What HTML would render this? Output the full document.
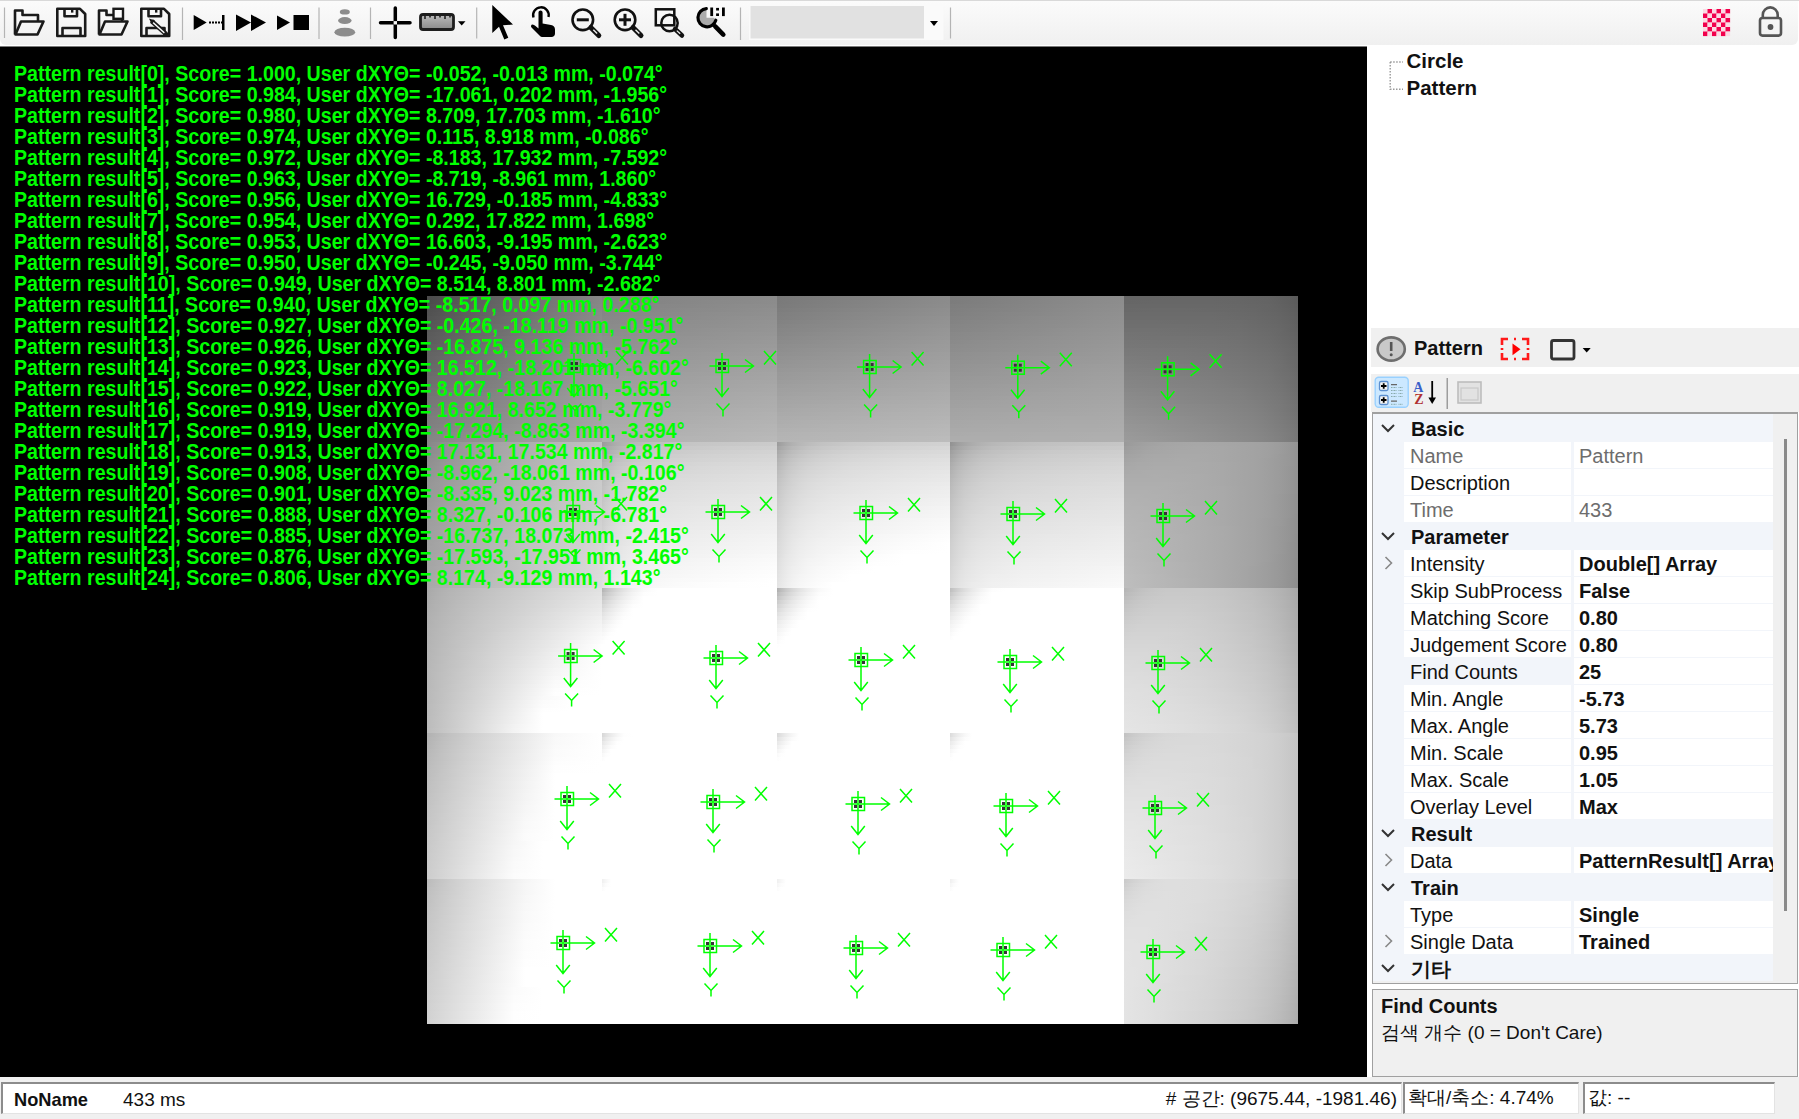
<!DOCTYPE html>
<html><head><meta charset="utf-8">
<style>
*{box-sizing:border-box}
html,body{margin:0;padding:0;width:1799px;height:1119px;overflow:hidden;background:#f0f0f0;font-family:"Liberation Sans",sans-serif}
.abs{position:absolute}
#tb{position:absolute;left:0;top:0;width:1799px;height:46px;background:#fff}
#tbi{position:absolute;left:0;top:1px;width:1798px;height:44px;background:linear-gradient(#fbfbfb,#f0f0f0);border-radius:0 0 6px 6px}
#tbline{position:absolute;left:0;top:0;width:1799px;height:1px;background:#d9d9d9}
#view{position:absolute;left:0;top:47px;width:1367px;height:1030px;background:#000;overflow:hidden}
#img{position:absolute;left:427px;top:296px;width:871px;height:728px;background:#888}
#img i{position:absolute;left:0;width:871px;display:block}
.ov{position:absolute;left:0;top:0}
.gl{position:absolute;left:14px;height:21px;line-height:21px;font-weight:bold;font-size:21.6px;color:#00ff00;white-space:pre;transform-origin:0 0;transform:scaleX(0.908)}
#rp{position:absolute;left:1367px;top:46px;width:432px;height:1031px;background:#fff}
.tree{position:absolute;font-size:20.5px;font-weight:bold;color:#111}
#ph{position:absolute;left:1371px;top:328px;width:428px;height:39px;background:#f0f0f0}
#ptb{position:absolute;left:1371px;top:374px;width:428px;height:38px;background:#f0f0f0}
#grid{position:absolute;left:1372px;top:412px;width:426px;height:572px;border:1px solid #a0a0a0;border-top-width:2px;background:#f0f0f0}
#gin{position:absolute;left:0;top:0;width:400px;height:567px;background:#f2f5fa}
.pr{position:absolute;left:0;width:400px;height:27px}
.cat .cn{position:absolute;left:38px;top:1px;line-height:28px;font-weight:bold;font-size:20px;color:#111}
.chev{position:absolute;left:8px;top:10px}
.chevr{position:absolute;left:11px;top:7px}
.pl{position:absolute;left:31px;top:1px;width:167px;height:26px;background:#fff;padding-left:6px;line-height:28px;font-size:20px;color:#111;white-space:nowrap;overflow:hidden}
.pv{position:absolute;left:201px;top:1px;width:199px;height:26px;background:#fff;padding-left:5px;line-height:28px;font-size:20px;font-weight:bold;color:#111;white-space:nowrap;overflow:hidden}
.pl.sel{background:#f2f5fa}
.ro{color:#6d6d6d !important;font-weight:normal !important}
#sb{position:absolute;left:1773px;top:413px;width:24px;height:570px;background:#f0f0f0}
#sbt{position:absolute;left:1784px;top:439px;width:3px;height:472px;background:#8a8a8a}
#desc{position:absolute;left:1372px;top:989px;width:426px;height:88px;border:1px solid #a0a0a0;background:#f0f0f0}
#status{position:absolute;left:0;top:1077px;width:1799px;height:42px;background:#f0f0f0}
.sp{position:absolute;top:5px;height:32px;background:#fff;border-top:2px solid #8c8c8c;border-left:2px solid #8c8c8c;border-bottom:1px solid #e3e3e3;border-right:1px solid #e3e3e3;font-size:19px;line-height:28px;color:#111;white-space:pre}
</style></head><body>
<div id="tb"><div id="tbline"></div><div id="tbi"></div>
<svg class="abs" style="left:0;top:0" width="1799" height="46" viewBox="0 0 1799 46"><line x1="4.5" y1="7.5" x2="4.5" y2="38.0" stroke="#b4b4b4" stroke-width="1.2"/><g transform="translate(0 0)" fill="none" stroke="#1a1a1a" stroke-width="2.6" stroke-linejoin="round"><path d="M15 34.5V10.5H22.5V15H38V21.5"/><path d="M15.5 34.5L21 21.5H43.5L37.5 34.5Z"/></g><g transform="translate(0 0)" fill="none" stroke="#1a1a1a" stroke-width="2.6" stroke-linejoin="round"><path d="M57.3 8.8H80L85.2 14V36H57.3Z"/><path d="M64.5 9V16.2H77V9"/><path d="M62.5 35.5V28H80.5V35.5"/><rect x="71" y="9" width="2.4" height="3.6" fill="#1a1a1a" stroke="none"/></g><g transform="translate(84 0)" fill="none" stroke="#1a1a1a" stroke-width="2.6" stroke-linejoin="round"><path d="M15 34.5V10.5H22.5V15H38V21.5"/><path d="M15.5 34.5L21 21.5H43.5L37.5 34.5Z"/></g><rect x="113.5" y="8.8" width="9.5" height="10" fill="#fff" stroke="#1a1a1a" stroke-width="2.4"/><g transform="translate(84 0)" fill="none" stroke="#1a1a1a" stroke-width="2.6" stroke-linejoin="round"><path d="M57.3 8.8H80L85.2 14V36H57.3Z"/><path d="M64.5 9V16.2H77V9"/><path d="M62.5 35.5V28H80.5V35.5"/><rect x="71" y="9" width="2.4" height="3.6" fill="#1a1a1a" stroke="none"/></g><path d="M151.5 21L166 34" stroke="#1a1a1a" stroke-width="4.5" stroke-linecap="butt"/><path d="M153 22.5L164.5 33" stroke="#fff" stroke-width="1.5"/><path d="M149 18.5L155 20.5L151.5 24Z" fill="#1a1a1a"/><rect x="164.5" y="32.5" width="4.5" height="4.5" fill="#1a1a1a"/><line x1="182.5" y1="7.5" x2="182.5" y2="40.0" stroke="#b4b4b4" stroke-width="1.2"/><path d="M193.7 15L206.7 22.6L193.7 30Z" fill="#000"/><path d="M209 22.6H222" stroke="#000" stroke-width="2" stroke-dasharray="2 1"/><rect x="222" y="15" width="2.5" height="15" fill="#000"/><path d="M236 14.5L251 22.6L236 31Z M251 14.5L266 22.6L251 31Z" fill="#000"/><path d="M277 15.5L290 22.6L277 30Z" fill="#000"/><rect x="293.5" y="15" width="15.5" height="15" fill="#000"/><line x1="319.0" y1="7.5" x2="319.0" y2="39.0" stroke="#b4b4b4" stroke-width="1.2"/><g fill="#8c8c8c"><ellipse cx="344.8" cy="11.9" rx="5" ry="2.6"/><ellipse cx="344.8" cy="20.6" rx="6.8" ry="3.5"/><ellipse cx="344.8" cy="32.2" rx="10.4" ry="4.4"/></g><line x1="370.5" y1="7.5" x2="370.5" y2="39.0" stroke="#b4b4b4" stroke-width="1.2"/><path d="M380.5 22.8H393.6M397 22.8H410M395.3 8V21.1M395.3 24.5V37.6" stroke="#000" stroke-width="3.5" stroke-linecap="round"/><rect x="393.6" y="21.1" width="3.4" height="3.4" fill="#f6f6f6"/><defs><linearGradient id="rg" x1="0" y1="0" x2="0" y2="1"><stop offset="0" stop-color="#bdbdbd"/><stop offset="1" stop-color="#8a8a8a"/></linearGradient></defs><rect x="420.5" y="14.5" width="33" height="15" rx="2.5" fill="url(#rg)" stroke="#1e1e1e" stroke-width="2.8"/><path d="M425 15V19M430 15V17.5M435 15V19M440 15V17.5M445 15V19M450 15V17.5" stroke="#1e1e1e" stroke-width="1.6"/><path d="M458 21.2H465.5L461.7 25.5Z" fill="#000"/><line x1="476.7" y1="7.5" x2="476.7" y2="38.5" stroke="#b4b4b4" stroke-width="1.2"/><path d="M492.3 5V33L499 26.8L504.3 39.5L508.3 37.8L503 25.3L513 24.5Z" fill="#000"/><path d="M533.5 17.5A7.8 7.8 0 1 1 548.5 17" fill="none" stroke="#000" stroke-width="2.4"/><path d="M538.5 12.5C538.5 9.8 542.6 9.8 542.6 12.5V23.5L551 25C553.5 25.4 555 27 555 29.5V33.5C555 35.5 553.5 37 551.5 37H543C541.5 37 540.5 36.5 539.5 35.5L531.5 27.5C530.5 26.5 531 24.5 532.5 24.5C533.5 24.5 534.5 25 535.5 26L538.5 28.5Z" fill="#000"/><circle cx="582.8" cy="19.8" r="10.3" fill="none" stroke="#111" stroke-width="2.6"/><path d="M576.8 19.8H588.8" stroke="#111" stroke-width="3"/><path d="M590.8 27.5L598.8 35.5" stroke="#111" stroke-width="5" stroke-linecap="round"/><path d="M593.3 29.8L597.1 33.6" stroke="#eee" stroke-width="1.4"/><circle cx="625.0" cy="19.8" r="10.3" fill="none" stroke="#111" stroke-width="2.6"/><path d="M619.0 19.8H631.0" stroke="#111" stroke-width="3"/><path d="M625.0 13.8V25.8" stroke="#111" stroke-width="3"/><path d="M633.0 27.5L641.0 35.5" stroke="#111" stroke-width="5" stroke-linecap="round"/><path d="M635.5 29.8L639.3 33.6" stroke="#eee" stroke-width="1.4"/><rect x="655.8" y="9.3" width="18.5" height="16" fill="none" stroke="#111" stroke-width="2.5"/><circle cx="669.5" cy="23" r="8.2" fill="none" stroke="#111" stroke-width="2.5"/><path d="M675 29L682 35.5" stroke="#111" stroke-width="4.5" stroke-linecap="round"/><path d="M676.8 30.6L680.2 33.8" stroke="#eee" stroke-width="1.3"/><path d="M706.5 17.7V9.7A8 8 0 1 0 714.5 17.7Z" fill="#ababab"/><path d="M706.3 8.6A9.1 9.1 0 1 0 715.8 20.2" fill="none" stroke="#000" stroke-width="3.2" stroke-linecap="round"/><rect x="710.3" y="7.5" width="2.8" height="8.6" fill="#000"/><rect x="716.1" y="7.9" width="2.9" height="2.6" fill="#000"/><rect x="716.1" y="13.4" width="2.9" height="2.6" fill="#000"/><rect x="722" y="7.5" width="2.8" height="8.6" fill="#000"/><path d="M715.2 26.4L723.3 34.6" stroke="#000" stroke-width="4.6" stroke-linecap="round"/><line x1="740.5" y1="7.5" x2="740.5" y2="40.0" stroke="#b4b4b4" stroke-width="1.2"/><rect x="749" y="4.5" width="194.5" height="35.5" fill="#fafafa"/><rect x="750.5" y="6" width="173.5" height="32.5" fill="#e1e1e1"/><path d="M930 21H938L934 26Z" fill="#000"/><line x1="950.5" y1="7.5" x2="950.5" y2="38.5" stroke="#b4b4b4" stroke-width="1.2"/><rect x="1703.0" y="9.0" width="4.6" height="4.6" fill="#fcd9e3"/><rect x="1707.5" y="9.0" width="4.6" height="4.6" fill="#f2004c"/><rect x="1712.0" y="9.0" width="4.6" height="4.6" fill="#fcd9e3"/><rect x="1716.5" y="9.0" width="4.6" height="4.6" fill="#f2004c"/><rect x="1721.0" y="9.0" width="4.6" height="4.6" fill="#fcd9e3"/><rect x="1725.5" y="9.0" width="4.6" height="4.6" fill="#f2004c"/><rect x="1703.0" y="13.5" width="4.6" height="4.6" fill="#f2004c"/><rect x="1707.5" y="13.5" width="4.6" height="4.6" fill="#fcd9e3"/><rect x="1712.0" y="13.5" width="4.6" height="4.6" fill="#f2004c"/><rect x="1716.5" y="13.5" width="4.6" height="4.6" fill="#fcd9e3"/><rect x="1721.0" y="13.5" width="4.6" height="4.6" fill="#f2004c"/><rect x="1725.5" y="13.5" width="4.6" height="4.6" fill="#fcd9e3"/><rect x="1703.0" y="18.0" width="4.6" height="4.6" fill="#fcd9e3"/><rect x="1707.5" y="18.0" width="4.6" height="4.6" fill="#f2004c"/><rect x="1712.0" y="18.0" width="4.6" height="4.6" fill="#fcd9e3"/><rect x="1716.5" y="18.0" width="4.6" height="4.6" fill="#f2004c"/><rect x="1721.0" y="18.0" width="4.6" height="4.6" fill="#fcd9e3"/><rect x="1725.5" y="18.0" width="4.6" height="4.6" fill="#f2004c"/><rect x="1703.0" y="22.5" width="4.6" height="4.6" fill="#f2004c"/><rect x="1707.5" y="22.5" width="4.6" height="4.6" fill="#fcd9e3"/><rect x="1712.0" y="22.5" width="4.6" height="4.6" fill="#f2004c"/><rect x="1716.5" y="22.5" width="4.6" height="4.6" fill="#fcd9e3"/><rect x="1721.0" y="22.5" width="4.6" height="4.6" fill="#f2004c"/><rect x="1725.5" y="22.5" width="4.6" height="4.6" fill="#fcd9e3"/><rect x="1703.0" y="27.0" width="4.6" height="4.6" fill="#fcd9e3"/><rect x="1707.5" y="27.0" width="4.6" height="4.6" fill="#f2004c"/><rect x="1712.0" y="27.0" width="4.6" height="4.6" fill="#fcd9e3"/><rect x="1716.5" y="27.0" width="4.6" height="4.6" fill="#f2004c"/><rect x="1721.0" y="27.0" width="4.6" height="4.6" fill="#fcd9e3"/><rect x="1725.5" y="27.0" width="4.6" height="4.6" fill="#f2004c"/><rect x="1703.0" y="31.5" width="4.6" height="4.6" fill="#f2004c"/><rect x="1707.5" y="31.5" width="4.6" height="4.6" fill="#fcd9e3"/><rect x="1712.0" y="31.5" width="4.6" height="4.6" fill="#f2004c"/><rect x="1716.5" y="31.5" width="4.6" height="4.6" fill="#fcd9e3"/><rect x="1721.0" y="31.5" width="4.6" height="4.6" fill="#f2004c"/><rect x="1725.5" y="31.5" width="4.6" height="4.6" fill="#fcd9e3"/><path d="M1762.8 18.5V14.8A7.45 7.45 0 0 1 1777.7 14.8V18.5" fill="none" stroke="#555" stroke-width="2.6"/><rect x="1760" y="18" width="21" height="17.6" rx="2.5" fill="none" stroke="#555" stroke-width="2.6"/><circle cx="1770.5" cy="27" r="2.9" fill="#555"/></svg>
</div>
<div class="abs" style="left:0;top:46px;width:1367px;height:1px;background:#7a7a7a"></div><div id="view">
<div id="img" style="left:427px;top:249px"><i style="top:0px;height:4px;background:linear-gradient(90deg,#4b4b4b 0px,#555555 29px,#5f5f5f 58px,#686868 87px,#727272 116px,#7c7c7c 145px,#868686 175px,#818181 175px,#828282 204px,#848484 233px,#868686 262px,#878787 291px,#898989 320px,#8b8b8b 350px,#787878 350px,#7b7b7b 379px,#7e7e7e 408px,#818181 437px,#848484 466px,#888888 495px,#8b8b8b 523px,#7b7b7b 523px,#7e7e7e 552px,#818181 581px,#848484 610px,#878787 639px,#8a8a8a 668px,#8c8c8c 697px,#656565 697px,#656565 726px,#666666 755px,#666666 784px,#656565 813px,#646464 826px,#636363 841px,#606060 853px,#5e5e5e 863px,#5a5a5a 871px)"></i><i style="top:4px;height:4px;background:linear-gradient(90deg,#4c4c4c 0px,#565656 29px,#606060 58px,#6a6a6a 87px,#747474 116px,#7d7d7d 145px,#878787 175px,#828282 175px,#848484 204px,#858585 233px,#878787 262px,#898989 291px,#8a8a8a 320px,#8c8c8c 350px,#7a7a7a 350px,#7d7d7d 379px,#808080 408px,#838383 437px,#868686 466px,#898989 495px,#8c8c8c 523px,#7c7c7c 523px,#7f7f7f 552px,#828282 581px,#858585 610px,#888888 639px,#8b8b8b 668px,#8d8d8d 697px,#666666 697px,#676767 726px,#676767 755px,#676767 784px,#666666 813px,#656565 826px,#646464 841px,#616161 853px,#5e5e5e 863px,#5b5b5b 871px)"></i><i style="top:8px;height:4px;background:linear-gradient(90deg,#4e4e4e 0px,#585858 29px,#616161 58px,#6b6b6b 87px,#757575 116px,#7e7e7e 145px,#888888 175px,#838383 175px,#858585 204px,#878787 233px,#888888 262px,#8a8a8a 291px,#8c8c8c 320px,#8d8d8d 350px,#7b7b7b 350px,#7e7e7e 379px,#818181 408px,#848484 437px,#878787 466px,#8a8a8a 495px,#8d8d8d 523px,#7e7e7e 523px,#808080 552px,#838383 581px,#868686 610px,#898989 639px,#8c8c8c 668px,#8e8e8e 697px,#686868 697px,#686868 726px,#686868 755px,#686868 784px,#676767 813px,#666666 826px,#656565 841px,#626262 853px,#5f5f5f 863px,#5c5c5c 871px)"></i><i style="top:12px;height:4px;background:linear-gradient(90deg,#505050 0px,#595959 29px,#636363 58px,#6c6c6c 87px,#767676 116px,#808080 145px,#898989 175px,#858585 175px,#868686 204px,#888888 233px,#8a8a8a 262px,#8b8b8b 291px,#8d8d8d 320px,#8f8f8f 350px,#7d7d7d 350px,#808080 379px,#838383 408px,#868686 437px,#898989 466px,#8c8c8c 495px,#8f8f8f 523px,#7f7f7f 523px,#828282 552px,#848484 581px,#878787 610px,#8a8a8a 639px,#8d8d8d 668px,#8f8f8f 697px,#696969 697px,#6a6a6a 726px,#6a6a6a 755px,#696969 784px,#686868 813px,#676767 826px,#656565 841px,#636363 853px,#606060 863px,#5d5d5d 871px)"></i><i style="top:16px;height:4px;background:linear-gradient(90deg,#515151 0px,#5b5b5b 29px,#646464 58px,#6e6e6e 87px,#777777 116px,#818181 145px,#8a8a8a 175px,#868686 175px,#888888 204px,#898989 233px,#8b8b8b 262px,#8d8d8d 291px,#8e8e8e 320px,#909090 350px,#7f7f7f 350px,#828282 379px,#858585 408px,#888888 437px,#8a8a8a 466px,#8d8d8d 495px,#909090 523px,#808080 523px,#838383 552px,#868686 581px,#888888 610px,#8b8b8b 639px,#8e8e8e 668px,#909090 697px,#6b6b6b 697px,#6b6b6b 726px,#6b6b6b 755px,#6b6b6b 784px,#696969 813px,#686868 826px,#666666 841px,#646464 853px,#616161 863px,#5e5e5e 871px)"></i><i style="top:20px;height:4px;background:linear-gradient(90deg,#535353 0px,#5c5c5c 29px,#666666 58px,#6f6f6f 87px,#787878 116px,#828282 145px,#8b8b8b 175px,#878787 175px,#898989 204px,#8b8b8b 233px,#8c8c8c 262px,#8e8e8e 291px,#909090 320px,#919191 350px,#808080 350px,#838383 379px,#868686 408px,#898989 437px,#8c8c8c 466px,#8f8f8f 495px,#929292 523px,#828282 523px,#848484 552px,#878787 581px,#8a8a8a 610px,#8c8c8c 639px,#8f8f8f 668px,#919191 697px,#6c6c6c 697px,#6c6c6c 726px,#6c6c6c 755px,#6c6c6c 784px,#6a6a6a 813px,#696969 826px,#676767 841px,#656565 853px,#626262 863px,#5f5f5f 871px)"></i><i style="top:24px;height:4px;background:linear-gradient(90deg,#555555 0px,#5e5e5e 29px,#676767 58px,#707070 87px,#7a7a7a 116px,#838383 145px,#8c8c8c 175px,#898989 175px,#8a8a8a 204px,#8c8c8c 233px,#8e8e8e 262px,#8f8f8f 291px,#919191 320px,#939393 350px,#828282 350px,#858585 379px,#888888 408px,#8b8b8b 437px,#8d8d8d 466px,#909090 495px,#939393 523px,#838383 523px,#868686 552px,#888888 581px,#8b8b8b 610px,#8d8d8d 639px,#909090 668px,#929292 697px,#6e6e6e 697px,#6e6e6e 726px,#6d6d6d 755px,#6d6d6d 784px,#6c6c6c 813px,#6a6a6a 826px,#686868 841px,#666666 853px,#636363 863px,#5f5f5f 871px)"></i><i style="top:28px;height:4px;background:linear-gradient(90deg,#565656 0px,#5f5f5f 29px,#696969 58px,#727272 87px,#7b7b7b 116px,#848484 145px,#8d8d8d 175px,#8a8a8a 175px,#8c8c8c 204px,#8d8d8d 233px,#8f8f8f 262px,#909090 291px,#929292 320px,#949494 350px,#848484 350px,#878787 379px,#898989 408px,#8c8c8c 437px,#8f8f8f 466px,#929292 495px,#949494 523px,#858585 523px,#878787 552px,#8a8a8a 581px,#8c8c8c 610px,#8e8e8e 639px,#919191 668px,#939393 697px,#6f6f6f 697px,#6f6f6f 726px,#6f6f6f 755px,#6e6e6e 784px,#6d6d6d 813px,#6b6b6b 826px,#696969 841px,#676767 853px,#646464 863px,#606060 871px)"></i><i style="top:32px;height:4px;background:linear-gradient(90deg,#585858 0px,#616161 29px,#6a6a6a 58px,#737373 87px,#7c7c7c 116px,#858585 145px,#8e8e8e 175px,#8b8b8b 175px,#8d8d8d 204px,#8e8e8e 233px,#909090 262px,#929292 291px,#939393 320px,#959595 350px,#868686 350px,#888888 379px,#8b8b8b 408px,#8e8e8e 437px,#909090 466px,#939393 495px,#969696 523px,#868686 523px,#888888 552px,#8b8b8b 581px,#8d8d8d 610px,#909090 639px,#929292 668px,#949494 697px,#717171 697px,#717171 726px,#707070 755px,#6f6f6f 784px,#6e6e6e 813px,#6c6c6c 826px,#6a6a6a 841px,#686868 853px,#646464 863px,#616161 871px)"></i><i style="top:36px;height:4px;background:linear-gradient(90deg,#5a5a5a 0px,#636363 29px,#6b6b6b 58px,#747474 87px,#7d7d7d 116px,#868686 145px,#8f8f8f 175px,#8c8c8c 175px,#8e8e8e 204px,#909090 233px,#919191 262px,#939393 291px,#959595 320px,#969696 350px,#878787 350px,#8a8a8a 379px,#8d8d8d 408px,#8f8f8f 437px,#929292 466px,#949494 495px,#979797 523px,#888888 523px,#8a8a8a 552px,#8c8c8c 581px,#8e8e8e 610px,#919191 639px,#939393 668px,#959595 697px,#737373 697px,#727272 726px,#717171 755px,#707070 784px,#6f6f6f 813px,#6d6d6d 826px,#6b6b6b 841px,#686868 853px,#656565 863px,#626262 871px)"></i><i style="top:40px;height:4px;background:linear-gradient(90deg,#5b5b5b 0px,#646464 29px,#6d6d6d 58px,#767676 87px,#7e7e7e 116px,#878787 145px,#909090 175px,#8e8e8e 175px,#8f8f8f 204px,#919191 233px,#939393 262px,#949494 291px,#969696 320px,#989898 350px,#898989 350px,#8c8c8c 379px,#8e8e8e 408px,#919191 437px,#939393 466px,#969696 495px,#989898 523px,#898989 523px,#8b8b8b 552px,#8d8d8d 581px,#909090 610px,#929292 639px,#949494 668px,#969696 697px,#747474 697px,#737373 726px,#737373 755px,#727272 784px,#707070 813px,#6e6e6e 826px,#6c6c6c 841px,#696969 853px,#666666 863px,#636363 871px)"></i><i style="top:44px;height:4px;background:linear-gradient(90deg,#5d5d5d 0px,#666666 29px,#6e6e6e 58px,#777777 87px,#808080 116px,#888888 145px,#919191 175px,#8f8f8f 175px,#919191 204px,#929292 233px,#949494 262px,#969696 291px,#979797 320px,#999999 350px,#8b8b8b 350px,#8d8d8d 379px,#909090 408px,#929292 437px,#959595 466px,#979797 495px,#9a9a9a 523px,#8a8a8a 523px,#8d8d8d 552px,#8f8f8f 581px,#919191 610px,#939393 639px,#959595 668px,#979797 697px,#767676 697px,#757575 726px,#747474 755px,#737373 784px,#717171 813px,#6f6f6f 826px,#6d6d6d 841px,#6a6a6a 853px,#676767 863px,#636363 871px)"></i><i style="top:48px;height:4px;background:linear-gradient(90deg,#5f5f5f 0px,#676767 29px,#707070 58px,#787878 87px,#818181 116px,#898989 145px,#929292 175px,#909090 175px,#929292 204px,#949494 233px,#959595 262px,#979797 291px,#999999 320px,#9a9a9a 350px,#8d8d8d 350px,#8f8f8f 379px,#919191 408px,#949494 437px,#969696 466px,#999999 495px,#9b9b9b 523px,#8c8c8c 523px,#8e8e8e 552px,#909090 581px,#929292 610px,#949494 639px,#969696 668px,#989898 697px,#777777 697px,#767676 726px,#757575 755px,#747474 784px,#727272 813px,#707070 826px,#6e6e6e 841px,#6b6b6b 853px,#686868 863px,#646464 871px)"></i><i style="top:52px;height:4px;background:linear-gradient(90deg,#606060 0px,#696969 29px,#717171 58px,#7a7a7a 87px,#828282 116px,#8b8b8b 145px,#939393 175px,#929292 175px,#939393 204px,#959595 233px,#979797 262px,#989898 291px,#9a9a9a 320px,#9c9c9c 350px,#8e8e8e 350px,#919191 379px,#939393 408px,#959595 437px,#989898 466px,#9a9a9a 495px,#9c9c9c 523px,#8d8d8d 523px,#8f8f8f 552px,#919191 581px,#939393 610px,#959595 639px,#979797 668px,#999999 697px,#797979 697px,#787878 726px,#777777 755px,#757575 784px,#737373 813px,#717171 826px,#6f6f6f 841px,#6c6c6c 853px,#696969 863px,#656565 871px)"></i><i style="top:56px;height:4px;background:linear-gradient(90deg,#626262 0px,#6a6a6a 29px,#737373 58px,#7b7b7b 87px,#838383 116px,#8c8c8c 145px,#949494 175px,#939393 175px,#959595 204px,#969696 233px,#989898 262px,#9a9a9a 291px,#9b9b9b 320px,#9d9d9d 350px,#909090 350px,#929292 379px,#959595 408px,#979797 437px,#999999 466px,#9c9c9c 495px,#9e9e9e 523px,#8f8f8f 523px,#919191 552px,#939393 581px,#949494 610px,#969696 639px,#989898 668px,#9a9a9a 697px,#7a7a7a 697px,#797979 726px,#787878 755px,#767676 784px,#747474 813px,#727272 826px,#707070 841px,#6d6d6d 853px,#696969 863px,#666666 871px)"></i><i style="top:60px;height:4px;background:linear-gradient(90deg,#636363 0px,#6c6c6c 29px,#747474 58px,#7c7c7c 87px,#848484 116px,#8d8d8d 145px,#959595 175px,#949494 175px,#969696 204px,#989898 233px,#999999 262px,#9b9b9b 291px,#9d9d9d 320px,#9e9e9e 350px,#929292 350px,#949494 379px,#969696 408px,#999999 437px,#9b9b9b 466px,#9d9d9d 495px,#9f9f9f 523px,#909090 523px,#929292 552px,#949494 581px,#969696 610px,#989898 639px,#999999 668px,#9b9b9b 697px,#7c7c7c 697px,#7a7a7a 726px,#797979 755px,#777777 784px,#757575 813px,#737373 826px,#717171 841px,#6e6e6e 853px,#6a6a6a 863px,#676767 871px)"></i><i style="top:64px;height:4px;background:linear-gradient(90deg,#656565 0px,#6d6d6d 29px,#757575 58px,#7e7e7e 87px,#868686 116px,#8e8e8e 145px,#969696 175px,#969696 175px,#979797 204px,#999999 233px,#9b9b9b 262px,#9c9c9c 291px,#9e9e9e 320px,#a0a0a0 350px,#939393 350px,#969696 379px,#989898 408px,#9a9a9a 437px,#9c9c9c 466px,#9e9e9e 495px,#a1a1a1 523px,#929292 523px,#939393 552px,#959595 581px,#979797 610px,#999999 639px,#9a9a9a 668px,#9c9c9c 697px,#7d7d7d 697px,#7c7c7c 726px,#7a7a7a 755px,#797979 784px,#767676 813px,#747474 826px,#727272 841px,#6f6f6f 853px,#6b6b6b 863px,#686868 871px)"></i><i style="top:68px;height:4px;background:linear-gradient(90deg,#676767 0px,#6f6f6f 29px,#777777 58px,#7f7f7f 87px,#878787 116px,#8f8f8f 145px,#979797 175px,#979797 175px,#999999 204px,#9a9a9a 233px,#9c9c9c 262px,#9e9e9e 291px,#9f9f9f 320px,#a1a1a1 350px,#959595 350px,#979797 379px,#999999 408px,#9c9c9c 437px,#9e9e9e 466px,#a0a0a0 495px,#a2a2a2 523px,#939393 523px,#959595 552px,#969696 581px,#989898 610px,#9a9a9a 639px,#9c9c9c 668px,#9d9d9d 697px,#7f7f7f 697px,#7d7d7d 726px,#7c7c7c 755px,#7a7a7a 784px,#777777 813px,#757575 826px,#737373 841px,#707070 853px,#6c6c6c 863px,#686868 871px)"></i><i style="top:72px;height:4px;background:linear-gradient(90deg,#686868 0px,#707070 29px,#787878 58px,#808080 87px,#888888 116px,#909090 145px,#989898 175px,#989898 175px,#9a9a9a 204px,#9c9c9c 233px,#9d9d9d 262px,#9f9f9f 291px,#a1a1a1 320px,#a2a2a2 350px,#979797 350px,#999999 379px,#9b9b9b 408px,#9d9d9d 437px,#9f9f9f 466px,#a1a1a1 495px,#a3a3a3 523px,#949494 523px,#969696 552px,#989898 581px,#999999 610px,#9b9b9b 639px,#9d9d9d 668px,#9e9e9e 697px,#808080 697px,#7f7f7f 726px,#7d7d7d 755px,#7b7b7b 784px,#787878 813px,#767676 826px,#747474 841px,#707070 853px,#6d6d6d 863px,#696969 871px)"></i><i style="top:76px;height:4px;background:linear-gradient(90deg,#6a6a6a 0px,#727272 29px,#7a7a7a 58px,#828282 87px,#898989 116px,#919191 145px,#999999 175px,#9a9a9a 175px,#9b9b9b 204px,#9d9d9d 233px,#9f9f9f 262px,#a0a0a0 291px,#a2a2a2 320px,#a4a4a4 350px,#999999 350px,#9b9b9b 379px,#9d9d9d 408px,#9f9f9f 437px,#a1a1a1 466px,#a3a3a3 495px,#a5a5a5 523px,#969696 523px,#979797 552px,#999999 581px,#9b9b9b 610px,#9c9c9c 639px,#9e9e9e 668px,#9f9f9f 697px,#828282 697px,#808080 726px,#7e7e7e 755px,#7c7c7c 784px,#797979 813px,#777777 826px,#757575 841px,#717171 853px,#6e6e6e 863px,#6a6a6a 871px)"></i><i style="top:80px;height:4px;background:linear-gradient(90deg,#6c6c6c 0px,#737373 29px,#7b7b7b 58px,#838383 87px,#8b8b8b 116px,#929292 145px,#9a9a9a 175px,#9b9b9b 175px,#9d9d9d 204px,#9e9e9e 233px,#a0a0a0 262px,#a2a2a2 291px,#a3a3a3 320px,#a5a5a5 350px,#9a9a9a 350px,#9c9c9c 379px,#9e9e9e 408px,#a0a0a0 437px,#a2a2a2 466px,#a4a4a4 495px,#a6a6a6 523px,#979797 523px,#999999 552px,#9a9a9a 581px,#9c9c9c 610px,#9d9d9d 639px,#9f9f9f 668px,#a0a0a0 697px,#838383 697px,#828282 726px,#808080 755px,#7d7d7d 784px,#7a7a7a 813px,#787878 826px,#767676 841px,#727272 853px,#6f6f6f 863px,#6b6b6b 871px)"></i><i style="top:84px;height:4px;background:linear-gradient(90deg,#6d6d6d 0px,#757575 29px,#7d7d7d 58px,#848484 87px,#8c8c8c 116px,#939393 145px,#9b9b9b 175px,#9c9c9c 175px,#9e9e9e 204px,#a0a0a0 233px,#a1a1a1 262px,#a3a3a3 291px,#a5a5a5 320px,#a6a6a6 350px,#9c9c9c 350px,#9e9e9e 379px,#a0a0a0 408px,#a2a2a2 437px,#a4a4a4 466px,#a6a6a6 495px,#a7a7a7 523px,#999999 523px,#9a9a9a 552px,#9b9b9b 581px,#9d9d9d 610px,#9e9e9e 639px,#a0a0a0 668px,#a1a1a1 697px,#858585 697px,#838383 726px,#818181 755px,#7f7f7f 784px,#7b7b7b 813px,#797979 826px,#767676 841px,#737373 853px,#6f6f6f 863px,#6c6c6c 871px)"></i><i style="top:88px;height:4px;background:linear-gradient(90deg,#6f6f6f 0px,#767676 29px,#7e7e7e 58px,#858585 87px,#8d8d8d 116px,#949494 145px,#9c9c9c 175px,#9e9e9e 175px,#9f9f9f 204px,#a1a1a1 233px,#a3a3a3 262px,#a4a4a4 291px,#a6a6a6 320px,#a8a8a8 350px,#9e9e9e 350px,#a0a0a0 379px,#a2a2a2 408px,#a3a3a3 437px,#a5a5a5 466px,#a7a7a7 495px,#a9a9a9 523px,#9a9a9a 523px,#9b9b9b 552px,#9d9d9d 581px,#9e9e9e 610px,#9f9f9f 639px,#a1a1a1 668px,#a2a2a2 697px,#868686 697px,#848484 726px,#828282 755px,#808080 784px,#7c7c7c 813px,#7a7a7a 826px,#777777 841px,#747474 853px,#707070 863px,#6c6c6c 871px)"></i><i style="top:92px;height:4px;background:linear-gradient(90deg,#717171 0px,#787878 29px,#7f7f7f 58px,#878787 87px,#8e8e8e 116px,#969696 145px,#9d9d9d 175px,#9f9f9f 175px,#a1a1a1 204px,#a2a2a2 233px,#a4a4a4 262px,#a6a6a6 291px,#a7a7a7 320px,#a9a9a9 350px,#a0a0a0 350px,#a1a1a1 379px,#a3a3a3 408px,#a5a5a5 437px,#a7a7a7 466px,#a8a8a8 495px,#aaaaaa 523px,#9b9b9b 523px,#9d9d9d 552px,#9e9e9e 581px,#9f9f9f 610px,#a1a1a1 639px,#a2a2a2 668px,#a3a3a3 697px,#888888 697px,#868686 726px,#848484 755px,#818181 784px,#7e7e7e 813px,#7b7b7b 826px,#787878 841px,#757575 853px,#717171 863px,#6d6d6d 871px)"></i><i style="top:96px;height:4px;background:linear-gradient(90deg,#727272 0px,#7a7a7a 29px,#818181 58px,#888888 87px,#8f8f8f 116px,#979797 145px,#9e9e9e 175px,#a0a0a0 175px,#a2a2a2 204px,#a4a4a4 233px,#a5a5a5 262px,#a7a7a7 291px,#a9a9a9 320px,#aaaaaa 350px,#a1a1a1 350px,#a3a3a3 379px,#a5a5a5 408px,#a6a6a6 437px,#a8a8a8 466px,#aaaaaa 495px,#acacac 523px,#9d9d9d 523px,#9e9e9e 552px,#9f9f9f 581px,#a1a1a1 610px,#a2a2a2 639px,#a3a3a3 668px,#a4a4a4 697px,#8a8a8a 697px,#878787 726px,#858585 755px,#828282 784px,#7f7f7f 813px,#7c7c7c 826px,#797979 841px,#767676 853px,#727272 863px,#6e6e6e 871px)"></i><i style="top:100px;height:4px;background:linear-gradient(90deg,#747474 0px,#7b7b7b 29px,#828282 58px,#898989 87px,#919191 116px,#989898 145px,#9f9f9f 175px,#a2a2a2 175px,#a3a3a3 204px,#a5a5a5 233px,#a7a7a7 262px,#a8a8a8 291px,#aaaaaa 320px,#acacac 350px,#a3a3a3 350px,#a5a5a5 379px,#a6a6a6 408px,#a8a8a8 437px,#aaaaaa 466px,#ababab 495px,#adadad 523px,#9e9e9e 523px,#9f9f9f 552px,#a1a1a1 581px,#a2a2a2 610px,#a3a3a3 639px,#a4a4a4 668px,#a5a5a5 697px,#8b8b8b 697px,#898989 726px,#868686 755px,#838383 784px,#808080 813px,#7d7d7d 826px,#7a7a7a 841px,#777777 853px,#737373 863px,#6f6f6f 871px)"></i><i style="top:104px;height:4px;background:linear-gradient(90deg,#767676 0px,#7d7d7d 29px,#848484 58px,#8b8b8b 87px,#929292 116px,#999999 145px,#a0a0a0 175px,#a3a3a3 175px,#a5a5a5 204px,#a6a6a6 233px,#a8a8a8 262px,#a9a9a9 291px,#ababab 320px,#adadad 350px,#a5a5a5 350px,#a6a6a6 379px,#a8a8a8 408px,#aaaaaa 437px,#ababab 466px,#adadad 495px,#aeaeae 523px,#a0a0a0 523px,#a1a1a1 552px,#a2a2a2 581px,#a3a3a3 610px,#a4a4a4 639px,#a5a5a5 668px,#a6a6a6 697px,#8d8d8d 697px,#8a8a8a 726px,#878787 755px,#848484 784px,#818181 813px,#7f7f7f 826px,#7b7b7b 841px,#787878 853px,#747474 863px,#707070 871px)"></i><i style="top:108px;height:4px;background:linear-gradient(90deg,#777777 0px,#7e7e7e 29px,#858585 58px,#8c8c8c 87px,#939393 116px,#9a9a9a 145px,#a1a1a1 175px,#a4a4a4 175px,#a6a6a6 204px,#a7a7a7 233px,#a9a9a9 262px,#ababab 291px,#acacac 320px,#aeaeae 350px,#a6a6a6 350px,#a8a8a8 379px,#aaaaaa 408px,#ababab 437px,#adadad 466px,#aeaeae 495px,#b0b0b0 523px,#a1a1a1 523px,#a2a2a2 552px,#a3a3a3 581px,#a4a4a4 610px,#a5a5a5 639px,#a6a6a6 668px,#a7a7a7 697px,#8e8e8e 697px,#8b8b8b 726px,#898989 755px,#868686 784px,#828282 813px,#808080 826px,#7c7c7c 841px,#797979 853px,#757575 863px,#717171 871px)"></i><i style="top:112px;height:4px;background:linear-gradient(90deg,#797979 0px,#808080 29px,#878787 58px,#8d8d8d 87px,#949494 116px,#9b9b9b 145px,#a2a2a2 175px,#a5a5a5 175px,#a7a7a7 204px,#a9a9a9 233px,#aaaaaa 262px,#acacac 291px,#aeaeae 320px,#afafaf 350px,#a8a8a8 350px,#aaaaaa 379px,#ababab 408px,#adadad 437px,#aeaeae 466px,#b0b0b0 495px,#b1b1b1 523px,#a3a3a3 523px,#a4a4a4 552px,#a4a4a4 581px,#a5a5a5 610px,#a6a6a6 639px,#a7a7a7 668px,#a8a8a8 697px,#909090 697px,#8d8d8d 726px,#8a8a8a 755px,#878787 784px,#838383 813px,#818181 826px,#7d7d7d 841px,#797979 853px,#757575 863px,#717171 871px)"></i><i style="top:116px;height:4px;background:linear-gradient(90deg,#7a7a7a 0px,#818181 29px,#888888 58px,#8f8f8f 87px,#959595 116px,#9c9c9c 145px,#a3a3a3 175px,#a7a7a7 175px,#a8a8a8 204px,#aaaaaa 233px,#acacac 262px,#adadad 291px,#afafaf 320px,#b1b1b1 350px,#aaaaaa 350px,#ababab 379px,#adadad 408px,#aeaeae 437px,#b0b0b0 466px,#b1b1b1 495px,#b2b2b2 523px,#a4a4a4 523px,#a5a5a5 552px,#a6a6a6 581px,#a7a7a7 610px,#a7a7a7 639px,#a8a8a8 668px,#a9a9a9 697px,#919191 697px,#8e8e8e 726px,#8b8b8b 755px,#888888 784px,#848484 813px,#828282 826px,#7e7e7e 841px,#7a7a7a 853px,#767676 863px,#727272 871px)"></i><i style="top:120px;height:4px;background:linear-gradient(90deg,#7c7c7c 0px,#838383 29px,#898989 58px,#909090 87px,#979797 116px,#9d9d9d 145px,#a4a4a4 175px,#a8a8a8 175px,#aaaaaa 204px,#ababab 233px,#adadad 262px,#afafaf 291px,#b0b0b0 320px,#b2b2b2 350px,#acacac 350px,#adadad 379px,#aeaeae 408px,#b0b0b0 437px,#b1b1b1 466px,#b2b2b2 495px,#b4b4b4 523px,#a5a5a5 523px,#a6a6a6 552px,#a7a7a7 581px,#a8a8a8 610px,#a9a9a9 639px,#a9a9a9 668px,#aaaaaa 697px,#939393 697px,#909090 726px,#8d8d8d 755px,#898989 784px,#858585 813px,#838383 826px,#7f7f7f 841px,#7b7b7b 853px,#777777 863px,#737373 871px)"></i><i style="top:124px;height:4px;background:linear-gradient(90deg,#7e7e7e 0px,#848484 29px,#8b8b8b 58px,#919191 87px,#989898 116px,#9e9e9e 145px,#a5a5a5 175px,#a9a9a9 175px,#ababab 204px,#adadad 233px,#aeaeae 262px,#b0b0b0 291px,#b2b2b2 320px,#b3b3b3 350px,#adadad 350px,#afafaf 379px,#b0b0b0 408px,#b1b1b1 437px,#b3b3b3 466px,#b4b4b4 495px,#b5b5b5 523px,#a7a7a7 523px,#a8a8a8 552px,#a8a8a8 581px,#a9a9a9 610px,#aaaaaa 639px,#aaaaaa 668px,#ababab 697px,#949494 697px,#919191 726px,#8e8e8e 755px,#8a8a8a 784px,#868686 813px,#848484 826px,#808080 841px,#7c7c7c 853px,#787878 863px,#747474 871px)"></i><i style="top:128px;height:4px;background:linear-gradient(90deg,#7f7f7f 0px,#868686 29px,#8c8c8c 58px,#939393 87px,#999999 116px,#9f9f9f 145px,#a6a6a6 175px,#ababab 175px,#acacac 204px,#aeaeae 233px,#b0b0b0 262px,#b1b1b1 291px,#b3b3b3 320px,#b5b5b5 350px,#afafaf 350px,#b0b0b0 379px,#b2b2b2 408px,#b3b3b3 437px,#b4b4b4 466px,#b5b5b5 495px,#b7b7b7 523px,#a8a8a8 523px,#a9a9a9 552px,#aaaaaa 581px,#aaaaaa 610px,#ababab 639px,#ababab 668px,#acacac 697px,#969696 697px,#939393 726px,#8f8f8f 755px,#8c8c8c 784px,#878787 813px,#858585 826px,#818181 841px,#7d7d7d 853px,#797979 863px,#757575 871px)"></i><i style="top:132px;height:4px;background:linear-gradient(90deg,#818181 0px,#878787 29px,#8e8e8e 58px,#949494 87px,#9a9a9a 116px,#a1a1a1 145px,#a7a7a7 175px,#acacac 175px,#aeaeae 204px,#afafaf 233px,#b1b1b1 262px,#b3b3b3 291px,#b4b4b4 320px,#b6b6b6 350px,#b1b1b1 350px,#b2b2b2 379px,#b3b3b3 408px,#b4b4b4 437px,#b6b6b6 466px,#b7b7b7 495px,#b8b8b8 523px,#aaaaaa 523px,#aaaaaa 552px,#ababab 581px,#ababab 610px,#acacac 639px,#acacac 668px,#adadad 697px,#979797 697px,#949494 726px,#909090 755px,#8d8d8d 784px,#888888 813px,#868686 826px,#828282 841px,#7e7e7e 853px,#7a7a7a 863px,#767676 871px)"></i><i style="top:136px;height:4px;background:linear-gradient(90deg,#838383 0px,#898989 29px,#8f8f8f 58px,#959595 87px,#9b9b9b 116px,#a2a2a2 145px,#a8a8a8 175px,#adadad 175px,#afafaf 204px,#b1b1b1 233px,#b2b2b2 262px,#b4b4b4 291px,#b6b6b6 320px,#b7b7b7 350px,#b3b3b3 350px,#b4b4b4 379px,#b5b5b5 408px,#b6b6b6 437px,#b7b7b7 466px,#b8b8b8 495px,#b9b9b9 523px,#ababab 523px,#acacac 552px,#acacac 581px,#adadad 610px,#adadad 639px,#aeaeae 668px,#aeaeae 697px,#999999 697px,#959595 726px,#929292 755px,#8e8e8e 784px,#898989 813px,#878787 826px,#838383 841px,#7f7f7f 853px,#7b7b7b 863px,#767676 871px)"></i><i style="top:140px;height:4px;background:linear-gradient(90deg,#848484 0px,#8a8a8a 29px,#919191 58px,#979797 87px,#9d9d9d 116px,#a3a3a3 145px,#a9a9a9 175px,#afafaf 175px,#b0b0b0 204px,#b2b2b2 233px,#b4b4b4 262px,#b5b5b5 291px,#b7b7b7 320px,#b9b9b9 350px,#b4b4b4 350px,#b5b5b5 379px,#b6b6b6 408px,#b7b7b7 437px,#b9b9b9 466px,#bababa 495px,#bbbbbb 523px,#adadad 523px,#adadad 552px,#adadad 581px,#aeaeae 610px,#aeaeae 639px,#afafaf 668px,#afafaf 697px,#9a9a9a 697px,#979797 726px,#939393 755px,#8f8f8f 784px,#8a8a8a 813px,#888888 826px,#848484 841px,#808080 853px,#7b7b7b 863px,#777777 871px)"></i><i style="top:144px;height:2px;background:linear-gradient(90deg,#868686 0px,#8c8c8c 29px,#929292 58px,#989898 87px,#9e9e9e 116px,#a4a4a4 145px,#aaaaaa 175px,#b0b0b0 175px,#b1b1b1 204px,#b3b3b3 233px,#b5b5b5 262px,#b6b6b6 291px,#b8b8b8 320px,#bababa 350px,#b6b6b6 350px,#b7b7b7 379px,#b8b8b8 408px,#b9b9b9 437px,#bababa 466px,#bbbbbb 495px,#bcbcbc 523px,#aeaeae 523px,#aeaeae 552px,#aeaeae 581px,#afafaf 610px,#afafaf 639px,#afafaf 668px,#b0b0b0 697px,#9c9c9c 697px,#989898 726px,#949494 755px,#909090 784px,#8b8b8b 813px,#888888 826px,#848484 841px,#808080 853px,#7c7c7c 863px,#787878 871px)"></i><i style="top:146px;height:4px;background:linear-gradient(90deg,#878787 0px,#898989 4px,#8c8c8c 9px,#8f8f8f 15px,#929292 22px,#969696 31px,#9a9a9a 42px,#9f9f9f 56px,#a5a5a5 74px,#adadad 98px,#b6b6b6 128px,#c3c3c3 175px,#9a9a9a 175px,#a1a1a1 179px,#a7a7a7 184px,#aeaeae 190px,#b3b3b3 197px,#b8b8b8 206px,#bcbcbc 217px,#c0c0c0 231px,#c3c3c3 249px,#c6c6c6 273px,#c8c8c8 303px,#cbcbcb 350px,#9b9b9b 350px,#a2a2a2 354px,#aaaaaa 359px,#b1b1b1 365px,#b7b7b7 372px,#bcbcbc 381px,#c1c1c1 392px,#c5c5c5 406px,#c9c9c9 424px,#cccccc 448px,#cfcfcf 478px,#d2d2d2 523px,#919191 523px,#989898 527px,#a0a0a0 532px,#a6a6a6 538px,#acacac 545px,#b2b2b2 554px,#b7b7b7 565px,#bbbbbb 579px,#bebebe 597px,#c1c1c1 621px,#c3c3c3 651px,#c6c6c6 697px,#999999 697px,#9b9b9b 701px,#9d9d9d 706px,#9f9f9f 712px,#a1a1a1 719px,#a3a3a3 728px,#a5a5a5 739px,#a6a6a6 753px,#a7a7a7 771px,#a6a6a6 795px,#a3a3a3 825px,#a3a3a3 826px,#a0a0a0 841px,#9c9c9c 853px,#979797 863px,#939393 871px)"></i><i style="top:150px;height:4px;background:linear-gradient(90deg,#898989 0px,#8b8b8b 4px,#8e8e8e 9px,#909090 15px,#939393 22px,#979797 31px,#9b9b9b 42px,#a0a0a0 56px,#a6a6a6 74px,#aeaeae 98px,#b6b6b6 128px,#c4c4c4 175px,#a0a0a0 175px,#a7a7a7 179px,#adadad 184px,#b3b3b3 190px,#b9b9b9 197px,#bdbdbd 206px,#c1c1c1 217px,#c5c5c5 231px,#c8c8c8 249px,#cacaca 273px,#cdcdcd 303px,#cfcfcf 350px,#a2a2a2 350px,#a9a9a9 354px,#b0b0b0 359px,#b7b7b7 365px,#bcbcbc 372px,#c2c2c2 381px,#c6c6c6 392px,#cacaca 406px,#cdcdcd 424px,#d1d1d1 448px,#d3d3d3 478px,#d7d7d7 523px,#989898 523px,#9f9f9f 527px,#a6a6a6 532px,#acacac 538px,#b2b2b2 545px,#b7b7b7 554px,#bcbcbc 565px,#bfbfbf 579px,#c2c2c2 597px,#c5c5c5 621px,#c8c8c8 651px,#cacaca 697px,#9c9c9c 697px,#9e9e9e 701px,#a0a0a0 706px,#a1a1a1 712px,#a3a3a3 719px,#a5a5a5 728px,#a6a6a6 739px,#a7a7a7 753px,#a8a8a8 771px,#a7a7a7 795px,#a3a3a3 825px,#a3a3a3 826px,#a0a0a0 841px,#9c9c9c 853px,#979797 863px,#929292 871px)"></i><i style="top:154px;height:4px;background:linear-gradient(90deg,#8b8b8b 0px,#8d8d8d 4px,#8f8f8f 9px,#929292 15px,#959595 22px,#989898 31px,#9c9c9c 42px,#a1a1a1 56px,#a7a7a7 74px,#aeaeae 98px,#b7b7b7 128px,#c5c5c5 175px,#a6a6a6 175px,#acacac 179px,#b2b2b2 184px,#b8b8b8 190px,#bdbdbd 197px,#c2c2c2 206px,#c5c5c5 217px,#c9c9c9 231px,#cbcbcb 249px,#cecece 273px,#d0d0d0 303px,#d3d3d3 350px,#a8a8a8 350px,#afafaf 354px,#b5b5b5 359px,#bcbcbc 365px,#c1c1c1 372px,#c6c6c6 381px,#cacaca 392px,#cecece 406px,#d1d1d1 424px,#d4d4d4 448px,#d7d7d7 478px,#dadada 523px,#9e9e9e 523px,#a5a5a5 527px,#ababab 532px,#b2b2b2 538px,#b7b7b7 545px,#bcbcbc 554px,#c0c0c0 565px,#c3c3c3 579px,#c6c6c6 597px,#c9c9c9 621px,#cbcbcb 651px,#cecece 697px,#9f9f9f 697px,#a0a0a0 701px,#a2a2a2 706px,#a3a3a3 712px,#a5a5a5 719px,#a6a6a6 728px,#a7a7a7 739px,#a8a8a8 753px,#a8a8a8 771px,#a7a7a7 795px,#a3a3a3 825px,#a3a3a3 826px,#a0a0a0 841px,#9c9c9c 853px,#979797 863px,#929292 871px)"></i><i style="top:158px;height:4px;background:linear-gradient(90deg,#8d8d8d 0px,#8e8e8e 4px,#919191 9px,#939393 15px,#969696 22px,#999999 31px,#9d9d9d 42px,#a2a2a2 56px,#a8a8a8 74px,#afafaf 98px,#b8b8b8 128px,#c5c5c5 175px,#aaaaaa 175px,#b0b0b0 179px,#b7b7b7 184px,#bcbcbc 190px,#c1c1c1 197px,#c5c5c5 206px,#c9c9c9 217px,#cccccc 231px,#cecece 249px,#d1d1d1 273px,#d3d3d3 303px,#d6d6d6 350px,#adadad 350px,#b3b3b3 354px,#bababa 359px,#c0c0c0 365px,#c5c5c5 372px,#cacaca 381px,#cecece 392px,#d2d2d2 406px,#d5d5d5 424px,#d7d7d7 448px,#dadada 478px,#dddddd 523px,#a3a3a3 523px,#a9a9a9 527px,#b0b0b0 532px,#b6b6b6 538px,#bbbbbb 545px,#c0c0c0 554px,#c3c3c3 565px,#c7c7c7 579px,#c9c9c9 597px,#cccccc 621px,#cecece 651px,#d0d0d0 697px,#a2a2a2 697px,#a3a3a3 701px,#a4a4a4 706px,#a5a5a5 712px,#a7a7a7 719px,#a8a8a8 728px,#a8a8a8 739px,#a9a9a9 753px,#a9a9a9 771px,#a7a7a7 795px,#a3a3a3 825px,#a3a3a3 826px,#a0a0a0 841px,#9b9b9b 853px,#979797 863px,#929292 871px)"></i><i style="top:162px;height:4px;background:linear-gradient(90deg,#8e8e8e 0px,#909090 4px,#929292 9px,#949494 15px,#979797 22px,#9a9a9a 31px,#9e9e9e 42px,#a3a3a3 56px,#a9a9a9 74px,#b0b0b0 98px,#b9b9b9 128px,#c6c6c6 175px,#aeaeae 175px,#b4b4b4 179px,#bababa 184px,#c0c0c0 190px,#c4c4c4 197px,#c8c8c8 206px,#cccccc 217px,#cfcfcf 231px,#d1d1d1 249px,#d3d3d3 273px,#d5d5d5 303px,#d8d8d8 350px,#b1b1b1 350px,#b8b8b8 354px,#bebebe 359px,#c4c4c4 365px,#c9c9c9 372px,#cdcdcd 381px,#d1d1d1 392px,#d4d4d4 406px,#d7d7d7 424px,#dadada 448px,#dddddd 478px,#e0e0e0 523px,#a7a7a7 523px,#adadad 527px,#b4b4b4 532px,#b9b9b9 538px,#bebebe 545px,#c3c3c3 554px,#c6c6c6 565px,#c9c9c9 579px,#cccccc 597px,#cecece 621px,#d0d0d0 651px,#d3d3d3 697px,#a4a4a4 697px,#a5a5a5 701px,#a6a6a6 706px,#a7a7a7 712px,#a8a8a8 719px,#a9a9a9 728px,#a9a9a9 739px,#aaaaaa 753px,#a9a9a9 771px,#a7a7a7 795px,#a3a3a3 825px,#a3a3a3 826px,#9f9f9f 841px,#9b9b9b 853px,#979797 863px,#929292 871px)"></i><i style="top:166px;height:4px;background:linear-gradient(90deg,#909090 0px,#919191 4px,#939393 9px,#969696 15px,#989898 22px,#9b9b9b 31px,#9f9f9f 42px,#a4a4a4 56px,#a9a9a9 74px,#b1b1b1 98px,#b9b9b9 128px,#c7c7c7 175px,#b2b2b2 175px,#b8b8b8 179px,#bdbdbd 184px,#c3c3c3 190px,#c7c7c7 197px,#cbcbcb 206px,#cecece 217px,#d1d1d1 231px,#d3d3d3 249px,#d6d6d6 273px,#d8d8d8 303px,#dadada 350px,#b5b5b5 350px,#bbbbbb 354px,#c1c1c1 359px,#c7c7c7 365px,#cccccc 372px,#d0d0d0 381px,#d4d4d4 392px,#d7d7d7 406px,#dadada 424px,#dcdcdc 448px,#dfdfdf 478px,#e2e2e2 523px,#ababab 523px,#b1b1b1 527px,#b7b7b7 532px,#bdbdbd 538px,#c1c1c1 545px,#c6c6c6 554px,#c9c9c9 565px,#cccccc 579px,#cecece 597px,#d0d0d0 621px,#d2d2d2 651px,#d5d5d5 697px,#a6a6a6 697px,#a7a7a7 701px,#a8a8a8 706px,#a9a9a9 712px,#a9a9a9 719px,#aaaaaa 728px,#aaaaaa 739px,#aaaaaa 753px,#aaaaaa 771px,#a8a8a8 795px,#a3a3a3 825px,#a3a3a3 826px,#9f9f9f 841px,#9b9b9b 853px,#979797 863px,#929292 871px)"></i><i style="top:170px;height:4px;background:linear-gradient(90deg,#919191 0px,#929292 4px,#949494 9px,#979797 15px,#999999 22px,#9c9c9c 31px,#a0a0a0 42px,#a5a5a5 56px,#aaaaaa 74px,#b1b1b1 98px,#bababa 128px,#c8c8c8 175px,#b5b5b5 175px,#bababa 179px,#c0c0c0 184px,#c5c5c5 190px,#cacaca 197px,#cecece 206px,#d1d1d1 217px,#d3d3d3 231px,#d5d5d5 249px,#d8d8d8 273px,#dadada 303px,#dcdcdc 350px,#b8b8b8 350px,#bebebe 354px,#c4c4c4 359px,#cacaca 365px,#cecece 372px,#d3d3d3 381px,#d6d6d6 392px,#d9d9d9 406px,#dcdcdc 424px,#dedede 448px,#e1e1e1 478px,#e4e4e4 523px,#aeaeae 523px,#b4b4b4 527px,#bababa 532px,#bfbfbf 538px,#c4c4c4 545px,#c8c8c8 554px,#cbcbcb 565px,#cecece 579px,#d0d0d0 597px,#d2d2d2 621px,#d4d4d4 651px,#d7d7d7 697px,#a8a8a8 697px,#a9a9a9 701px,#a9a9a9 706px,#aaaaaa 712px,#aaaaaa 719px,#ababab 728px,#ababab 739px,#ababab 753px,#aaaaaa 771px,#a8a8a8 795px,#a3a3a3 825px,#a3a3a3 826px,#9f9f9f 841px,#9b9b9b 853px,#969696 863px,#929292 871px)"></i><i style="top:174px;height:4px;background:linear-gradient(90deg,#929292 0px,#949494 4px,#969696 9px,#989898 15px,#9a9a9a 22px,#9d9d9d 31px,#a1a1a1 42px,#a5a5a5 56px,#ababab 74px,#b2b2b2 98px,#bbbbbb 128px,#c8c8c8 175px,#b7b7b7 175px,#bdbdbd 179px,#c3c3c3 184px,#c8c8c8 190px,#cccccc 197px,#d0d0d0 206px,#d3d3d3 217px,#d5d5d5 231px,#d7d7d7 249px,#d9d9d9 273px,#dbdbdb 303px,#dedede 350px,#bbbbbb 350px,#c1c1c1 354px,#c7c7c7 359px,#cccccc 365px,#d1d1d1 372px,#d5d5d5 381px,#d8d8d8 392px,#dbdbdb 406px,#dedede 424px,#e0e0e0 448px,#e3e3e3 478px,#e6e6e6 523px,#b1b1b1 523px,#b7b7b7 527px,#bdbdbd 532px,#c2c2c2 538px,#c6c6c6 545px,#cacaca 554px,#cdcdcd 565px,#d0d0d0 579px,#d2d2d2 597px,#d4d4d4 621px,#d6d6d6 651px,#d8d8d8 697px,#aaaaaa 697px,#aaaaaa 701px,#ababab 706px,#ababab 712px,#acacac 719px,#acacac 728px,#acacac 739px,#ababab 753px,#aaaaaa 771px,#a8a8a8 795px,#a3a3a3 825px,#a3a3a3 826px,#9f9f9f 841px,#9b9b9b 853px,#969696 863px,#919191 871px)"></i><i style="top:178px;height:4px;background:linear-gradient(90deg,#939393 0px,#959595 4px,#979797 9px,#999999 15px,#9b9b9b 22px,#9e9e9e 31px,#a2a2a2 42px,#a6a6a6 56px,#acacac 74px,#b3b3b3 98px,#bcbcbc 128px,#c9c9c9 175px,#bababa 175px,#bfbfbf 179px,#c5c5c5 184px,#cacaca 190px,#cecece 197px,#d2d2d2 206px,#d5d5d5 217px,#d7d7d7 231px,#d9d9d9 249px,#dbdbdb 273px,#dddddd 303px,#e0e0e0 350px,#bebebe 350px,#c3c3c3 354px,#c9c9c9 359px,#cfcfcf 365px,#d3d3d3 372px,#d7d7d7 381px,#dadada 392px,#dddddd 406px,#dfdfdf 424px,#e2e2e2 448px,#e4e4e4 478px,#e8e8e8 523px,#b4b4b4 523px,#b9b9b9 527px,#bfbfbf 532px,#c4c4c4 538px,#c8c8c8 545px,#cccccc 554px,#cfcfcf 565px,#d2d2d2 579px,#d4d4d4 597px,#d6d6d6 621px,#d8d8d8 651px,#dadada 697px,#ababab 697px,#acacac 701px,#acacac 706px,#acacac 712px,#acacac 719px,#adadad 728px,#acacac 739px,#acacac 753px,#ababab 771px,#a8a8a8 795px,#a3a3a3 825px,#a3a3a3 826px,#9f9f9f 841px,#9b9b9b 853px,#969696 863px,#919191 871px)"></i><i style="top:182px;height:4px;background:linear-gradient(90deg,#949494 0px,#969696 4px,#989898 9px,#9a9a9a 15px,#9c9c9c 22px,#9f9f9f 31px,#a3a3a3 42px,#a7a7a7 56px,#acacac 74px,#b4b4b4 98px,#bcbcbc 128px,#cacaca 175px,#bcbcbc 175px,#c1c1c1 179px,#c7c7c7 184px,#cccccc 190px,#d0d0d0 197px,#d3d3d3 206px,#d6d6d6 217px,#d9d9d9 231px,#dbdbdb 249px,#dcdcdc 273px,#dedede 303px,#e1e1e1 350px,#c0c0c0 350px,#c6c6c6 354px,#cbcbcb 359px,#d1d1d1 365px,#d5d5d5 372px,#d9d9d9 381px,#dcdcdc 392px,#dfdfdf 406px,#e1e1e1 424px,#e3e3e3 448px,#e6e6e6 478px,#e9e9e9 523px,#b6b6b6 523px,#bcbcbc 527px,#c1c1c1 532px,#c6c6c6 538px,#cacaca 545px,#cecece 554px,#d1d1d1 565px,#d3d3d3 579px,#d5d5d5 597px,#d7d7d7 621px,#d9d9d9 651px,#dbdbdb 697px,#adadad 697px,#adadad 701px,#adadad 706px,#adadad 712px,#adadad 719px,#adadad 728px,#adadad 739px,#acacac 753px,#ababab 771px,#a8a8a8 795px,#a3a3a3 825px,#a3a3a3 826px,#9f9f9f 841px,#9b9b9b 853px,#969696 863px,#919191 871px)"></i><i style="top:186px;height:4px;background:linear-gradient(90deg,#959595 0px,#979797 4px,#999999 9px,#9b9b9b 15px,#9d9d9d 22px,#a0a0a0 31px,#a3a3a3 42px,#a8a8a8 56px,#adadad 74px,#b4b4b4 98px,#bdbdbd 128px,#cbcbcb 175px,#bebebe 175px,#c3c3c3 179px,#c9c9c9 184px,#cecece 190px,#d2d2d2 197px,#d5d5d5 206px,#d8d8d8 217px,#dadada 231px,#dcdcdc 249px,#dedede 273px,#e0e0e0 303px,#e3e3e3 350px,#c2c2c2 350px,#c8c8c8 354px,#cdcdcd 359px,#d2d2d2 365px,#d7d7d7 372px,#dbdbdb 381px,#dedede 392px,#e0e0e0 406px,#e3e3e3 424px,#e5e5e5 448px,#e8e8e8 478px,#ebebeb 523px,#b8b8b8 523px,#bebebe 527px,#c3c3c3 532px,#c8c8c8 538px,#cccccc 545px,#d0d0d0 554px,#d3d3d3 565px,#d5d5d5 579px,#d7d7d7 597px,#d8d8d8 621px,#dadada 651px,#dddddd 697px,#aeaeae 697px,#aeaeae 701px,#aeaeae 706px,#aeaeae 712px,#aeaeae 719px,#aeaeae 728px,#aeaeae 739px,#adadad 753px,#ababab 771px,#a8a8a8 795px,#a3a3a3 825px,#a3a3a3 826px,#9f9f9f 841px,#9b9b9b 853px,#969696 863px,#919191 871px)"></i><i style="top:190px;height:4px;background:linear-gradient(90deg,#969696 0px,#989898 4px,#999999 9px,#9b9b9b 15px,#9e9e9e 22px,#a1a1a1 31px,#a4a4a4 42px,#a8a8a8 56px,#aeaeae 74px,#b5b5b5 98px,#bebebe 128px,#cbcbcb 175px,#c0c0c0 175px,#c5c5c5 179px,#cbcbcb 184px,#cfcfcf 190px,#d3d3d3 197px,#d7d7d7 206px,#d9d9d9 217px,#dcdcdc 231px,#dddddd 249px,#dfdfdf 273px,#e1e1e1 303px,#e4e4e4 350px,#c4c4c4 350px,#cacaca 354px,#cfcfcf 359px,#d4d4d4 365px,#d8d8d8 372px,#dcdcdc 381px,#dfdfdf 392px,#e2e2e2 406px,#e4e4e4 424px,#e6e6e6 448px,#e9e9e9 478px,#ededed 523px,#bababa 523px,#c0c0c0 527px,#c5c5c5 532px,#cacaca 538px,#cecece 545px,#d1d1d1 554px,#d4d4d4 565px,#d6d6d6 579px,#d8d8d8 597px,#dadada 621px,#dcdcdc 651px,#dedede 697px,#afafaf 697px,#afafaf 701px,#afafaf 706px,#afafaf 712px,#afafaf 719px,#afafaf 728px,#aeaeae 739px,#adadad 753px,#ababab 771px,#a9a9a9 795px,#a3a3a3 825px,#a3a3a3 826px,#9f9f9f 841px,#9b9b9b 853px,#969696 863px,#919191 871px)"></i><i style="top:194px;height:4px;background:linear-gradient(90deg,#979797 0px,#999999 4px,#9a9a9a 9px,#9c9c9c 15px,#9f9f9f 22px,#a1a1a1 31px,#a5a5a5 42px,#a9a9a9 56px,#afafaf 74px,#b6b6b6 98px,#bfbfbf 128px,#cccccc 175px,#c2c2c2 175px,#c7c7c7 179px,#cccccc 184px,#d1d1d1 190px,#d5d5d5 197px,#d8d8d8 206px,#dbdbdb 217px,#dddddd 231px,#dfdfdf 249px,#e1e1e1 273px,#e2e2e2 303px,#e5e5e5 350px,#c6c6c6 350px,#cccccc 354px,#d1d1d1 359px,#d6d6d6 365px,#dadada 372px,#dedede 381px,#e1e1e1 392px,#e3e3e3 406px,#e5e5e5 424px,#e8e8e8 448px,#eaeaea 478px,#eeeeee 523px,#bcbcbc 523px,#c1c1c1 527px,#c7c7c7 532px,#cccccc 538px,#cfcfcf 545px,#d3d3d3 554px,#d5d5d5 565px,#d8d8d8 579px,#d9d9d9 597px,#dbdbdb 621px,#dddddd 651px,#dfdfdf 697px,#b0b0b0 697px,#b0b0b0 701px,#b0b0b0 706px,#b0b0b0 712px,#b0b0b0 719px,#afafaf 728px,#afafaf 739px,#adadad 753px,#acacac 771px,#a9a9a9 795px,#a3a3a3 825px,#a3a3a3 826px,#9f9f9f 841px,#9b9b9b 853px,#969696 863px,#919191 871px)"></i><i style="top:198px;height:4px;background:linear-gradient(90deg,#989898 0px,#9a9a9a 4px,#9b9b9b 9px,#9d9d9d 15px,#9f9f9f 22px,#a2a2a2 31px,#a6a6a6 42px,#aaaaaa 56px,#afafaf 74px,#b6b6b6 98px,#bfbfbf 128px,#cdcdcd 175px,#c3c3c3 175px,#c9c9c9 179px,#cecece 184px,#d2d2d2 190px,#d6d6d6 197px,#dadada 206px,#dcdcdc 217px,#dedede 231px,#e0e0e0 249px,#e2e2e2 273px,#e4e4e4 303px,#e7e7e7 350px,#c8c8c8 350px,#cdcdcd 354px,#d3d3d3 359px,#d7d7d7 365px,#dcdcdc 372px,#dfdfdf 381px,#e2e2e2 392px,#e5e5e5 406px,#e7e7e7 424px,#e9e9e9 448px,#ececec 478px,#efefef 523px,#bebebe 523px,#c3c3c3 527px,#c8c8c8 532px,#cdcdcd 538px,#d1d1d1 545px,#d4d4d4 554px,#d7d7d7 565px,#d9d9d9 579px,#dbdbdb 597px,#dcdcdc 621px,#dedede 651px,#e0e0e0 697px,#b1b1b1 697px,#b1b1b1 701px,#b1b1b1 706px,#b1b1b1 712px,#b0b0b0 719px,#b0b0b0 728px,#afafaf 739px,#aeaeae 753px,#acacac 771px,#a9a9a9 795px,#a3a3a3 825px,#a3a3a3 826px,#9f9f9f 841px,#9a9a9a 853px,#959595 863px,#909090 871px)"></i><i style="top:202px;height:4px;background:linear-gradient(90deg,#999999 0px,#9a9a9a 4px,#9c9c9c 9px,#9e9e9e 15px,#a0a0a0 22px,#a3a3a3 31px,#a6a6a6 42px,#ababab 56px,#b0b0b0 74px,#b7b7b7 98px,#c0c0c0 128px,#cecece 175px,#c5c5c5 175px,#cacaca 179px,#cfcfcf 184px,#d4d4d4 190px,#d8d8d8 197px,#dbdbdb 206px,#dedede 217px,#e0e0e0 231px,#e1e1e1 249px,#e3e3e3 273px,#e5e5e5 303px,#e8e8e8 350px,#c9c9c9 350px,#cfcfcf 354px,#d4d4d4 359px,#d9d9d9 365px,#dddddd 372px,#e1e1e1 381px,#e3e3e3 392px,#e6e6e6 406px,#e8e8e8 424px,#eaeaea 448px,#ededed 478px,#f1f1f1 523px,#bfbfbf 523px,#c5c5c5 527px,#cacaca 532px,#cfcfcf 538px,#d2d2d2 545px,#d6d6d6 554px,#d8d8d8 565px,#dadada 579px,#dcdcdc 597px,#dddddd 621px,#dfdfdf 651px,#e2e2e2 697px,#b2b2b2 697px,#b2b2b2 701px,#b2b2b2 706px,#b1b1b1 712px,#b1b1b1 719px,#b0b0b0 728px,#afafaf 739px,#aeaeae 753px,#acacac 771px,#a9a9a9 795px,#a3a3a3 825px,#a3a3a3 826px,#9f9f9f 841px,#9a9a9a 853px,#959595 863px,#909090 871px)"></i><i style="top:206px;height:4px;background:linear-gradient(90deg,#9a9a9a 0px,#9b9b9b 4px,#9d9d9d 9px,#9f9f9f 15px,#a1a1a1 22px,#a4a4a4 31px,#a7a7a7 42px,#ababab 56px,#b1b1b1 74px,#b8b8b8 98px,#c1c1c1 128px,#cecece 175px,#c6c6c6 175px,#cccccc 179px,#d1d1d1 184px,#d5d5d5 190px,#d9d9d9 197px,#dcdcdc 206px,#dfdfdf 217px,#e1e1e1 231px,#e3e3e3 249px,#e4e4e4 273px,#e6e6e6 303px,#e9e9e9 350px,#cbcbcb 350px,#d0d0d0 354px,#d6d6d6 359px,#dadada 365px,#dedede 372px,#e2e2e2 381px,#e5e5e5 392px,#e7e7e7 406px,#e9e9e9 424px,#ececec 448px,#eeeeee 478px,#f2f2f2 523px,#c1c1c1 523px,#c6c6c6 527px,#cbcbcb 532px,#d0d0d0 538px,#d4d4d4 545px,#d7d7d7 554px,#d9d9d9 565px,#dbdbdb 579px,#dddddd 597px,#dfdfdf 621px,#e0e0e0 651px,#e3e3e3 697px,#b3b3b3 697px,#b3b3b3 701px,#b2b2b2 706px,#b2b2b2 712px,#b1b1b1 719px,#b1b1b1 728px,#b0b0b0 739px,#aeaeae 753px,#acacac 771px,#a9a9a9 795px,#a3a3a3 825px,#a3a3a3 826px,#9f9f9f 841px,#9a9a9a 853px,#959595 863px,#909090 871px)"></i><i style="top:210px;height:4px;background:linear-gradient(90deg,#9b9b9b 0px,#9c9c9c 4px,#9e9e9e 9px,#9f9f9f 15px,#a2a2a2 22px,#a4a4a4 31px,#a8a8a8 42px,#acacac 56px,#b1b1b1 74px,#b9b9b9 98px,#c1c1c1 128px,#cfcfcf 175px,#c8c8c8 175px,#cdcdcd 179px,#d2d2d2 184px,#d7d7d7 190px,#dadada 197px,#dedede 206px,#e0e0e0 217px,#e2e2e2 231px,#e4e4e4 249px,#e6e6e6 273px,#e7e7e7 303px,#eaeaea 350px,#cccccc 350px,#d2d2d2 354px,#d7d7d7 359px,#dcdcdc 365px,#e0e0e0 372px,#e3e3e3 381px,#e6e6e6 392px,#e8e8e8 406px,#ebebeb 424px,#ededed 448px,#f0f0f0 478px,#f4f4f4 523px,#c2c2c2 523px,#c8c8c8 527px,#cdcdcd 532px,#d1d1d1 538px,#d5d5d5 545px,#d8d8d8 554px,#dbdbdb 565px,#dddddd 579px,#dedede 597px,#e0e0e0 621px,#e1e1e1 651px,#e4e4e4 697px,#b4b4b4 697px,#b3b3b3 701px,#b3b3b3 706px,#b3b3b3 712px,#b2b2b2 719px,#b1b1b1 728px,#b0b0b0 739px,#afafaf 753px,#adadad 771px,#a9a9a9 795px,#a3a3a3 825px,#a3a3a3 826px,#9f9f9f 841px,#9a9a9a 853px,#959595 863px,#909090 871px)"></i><i style="top:214px;height:4px;background:linear-gradient(90deg,#9b9b9b 0px,#9d9d9d 4px,#9e9e9e 9px,#a0a0a0 15px,#a2a2a2 22px,#a5a5a5 31px,#a8a8a8 42px,#adadad 56px,#b2b2b2 74px,#b9b9b9 98px,#c2c2c2 128px,#d0d0d0 175px,#c9c9c9 175px,#cecece 179px,#d4d4d4 184px,#d8d8d8 190px,#dcdcdc 197px,#dfdfdf 206px,#e1e1e1 217px,#e3e3e3 231px,#e5e5e5 249px,#e7e7e7 273px,#e9e9e9 303px,#ebebeb 350px,#cecece 350px,#d3d3d3 354px,#d8d8d8 359px,#dddddd 365px,#e1e1e1 372px,#e4e4e4 381px,#e7e7e7 392px,#eaeaea 406px,#ececec 424px,#eeeeee 448px,#f1f1f1 478px,#f5f5f5 523px,#c4c4c4 523px,#c9c9c9 527px,#cecece 532px,#d3d3d3 538px,#d6d6d6 545px,#d9d9d9 554px,#dcdcdc 565px,#dedede 579px,#dfdfdf 597px,#e1e1e1 621px,#e3e3e3 651px,#e5e5e5 697px,#b4b4b4 697px,#b4b4b4 701px,#b4b4b4 706px,#b3b3b3 712px,#b3b3b3 719px,#b2b2b2 728px,#b1b1b1 739px,#afafaf 753px,#adadad 771px,#a9a9a9 795px,#a3a3a3 825px,#a3a3a3 826px,#9f9f9f 841px,#9a9a9a 853px,#959595 863px,#909090 871px)"></i><i style="top:218px;height:4px;background:linear-gradient(90deg,#9c9c9c 0px,#9d9d9d 4px,#9f9f9f 9px,#a1a1a1 15px,#a3a3a3 22px,#a6a6a6 31px,#a9a9a9 42px,#adadad 56px,#b3b3b3 74px,#bababa 98px,#c3c3c3 128px,#d1d1d1 175px,#cbcbcb 175px,#d0d0d0 179px,#d5d5d5 184px,#d9d9d9 190px,#dddddd 197px,#e0e0e0 206px,#e3e3e3 217px,#e4e4e4 231px,#e6e6e6 249px,#e8e8e8 273px,#eaeaea 303px,#ededed 350px,#cfcfcf 350px,#d4d4d4 354px,#dadada 359px,#dedede 365px,#e2e2e2 372px,#e6e6e6 381px,#e9e9e9 392px,#ebebeb 406px,#ededed 424px,#efefef 448px,#f2f2f2 478px,#f6f6f6 523px,#c5c5c5 523px,#cacaca 527px,#cfcfcf 532px,#d4d4d4 538px,#d8d8d8 545px,#dbdbdb 554px,#dddddd 565px,#dfdfdf 579px,#e0e0e0 597px,#e2e2e2 621px,#e4e4e4 651px,#e6e6e6 697px,#b5b5b5 697px,#b5b5b5 701px,#b4b4b4 706px,#b4b4b4 712px,#b3b3b3 719px,#b2b2b2 728px,#b1b1b1 739px,#afafaf 753px,#adadad 771px,#a9a9a9 795px,#a3a3a3 825px,#a3a3a3 826px,#9f9f9f 841px,#9a9a9a 853px,#959595 863px,#8f8f8f 871px)"></i><i style="top:222px;height:4px;background:linear-gradient(90deg,#9d9d9d 0px,#9e9e9e 4px,#a0a0a0 9px,#a2a2a2 15px,#a4a4a4 22px,#a6a6a6 31px,#aaaaaa 42px,#aeaeae 56px,#b3b3b3 74px,#bbbbbb 98px,#c4c4c4 128px,#d1d1d1 175px,#cccccc 175px,#d1d1d1 179px,#d6d6d6 184px,#dbdbdb 190px,#dedede 197px,#e1e1e1 206px,#e4e4e4 217px,#e6e6e6 231px,#e7e7e7 249px,#e9e9e9 273px,#ebebeb 303px,#eeeeee 350px,#d0d0d0 350px,#d6d6d6 354px,#dbdbdb 359px,#e0e0e0 365px,#e4e4e4 372px,#e7e7e7 381px,#eaeaea 392px,#ececec 406px,#eeeeee 424px,#f1f1f1 448px,#f4f4f4 478px,#f8f8f8 523px,#c6c6c6 523px,#cccccc 527px,#d1d1d1 532px,#d5d5d5 538px,#d9d9d9 545px,#dcdcdc 554px,#dedede 565px,#e0e0e0 579px,#e2e2e2 597px,#e3e3e3 621px,#e5e5e5 651px,#e7e7e7 697px,#b6b6b6 697px,#b5b5b5 701px,#b5b5b5 706px,#b4b4b4 712px,#b3b3b3 719px,#b3b3b3 728px,#b1b1b1 739px,#b0b0b0 753px,#adadad 771px,#a9a9a9 795px,#a3a3a3 825px,#a3a3a3 826px,#9e9e9e 841px,#9a9a9a 853px,#949494 863px,#8f8f8f 871px)"></i><i style="top:226px;height:4px;background:linear-gradient(90deg,#9e9e9e 0px,#9f9f9f 4px,#a0a0a0 9px,#a2a2a2 15px,#a4a4a4 22px,#a7a7a7 31px,#ababab 42px,#afafaf 56px,#b4b4b4 74px,#bbbbbb 98px,#c4c4c4 128px,#d2d2d2 175px,#cdcdcd 175px,#d2d2d2 179px,#d7d7d7 184px,#dcdcdc 190px,#dfdfdf 197px,#e3e3e3 206px,#e5e5e5 217px,#e7e7e7 231px,#e9e9e9 249px,#eaeaea 273px,#ececec 303px,#efefef 350px,#d2d2d2 350px,#d7d7d7 354px,#dcdcdc 359px,#e1e1e1 365px,#e5e5e5 372px,#e8e8e8 381px,#ebebeb 392px,#ededed 406px,#f0f0f0 424px,#f2f2f2 448px,#f5f5f5 478px,#f9f9f9 523px,#c8c8c8 523px,#cdcdcd 527px,#d2d2d2 532px,#d6d6d6 538px,#dadada 545px,#dddddd 554px,#dfdfdf 565px,#e1e1e1 579px,#e3e3e3 597px,#e4e4e4 621px,#e6e6e6 651px,#e8e8e8 697px,#b6b6b6 697px,#b6b6b6 701px,#b5b5b5 706px,#b5b5b5 712px,#b4b4b4 719px,#b3b3b3 728px,#b2b2b2 739px,#b0b0b0 753px,#adadad 771px,#a9a9a9 795px,#a3a3a3 825px,#a3a3a3 826px,#9e9e9e 841px,#9a9a9a 853px,#949494 863px,#8f8f8f 871px)"></i><i style="top:230px;height:4px;background:linear-gradient(90deg,#9e9e9e 0px,#a0a0a0 4px,#a1a1a1 9px,#a3a3a3 15px,#a5a5a5 22px,#a8a8a8 31px,#ababab 42px,#afafaf 56px,#b5b5b5 74px,#bcbcbc 98px,#c5c5c5 128px,#d3d3d3 175px,#cecece 175px,#d4d4d4 179px,#d9d9d9 184px,#dddddd 190px,#e1e1e1 197px,#e4e4e4 206px,#e6e6e6 217px,#e8e8e8 231px,#eaeaea 249px,#ebebeb 273px,#ededed 303px,#f0f0f0 350px,#d3d3d3 350px,#d8d8d8 354px,#dedede 359px,#e2e2e2 365px,#e6e6e6 372px,#e9e9e9 381px,#ececec 392px,#eeeeee 406px,#f1f1f1 424px,#f3f3f3 448px,#f6f6f6 478px,#fafafa 523px,#c9c9c9 523px,#cecece 527px,#d3d3d3 532px,#d8d8d8 538px,#dbdbdb 545px,#dedede 554px,#e0e0e0 565px,#e2e2e2 579px,#e4e4e4 597px,#e5e5e5 621px,#e7e7e7 651px,#eaeaea 697px,#b7b7b7 697px,#b6b6b6 701px,#b6b6b6 706px,#b5b5b5 712px,#b4b4b4 719px,#b3b3b3 728px,#b2b2b2 739px,#b0b0b0 753px,#adadad 771px,#aaaaaa 795px,#a3a3a3 825px,#a3a3a3 826px,#9e9e9e 841px,#999999 853px,#949494 863px,#8f8f8f 871px)"></i><i style="top:234px;height:4px;background:linear-gradient(90deg,#9f9f9f 0px,#a0a0a0 4px,#a2a2a2 9px,#a4a4a4 15px,#a6a6a6 22px,#a9a9a9 31px,#acacac 42px,#b0b0b0 56px,#b5b5b5 74px,#bdbdbd 98px,#c6c6c6 128px,#d4d4d4 175px,#d0d0d0 175px,#d5d5d5 179px,#dadada 184px,#dedede 190px,#e2e2e2 197px,#e5e5e5 206px,#e7e7e7 217px,#e9e9e9 231px,#ebebeb 249px,#ededed 273px,#efefef 303px,#f1f1f1 350px,#d4d4d4 350px,#dadada 354px,#dfdfdf 359px,#e3e3e3 365px,#e7e7e7 372px,#ebebeb 381px,#ededed 392px,#f0f0f0 406px,#f2f2f2 424px,#f4f4f4 448px,#f7f7f7 478px,#fcfcfc 523px,#cacaca 523px,#cfcfcf 527px,#d4d4d4 532px,#d9d9d9 538px,#dcdcdc 545px,#dfdfdf 554px,#e2e2e2 565px,#e3e3e3 579px,#e5e5e5 597px,#e6e6e6 621px,#e8e8e8 651px,#ebebeb 697px,#b7b7b7 697px,#b7b7b7 701px,#b6b6b6 706px,#b6b6b6 712px,#b5b5b5 719px,#b4b4b4 728px,#b2b2b2 739px,#b0b0b0 753px,#aeaeae 771px,#aaaaaa 795px,#a3a3a3 825px,#a3a3a3 826px,#9e9e9e 841px,#999999 853px,#949494 863px,#8f8f8f 871px)"></i><i style="top:238px;height:4px;background:linear-gradient(90deg,#a0a0a0 0px,#a1a1a1 4px,#a2a2a2 9px,#a4a4a4 15px,#a6a6a6 22px,#a9a9a9 31px,#adadad 42px,#b1b1b1 56px,#b6b6b6 74px,#bdbdbd 98px,#c6c6c6 128px,#d4d4d4 175px,#d1d1d1 175px,#d6d6d6 179px,#dbdbdb 184px,#dfdfdf 190px,#e3e3e3 197px,#e6e6e6 206px,#e8e8e8 217px,#eaeaea 231px,#ececec 249px,#eeeeee 273px,#f0f0f0 303px,#f3f3f3 350px,#d5d5d5 350px,#dbdbdb 354px,#e0e0e0 359px,#e5e5e5 365px,#e8e8e8 372px,#ececec 381px,#eeeeee 392px,#f1f1f1 406px,#f3f3f3 424px,#f6f6f6 448px,#f9f9f9 478px,#fdfdfd 523px,#cbcbcb 523px,#d1d1d1 527px,#d6d6d6 532px,#dadada 538px,#dddddd 545px,#e0e0e0 554px,#e3e3e3 565px,#e5e5e5 579px,#e6e6e6 597px,#e8e8e8 621px,#e9e9e9 651px,#ececec 697px,#b8b8b8 697px,#b7b7b7 701px,#b7b7b7 706px,#b6b6b6 712px,#b5b5b5 719px,#b4b4b4 728px,#b2b2b2 739px,#b1b1b1 753px,#aeaeae 771px,#aaaaaa 795px,#a3a3a3 825px,#a3a3a3 826px,#9e9e9e 841px,#999999 853px,#949494 863px,#8e8e8e 871px)"></i><i style="top:242px;height:4px;background:linear-gradient(90deg,#a0a0a0 0px,#a2a2a2 4px,#a3a3a3 9px,#a5a5a5 15px,#a7a7a7 22px,#aaaaaa 31px,#adadad 42px,#b1b1b1 56px,#b7b7b7 74px,#bebebe 98px,#c7c7c7 128px,#d5d5d5 175px,#d2d2d2 175px,#d7d7d7 179px,#dcdcdc 184px,#e1e1e1 190px,#e4e4e4 197px,#e7e7e7 206px,#eaeaea 217px,#ececec 231px,#ededed 249px,#efefef 273px,#f1f1f1 303px,#f4f4f4 350px,#d7d7d7 350px,#dcdcdc 354px,#e1e1e1 359px,#e6e6e6 365px,#eaeaea 372px,#ededed 381px,#f0f0f0 392px,#f2f2f2 406px,#f4f4f4 424px,#f7f7f7 448px,#fafafa 478px,#fefefe 523px,#cdcdcd 523px,#d2d2d2 527px,#d7d7d7 532px,#dbdbdb 538px,#dfdfdf 545px,#e2e2e2 554px,#e4e4e4 565px,#e6e6e6 579px,#e7e7e7 597px,#e9e9e9 621px,#eaeaea 651px,#ededed 697px,#b8b8b8 697px,#b8b8b8 701px,#b7b7b7 706px,#b6b6b6 712px,#b6b6b6 719px,#b4b4b4 728px,#b3b3b3 739px,#b1b1b1 753px,#aeaeae 771px,#aaaaaa 795px,#a3a3a3 825px,#a3a3a3 826px,#9e9e9e 841px,#999999 853px,#949494 863px,#8e8e8e 871px)"></i><i style="top:246px;height:4px;background:linear-gradient(90deg,#a1a1a1 0px,#a2a2a2 4px,#a4a4a4 9px,#a6a6a6 15px,#a8a8a8 22px,#aaaaaa 31px,#aeaeae 42px,#b2b2b2 56px,#b8b8b8 74px,#bfbfbf 98px,#c8c8c8 128px,#d6d6d6 175px,#d3d3d3 175px,#d8d8d8 179px,#dddddd 184px,#e2e2e2 190px,#e5e5e5 197px,#e8e8e8 206px,#ebebeb 217px,#ededed 231px,#eeeeee 249px,#f0f0f0 273px,#f2f2f2 303px,#f5f5f5 350px,#d8d8d8 350px,#dddddd 354px,#e2e2e2 359px,#e7e7e7 365px,#ebebeb 372px,#eeeeee 381px,#f1f1f1 392px,#f3f3f3 406px,#f5f5f5 424px,#f8f8f8 448px,#fbfbfb 478px,#ffffff 523px,#cecece 523px,#d3d3d3 527px,#d8d8d8 532px,#dcdcdc 538px,#e0e0e0 545px,#e3e3e3 554px,#e5e5e5 565px,#e7e7e7 579px,#e8e8e8 597px,#eaeaea 621px,#ebebeb 651px,#eeeeee 697px,#b9b9b9 697px,#b8b8b8 701px,#b8b8b8 706px,#b7b7b7 712px,#b6b6b6 719px,#b5b5b5 728px,#b3b3b3 739px,#b1b1b1 753px,#aeaeae 771px,#aaaaaa 795px,#a3a3a3 825px,#a3a3a3 826px,#9e9e9e 841px,#999999 853px,#939393 863px,#8e8e8e 871px)"></i><i style="top:250px;height:4px;background:linear-gradient(90deg,#a2a2a2 0px,#a3a3a3 4px,#a4a4a4 9px,#a6a6a6 15px,#a8a8a8 22px,#ababab 31px,#aeaeae 42px,#b3b3b3 56px,#b8b8b8 74px,#bfbfbf 98px,#c8c8c8 128px,#d7d7d7 175px,#d4d4d4 175px,#dadada 179px,#dfdfdf 184px,#e3e3e3 190px,#e7e7e7 197px,#eaeaea 206px,#ececec 217px,#eeeeee 231px,#efefef 249px,#f1f1f1 273px,#f3f3f3 303px,#f6f6f6 350px,#d9d9d9 350px,#dedede 354px,#e3e3e3 359px,#e8e8e8 365px,#ececec 372px,#efefef 381px,#f2f2f2 392px,#f4f4f4 406px,#f7f7f7 424px,#f9f9f9 448px,#fcfcfc 478px,#ffffff 523px,#cfcfcf 523px,#d4d4d4 527px,#d9d9d9 532px,#dddddd 538px,#e1e1e1 545px,#e4e4e4 554px,#e6e6e6 565px,#e8e8e8 579px,#e9e9e9 597px,#ebebeb 621px,#ececec 651px,#efefef 697px,#b9b9b9 697px,#b9b9b9 701px,#b8b8b8 706px,#b7b7b7 712px,#b6b6b6 719px,#b5b5b5 728px,#b3b3b3 739px,#b1b1b1 753px,#aeaeae 771px,#aaaaaa 795px,#a3a3a3 825px,#a3a3a3 826px,#9e9e9e 841px,#999999 853px,#939393 863px,#8e8e8e 871px)"></i><i style="top:254px;height:4px;background:linear-gradient(90deg,#a2a2a2 0px,#ababab 29px,#b4b4b4 58px,#bdbdbd 87px,#c6c6c6 116px,#cecece 145px,#d7d7d7 175px,#d6d6d6 175px,#dbdbdb 179px,#e0e0e0 184px,#e4e4e4 190px,#e8e8e8 197px,#ebebeb 206px,#ededed 217px,#efefef 231px,#f1f1f1 249px,#f2f2f2 273px,#f4f4f4 303px,#f7f7f7 350px,#dadada 350px,#dfdfdf 354px,#e4e4e4 359px,#e9e9e9 365px,#ededed 372px,#f0f0f0 381px,#f3f3f3 392px,#f5f5f5 406px,#f8f8f8 424px,#fafafa 448px,#fefefe 478px,#ffffff 523px,#d0d0d0 523px,#d5d5d5 527px,#dadada 532px,#dedede 538px,#e2e2e2 545px,#e5e5e5 554px,#e7e7e7 565px,#e9e9e9 579px,#eaeaea 597px,#ececec 621px,#eeeeee 651px,#f0f0f0 697px,#bababa 697px,#b6b6b6 726px,#b1b1b1 755px,#acacac 784px,#a6a6a6 813px,#a3a3a3 826px,#9e9e9e 841px,#999999 853px,#939393 863px,#8e8e8e 871px)"></i><i style="top:258px;height:4px;background:linear-gradient(90deg,#a3a3a3 0px,#acacac 29px,#b5b5b5 58px,#bdbdbd 87px,#c6c6c6 116px,#cfcfcf 145px,#d8d8d8 175px,#d7d7d7 175px,#dcdcdc 179px,#e1e1e1 184px,#e5e5e5 190px,#e9e9e9 197px,#ececec 206px,#eeeeee 217px,#f0f0f0 231px,#f2f2f2 249px,#f3f3f3 273px,#f5f5f5 303px,#f9f9f9 350px,#dbdbdb 350px,#e0e0e0 354px,#e6e6e6 359px,#eaeaea 365px,#eeeeee 372px,#f1f1f1 381px,#f4f4f4 392px,#f7f7f7 406px,#f9f9f9 424px,#fcfcfc 448px,#ffffff 478px,#ffffff 523px,#d1d1d1 523px,#d6d6d6 527px,#dbdbdb 532px,#dfdfdf 538px,#e3e3e3 545px,#e6e6e6 554px,#e8e8e8 565px,#eaeaea 579px,#ebebeb 597px,#ededed 621px,#efefef 651px,#f1f1f1 697px,#bababa 697px,#b6b6b6 726px,#b1b1b1 755px,#acacac 784px,#a6a6a6 813px,#a3a3a3 826px,#9e9e9e 841px,#989898 853px,#939393 863px,#8e8e8e 871px)"></i><i style="top:262px;height:4px;background:linear-gradient(90deg,#a4a4a4 0px,#acacac 29px,#b5b5b5 58px,#bebebe 87px,#c7c7c7 116px,#d0d0d0 145px,#d9d9d9 175px,#d8d8d8 175px,#dddddd 179px,#e2e2e2 184px,#e6e6e6 190px,#eaeaea 197px,#ededed 206px,#efefef 217px,#f1f1f1 231px,#f3f3f3 249px,#f5f5f5 273px,#f7f7f7 303px,#fafafa 350px,#dcdcdc 350px,#e2e2e2 354px,#e7e7e7 359px,#ebebeb 365px,#efefef 372px,#f3f3f3 381px,#f5f5f5 392px,#f8f8f8 406px,#fafafa 424px,#fdfdfd 448px,#ffffff 478px,#ffffff 523px,#d2d2d2 523px,#d7d7d7 527px,#dcdcdc 532px,#e1e1e1 538px,#e4e4e4 545px,#e7e7e7 554px,#e9e9e9 565px,#ebebeb 579px,#ededed 597px,#eeeeee 621px,#f0f0f0 651px,#f2f2f2 697px,#bbbbbb 697px,#b6b6b6 726px,#b1b1b1 755px,#acacac 784px,#a6a6a6 813px,#a3a3a3 826px,#9e9e9e 841px,#989898 853px,#939393 863px,#8d8d8d 871px)"></i><i style="top:266px;height:4px;background:linear-gradient(90deg,#a4a4a4 0px,#adadad 29px,#b6b6b6 58px,#bfbfbf 87px,#c8c8c8 116px,#d0d0d0 145px,#dadada 175px,#d9d9d9 175px,#dedede 179px,#e3e3e3 184px,#e8e8e8 190px,#ebebeb 197px,#eeeeee 206px,#f0f0f0 217px,#f2f2f2 231px,#f4f4f4 249px,#f6f6f6 273px,#f8f8f8 303px,#fbfbfb 350px,#dddddd 350px,#e3e3e3 354px,#e8e8e8 359px,#ececec 365px,#f0f0f0 372px,#f4f4f4 381px,#f6f6f6 392px,#f9f9f9 406px,#fbfbfb 424px,#fefefe 448px,#ffffff 478px,#ffffff 523px,#d3d3d3 523px,#d8d8d8 527px,#dddddd 532px,#e2e2e2 538px,#e5e5e5 545px,#e8e8e8 554px,#eaeaea 565px,#ececec 579px,#eeeeee 597px,#efefef 621px,#f1f1f1 651px,#f3f3f3 697px,#bbbbbb 697px,#b7b7b7 726px,#b2b2b2 755px,#acacac 784px,#a6a6a6 813px,#a3a3a3 826px,#9d9d9d 841px,#989898 853px,#939393 863px,#8d8d8d 871px)"></i><i style="top:270px;height:4px;background:linear-gradient(90deg,#a5a5a5 0px,#aeaeae 29px,#b7b7b7 58px,#bfbfbf 87px,#c8c8c8 116px,#d1d1d1 145px,#dadada 175px,#dadada 175px,#dfdfdf 179px,#e4e4e4 184px,#e9e9e9 190px,#ececec 197px,#efefef 206px,#f2f2f2 217px,#f3f3f3 231px,#f5f5f5 249px,#f7f7f7 273px,#f9f9f9 303px,#fcfcfc 350px,#dedede 350px,#e4e4e4 354px,#e9e9e9 359px,#eeeeee 365px,#f1f1f1 372px,#f5f5f5 381px,#f8f8f8 392px,#fafafa 406px,#fcfcfc 424px,#ffffff 448px,#ffffff 478px,#ffffff 523px,#d4d4d4 523px,#dadada 527px,#dedede 532px,#e3e3e3 538px,#e6e6e6 545px,#e9e9e9 554px,#ebebeb 565px,#ededed 579px,#efefef 597px,#f0f0f0 621px,#f2f2f2 651px,#f5f5f5 697px,#bcbcbc 697px,#b7b7b7 726px,#b2b2b2 755px,#acacac 784px,#a6a6a6 813px,#a2a2a2 826px,#9d9d9d 841px,#989898 853px,#939393 863px,#8d8d8d 871px)"></i><i style="top:274px;height:4px;background:linear-gradient(90deg,#a5a5a5 0px,#aeaeae 29px,#b7b7b7 58px,#c0c0c0 87px,#c9c9c9 116px,#d2d2d2 145px,#dbdbdb 175px,#dbdbdb 175px,#e1e1e1 179px,#e5e5e5 184px,#eaeaea 190px,#ededed 197px,#f0f0f0 206px,#f3f3f3 217px,#f5f5f5 231px,#f6f6f6 249px,#f8f8f8 273px,#fafafa 303px,#fdfdfd 350px,#e0e0e0 350px,#e5e5e5 354px,#eaeaea 359px,#efefef 365px,#f2f2f2 372px,#f6f6f6 381px,#f9f9f9 392px,#fbfbfb 406px,#fefefe 424px,#ffffff 448px,#ffffff 478px,#ffffff 523px,#d6d6d6 523px,#dbdbdb 527px,#e0e0e0 532px,#e4e4e4 538px,#e7e7e7 545px,#eaeaea 554px,#ececec 565px,#eeeeee 579px,#f0f0f0 597px,#f1f1f1 621px,#f3f3f3 651px,#f6f6f6 697px,#bcbcbc 697px,#b7b7b7 726px,#b2b2b2 755px,#adadad 784px,#a6a6a6 813px,#a2a2a2 826px,#9d9d9d 841px,#989898 853px,#929292 863px,#8d8d8d 871px)"></i><i style="top:278px;height:4px;background:linear-gradient(90deg,#a6a6a6 0px,#afafaf 29px,#b8b8b8 58px,#c1c1c1 87px,#cacaca 116px,#d3d3d3 145px,#dcdcdc 175px,#dcdcdc 175px,#e2e2e2 179px,#e7e7e7 184px,#ebebeb 190px,#eeeeee 197px,#f2f2f2 206px,#f4f4f4 217px,#f6f6f6 231px,#f7f7f7 249px,#f9f9f9 273px,#fbfbfb 303px,#fefefe 350px,#e1e1e1 350px,#e6e6e6 354px,#ebebeb 359px,#f0f0f0 365px,#f4f4f4 372px,#f7f7f7 381px,#fafafa 392px,#fcfcfc 406px,#ffffff 424px,#ffffff 448px,#ffffff 478px,#ffffff 523px,#d7d7d7 523px,#dcdcdc 527px,#e1e1e1 532px,#e5e5e5 538px,#e8e8e8 545px,#ebebeb 554px,#eeeeee 565px,#efefef 579px,#f1f1f1 597px,#f2f2f2 621px,#f4f4f4 651px,#f7f7f7 697px,#bdbdbd 697px,#b8b8b8 726px,#b2b2b2 755px,#adadad 784px,#a6a6a6 813px,#a2a2a2 826px,#9d9d9d 841px,#989898 853px,#929292 863px,#8d8d8d 871px)"></i><i style="top:282px;height:4px;background:linear-gradient(90deg,#a7a7a7 0px,#b0b0b0 29px,#b9b9b9 58px,#c1c1c1 87px,#cacaca 116px,#d3d3d3 145px,#dddddd 175px,#dedede 175px,#e3e3e3 179px,#e8e8e8 184px,#ececec 190px,#f0f0f0 197px,#f3f3f3 206px,#f5f5f5 217px,#f7f7f7 231px,#f9f9f9 249px,#fafafa 273px,#fcfcfc 303px,#ffffff 350px,#e2e2e2 350px,#e7e7e7 354px,#ececec 359px,#f1f1f1 365px,#f5f5f5 372px,#f8f8f8 381px,#fbfbfb 392px,#fdfdfd 406px,#ffffff 424px,#ffffff 448px,#ffffff 478px,#ffffff 523px,#d8d8d8 523px,#dddddd 527px,#e2e2e2 532px,#e6e6e6 538px,#e9e9e9 545px,#ececec 554px,#efefef 565px,#f0f0f0 579px,#f2f2f2 597px,#f3f3f3 621px,#f5f5f5 651px,#f8f8f8 697px,#bdbdbd 697px,#b8b8b8 726px,#b3b3b3 755px,#adadad 784px,#a6a6a6 813px,#a2a2a2 826px,#9d9d9d 841px,#989898 853px,#929292 863px,#8c8c8c 871px)"></i><i style="top:286px;height:4px;background:linear-gradient(90deg,#a7a7a7 0px,#b0b0b0 29px,#b9b9b9 58px,#c2c2c2 87px,#cbcbcb 116px,#d4d4d4 145px,#dddddd 175px,#dfdfdf 175px,#e4e4e4 179px,#e9e9e9 184px,#ededed 190px,#f1f1f1 197px,#f4f4f4 206px,#f6f6f6 217px,#f8f8f8 231px,#fafafa 249px,#fcfcfc 273px,#fefefe 303px,#ffffff 350px,#e3e3e3 350px,#e8e8e8 354px,#ededed 359px,#f2f2f2 365px,#f6f6f6 372px,#f9f9f9 381px,#fcfcfc 392px,#ffffff 406px,#ffffff 424px,#ffffff 448px,#ffffff 478px,#ffffff 523px,#d9d9d9 523px,#dedede 527px,#e3e3e3 532px,#e7e7e7 538px,#ebebeb 545px,#ededed 554px,#f0f0f0 565px,#f1f1f1 579px,#f3f3f3 597px,#f4f4f4 621px,#f6f6f6 651px,#f9f9f9 697px,#bdbdbd 697px,#b8b8b8 726px,#b3b3b3 755px,#adadad 784px,#a6a6a6 813px,#a2a2a2 826px,#9d9d9d 841px,#989898 853px,#929292 863px,#8c8c8c 871px)"></i><i style="top:290px;height:2px;background:linear-gradient(90deg,#a8a8a8 0px,#b1b1b1 29px,#bababa 58px,#c3c3c3 87px,#cccccc 116px,#d5d5d5 145px,#dedede 175px,#e0e0e0 175px,#e5e5e5 179px,#eaeaea 184px,#eeeeee 190px,#f2f2f2 197px,#f5f5f5 206px,#f7f7f7 217px,#f9f9f9 231px,#fbfbfb 249px,#fcfcfc 273px,#fefefe 303px,#ffffff 350px,#e4e4e4 350px,#e9e9e9 354px,#eeeeee 359px,#f3f3f3 365px,#f7f7f7 372px,#fafafa 381px,#fdfdfd 392px,#ffffff 406px,#ffffff 424px,#ffffff 448px,#ffffff 478px,#ffffff 523px,#dadada 523px,#dfdfdf 527px,#e4e4e4 532px,#e8e8e8 538px,#ebebeb 545px,#eeeeee 554px,#f0f0f0 565px,#f2f2f2 579px,#f4f4f4 597px,#f5f5f5 621px,#f7f7f7 651px,#fafafa 697px,#bebebe 697px,#b8b8b8 726px,#b3b3b3 755px,#adadad 784px,#a6a6a6 813px,#a2a2a2 826px,#9d9d9d 841px,#979797 853px,#929292 863px,#8c8c8c 871px)"></i><i style="top:292px;height:4px;background:linear-gradient(90deg,#a9a9a9 0px,#ababab 4px,#aeaeae 9px,#b1b1b1 15px,#b4b4b4 22px,#b7b7b7 31px,#bbbbbb 42px,#c0c0c0 56px,#c6c6c6 74px,#cdcdcd 98px,#d5d5d5 128px,#e2e2e2 175px,#b4b4b4 175px,#c0c0c0 179px,#cccccc 184px,#d8d8d8 190px,#e4e4e4 197px,#f0f0f0 206px,#fafafa 217px,#ffffff 231px,#ffffff 249px,#ffffff 273px,#ffffff 303px,#ffffff 350px,#b0b0b0 350px,#bcbcbc 354px,#c9c9c9 359px,#d6d6d6 365px,#e2e2e2 372px,#eeeeee 381px,#f9f9f9 392px,#ffffff 406px,#ffffff 424px,#ffffff 448px,#ffffff 478px,#ffffff 523px,#bebebe 523px,#c8c8c8 527px,#d3d3d3 532px,#dedede 538px,#e9e9e9 545px,#f3f3f3 554px,#fdfdfd 565px,#ffffff 579px,#ffffff 597px,#ffffff 621px,#ffffff 651px,#ffffff 697px,#b5b5b5 697px,#b9b9b9 701px,#bcbcbc 706px,#c0c0c0 712px,#c3c3c3 719px,#c6c6c6 728px,#c8c8c8 739px,#c8c8c8 753px,#c8c8c8 771px,#c5c5c5 795px,#bebebe 825px,#bebebe 826px,#b8b8b8 841px,#b3b3b3 853px,#adadad 863px,#a6a6a6 871px)"></i><i style="top:296px;height:4px;background:linear-gradient(90deg,#aaaaaa 0px,#acacac 4px,#afafaf 9px,#b2b2b2 15px,#b5b5b5 22px,#b8b8b8 31px,#bcbcbc 42px,#c1c1c1 56px,#c7c7c7 74px,#cecece 98px,#d7d7d7 128px,#e4e4e4 175px,#bebebe 175px,#c8c8c8 179px,#d3d3d3 184px,#dedede 190px,#e9e9e9 197px,#f4f4f4 206px,#fdfdfd 217px,#ffffff 231px,#ffffff 249px,#ffffff 273px,#ffffff 303px,#ffffff 350px,#bababa 350px,#c5c5c5 354px,#d0d0d0 359px,#dcdcdc 365px,#e7e7e7 372px,#f2f2f2 381px,#fcfcfc 392px,#ffffff 406px,#ffffff 424px,#ffffff 448px,#ffffff 478px,#ffffff 523px,#c6c6c6 523px,#d0d0d0 527px,#dadada 532px,#e4e4e4 538px,#ededed 545px,#f7f7f7 554px,#ffffff 565px,#ffffff 579px,#ffffff 597px,#ffffff 621px,#ffffff 651px,#ffffff 697px,#b9b9b9 697px,#bcbcbc 701px,#bfbfbf 706px,#c2c2c2 712px,#c5c5c5 719px,#c7c7c7 728px,#c9c9c9 739px,#c9c9c9 753px,#c8c8c8 771px,#c5c5c5 795px,#bfbfbf 825px,#bebebe 826px,#b9b9b9 841px,#b3b3b3 853px,#adadad 863px,#a7a7a7 871px)"></i><i style="top:300px;height:4px;background:linear-gradient(90deg,#ababab 0px,#adadad 4px,#b0b0b0 9px,#b3b3b3 15px,#b6b6b6 22px,#b9b9b9 31px,#bdbdbd 42px,#c2c2c2 56px,#c8c8c8 74px,#cfcfcf 98px,#d8d8d8 128px,#e6e6e6 175px,#c7c7c7 175px,#d0d0d0 179px,#dadada 184px,#e4e4e4 190px,#ededed 197px,#f7f7f7 206px,#ffffff 217px,#ffffff 231px,#ffffff 249px,#ffffff 273px,#ffffff 303px,#ffffff 350px,#c3c3c3 350px,#cdcdcd 354px,#d7d7d7 359px,#e2e2e2 365px,#ececec 372px,#f6f6f6 381px,#fefefe 392px,#ffffff 406px,#ffffff 424px,#ffffff 448px,#ffffff 478px,#ffffff 523px,#cecece 523px,#d7d7d7 527px,#e0e0e0 532px,#e9e9e9 538px,#f1f1f1 545px,#fafafa 554px,#ffffff 565px,#ffffff 579px,#ffffff 597px,#ffffff 621px,#ffffff 651px,#ffffff 697px,#bdbdbd 697px,#bfbfbf 701px,#c2c2c2 706px,#c5c5c5 712px,#c7c7c7 719px,#c9c9c9 728px,#cacaca 739px,#cacaca 753px,#c9c9c9 771px,#c6c6c6 795px,#bfbfbf 825px,#bfbfbf 826px,#bababa 841px,#b4b4b4 853px,#aeaeae 863px,#a8a8a8 871px)"></i><i style="top:304px;height:4px;background:linear-gradient(90deg,#acacac 0px,#aeaeae 4px,#b1b1b1 9px,#b3b3b3 15px,#b6b6b6 22px,#bababa 31px,#bebebe 42px,#c3c3c3 56px,#c9c9c9 74px,#d1d1d1 98px,#dadada 128px,#e8e8e8 175px,#cfcfcf 175px,#d7d7d7 179px,#e0e0e0 184px,#e9e9e9 190px,#f1f1f1 197px,#fafafa 206px,#ffffff 217px,#ffffff 231px,#ffffff 249px,#ffffff 273px,#ffffff 303px,#ffffff 350px,#cbcbcb 350px,#d4d4d4 354px,#dddddd 359px,#e7e7e7 365px,#f0f0f0 372px,#f9f9f9 381px,#ffffff 392px,#ffffff 406px,#ffffff 424px,#ffffff 448px,#ffffff 478px,#ffffff 523px,#d5d5d5 523px,#dddddd 527px,#e5e5e5 532px,#ededed 538px,#f5f5f5 545px,#fcfcfc 554px,#ffffff 565px,#ffffff 579px,#ffffff 597px,#ffffff 621px,#ffffff 651px,#ffffff 697px,#c0c0c0 697px,#c2c2c2 701px,#c5c5c5 706px,#c7c7c7 712px,#c9c9c9 719px,#cacaca 728px,#cbcbcb 739px,#cbcbcb 753px,#cacaca 771px,#c7c7c7 795px,#c0c0c0 825px,#c0c0c0 826px,#bababa 841px,#b5b5b5 853px,#afafaf 863px,#a8a8a8 871px)"></i><i style="top:308px;height:4px;background:linear-gradient(90deg,#adadad 0px,#afafaf 4px,#b2b2b2 9px,#b4b4b4 15px,#b7b7b7 22px,#bbbbbb 31px,#bfbfbf 42px,#c4c4c4 56px,#cacaca 74px,#d2d2d2 98px,#dbdbdb 128px,#eaeaea 175px,#d6d6d6 175px,#dddddd 179px,#e5e5e5 184px,#ededed 190px,#f5f5f5 197px,#fdfdfd 206px,#ffffff 217px,#ffffff 231px,#ffffff 249px,#ffffff 273px,#ffffff 303px,#ffffff 350px,#d3d3d3 350px,#dadada 354px,#e3e3e3 359px,#ebebeb 365px,#f3f3f3 372px,#fbfbfb 381px,#ffffff 392px,#ffffff 406px,#ffffff 424px,#ffffff 448px,#ffffff 478px,#ffffff 523px,#dcdcdc 523px,#e2e2e2 527px,#eaeaea 532px,#f1f1f1 538px,#f8f8f8 545px,#ffffff 554px,#ffffff 565px,#ffffff 579px,#ffffff 597px,#ffffff 621px,#ffffff 651px,#ffffff 697px,#c3c3c3 697px,#c5c5c5 701px,#c7c7c7 706px,#c9c9c9 712px,#cacaca 719px,#cccccc 728px,#cccccc 739px,#cccccc 753px,#cbcbcb 771px,#c7c7c7 795px,#c1c1c1 825px,#c0c0c0 826px,#bbbbbb 841px,#b5b5b5 853px,#afafaf 863px,#a9a9a9 871px)"></i><i style="top:312px;height:4px;background:linear-gradient(90deg,#aeaeae 0px,#b0b0b0 4px,#b2b2b2 9px,#b5b5b5 15px,#b8b8b8 22px,#bcbcbc 31px,#c0c0c0 42px,#c5c5c5 56px,#cbcbcb 74px,#d3d3d3 98px,#dddddd 128px,#ececec 175px,#dcdcdc 175px,#e3e3e3 179px,#eaeaea 184px,#f1f1f1 190px,#f8f8f8 197px,#ffffff 206px,#ffffff 217px,#ffffff 231px,#ffffff 249px,#ffffff 273px,#ffffff 303px,#ffffff 350px,#d9d9d9 350px,#e0e0e0 354px,#e8e8e8 359px,#efefef 365px,#f7f7f7 372px,#fefefe 381px,#ffffff 392px,#ffffff 406px,#ffffff 424px,#ffffff 448px,#ffffff 478px,#ffffff 523px,#e1e1e1 523px,#e7e7e7 527px,#eeeeee 532px,#f4f4f4 538px,#fbfbfb 545px,#ffffff 554px,#ffffff 565px,#ffffff 579px,#ffffff 597px,#ffffff 621px,#ffffff 651px,#ffffff 697px,#c5c5c5 697px,#c7c7c7 701px,#c9c9c9 706px,#cbcbcb 712px,#cccccc 719px,#cdcdcd 728px,#cdcdcd 739px,#cdcdcd 753px,#cbcbcb 771px,#c8c8c8 795px,#c1c1c1 825px,#c1c1c1 826px,#bcbcbc 841px,#b6b6b6 853px,#b0b0b0 863px,#aaaaaa 871px)"></i><i style="top:316px;height:4px;background:linear-gradient(90deg,#afafaf 0px,#b1b1b1 4px,#b3b3b3 9px,#b6b6b6 15px,#b9b9b9 22px,#bcbcbc 31px,#c1c1c1 42px,#c6c6c6 56px,#cccccc 74px,#d4d4d4 98px,#dfdfdf 128px,#eeeeee 175px,#e2e2e2 175px,#e8e8e8 179px,#eeeeee 184px,#f5f5f5 190px,#fbfbfb 197px,#ffffff 206px,#ffffff 217px,#ffffff 231px,#ffffff 249px,#ffffff 273px,#ffffff 303px,#ffffff 350px,#dfdfdf 350px,#e6e6e6 354px,#ececec 359px,#f3f3f3 365px,#fafafa 372px,#ffffff 381px,#ffffff 392px,#ffffff 406px,#ffffff 424px,#ffffff 448px,#ffffff 478px,#ffffff 523px,#e7e7e7 523px,#ececec 527px,#f2f2f2 532px,#f8f8f8 538px,#fdfdfd 545px,#ffffff 554px,#ffffff 565px,#ffffff 579px,#ffffff 597px,#ffffff 621px,#ffffff 651px,#ffffff 697px,#c8c8c8 697px,#c9c9c9 701px,#cbcbcb 706px,#cccccc 712px,#cdcdcd 719px,#cecece 728px,#cecece 739px,#cecece 753px,#cccccc 771px,#c9c9c9 795px,#c2c2c2 825px,#c2c2c2 826px,#bcbcbc 841px,#b7b7b7 853px,#b1b1b1 863px,#aaaaaa 871px)"></i><i style="top:320px;height:4px;background:linear-gradient(90deg,#b0b0b0 0px,#b2b2b2 4px,#b4b4b4 9px,#b7b7b7 15px,#bababa 22px,#bdbdbd 31px,#c2c2c2 42px,#c7c7c7 56px,#cdcdcd 74px,#d6d6d6 98px,#e0e0e0 128px,#f1f1f1 175px,#e7e7e7 175px,#ececec 179px,#f2f2f2 184px,#f8f8f8 190px,#fdfdfd 197px,#ffffff 206px,#ffffff 217px,#ffffff 231px,#ffffff 249px,#ffffff 273px,#ffffff 303px,#ffffff 350px,#e5e5e5 350px,#eaeaea 354px,#f0f0f0 359px,#f7f7f7 365px,#fcfcfc 372px,#ffffff 381px,#ffffff 392px,#ffffff 406px,#ffffff 424px,#ffffff 448px,#ffffff 478px,#ffffff 523px,#ebebeb 523px,#f0f0f0 527px,#f5f5f5 532px,#fbfbfb 538px,#ffffff 545px,#ffffff 554px,#ffffff 565px,#ffffff 579px,#ffffff 597px,#ffffff 621px,#ffffff 651px,#ffffff 697px,#cacaca 697px,#cbcbcb 701px,#cdcdcd 706px,#cecece 712px,#cfcfcf 719px,#cfcfcf 728px,#cfcfcf 739px,#cfcfcf 753px,#cdcdcd 771px,#c9c9c9 795px,#c2c2c2 825px,#c2c2c2 826px,#bdbdbd 841px,#b7b7b7 853px,#b1b1b1 863px,#ababab 871px)"></i><i style="top:324px;height:4px;background:linear-gradient(90deg,#b0b0b0 0px,#b2b2b2 4px,#b5b5b5 9px,#b7b7b7 15px,#bababa 22px,#bebebe 31px,#c2c2c2 42px,#c8c8c8 56px,#cecece 74px,#d7d7d7 98px,#e2e2e2 128px,#f3f3f3 175px,#ebebeb 175px,#f0f0f0 179px,#f5f5f5 184px,#fbfbfb 190px,#ffffff 197px,#ffffff 206px,#ffffff 217px,#ffffff 231px,#ffffff 249px,#ffffff 273px,#ffffff 303px,#ffffff 350px,#e9e9e9 350px,#efefef 354px,#f4f4f4 359px,#fafafa 365px,#ffffff 372px,#ffffff 381px,#ffffff 392px,#ffffff 406px,#ffffff 424px,#ffffff 448px,#ffffff 478px,#ffffff 523px,#efefef 523px,#f4f4f4 527px,#f8f8f8 532px,#fdfdfd 538px,#ffffff 545px,#ffffff 554px,#ffffff 565px,#ffffff 579px,#ffffff 597px,#ffffff 621px,#ffffff 651px,#ffffff 697px,#cccccc 697px,#cdcdcd 701px,#cecece 706px,#cfcfcf 712px,#d0d0d0 719px,#d0d0d0 728px,#d0d0d0 739px,#cfcfcf 753px,#cecece 771px,#cacaca 795px,#c3c3c3 825px,#c3c3c3 826px,#bebebe 841px,#b8b8b8 853px,#b2b2b2 863px,#acacac 871px)"></i><i style="top:328px;height:4px;background:linear-gradient(90deg,#b1b1b1 0px,#b3b3b3 4px,#b5b5b5 9px,#b8b8b8 15px,#bbbbbb 22px,#bfbfbf 31px,#c3c3c3 42px,#c9c9c9 56px,#cfcfcf 74px,#d8d8d8 98px,#e3e3e3 128px,#f5f5f5 175px,#f0f0f0 175px,#f4f4f4 179px,#f9f9f9 184px,#fdfdfd 190px,#ffffff 197px,#ffffff 206px,#ffffff 217px,#ffffff 231px,#ffffff 249px,#ffffff 273px,#ffffff 303px,#ffffff 350px,#eeeeee 350px,#f2f2f2 354px,#f7f7f7 359px,#fcfcfc 365px,#ffffff 372px,#ffffff 381px,#ffffff 392px,#ffffff 406px,#ffffff 424px,#ffffff 448px,#ffffff 478px,#ffffff 523px,#f3f3f3 523px,#f7f7f7 527px,#fbfbfb 532px,#ffffff 538px,#ffffff 545px,#ffffff 554px,#ffffff 565px,#ffffff 579px,#ffffff 597px,#ffffff 621px,#ffffff 651px,#ffffff 697px,#cecece 697px,#cfcfcf 701px,#d0d0d0 706px,#d1d1d1 712px,#d1d1d1 719px,#d1d1d1 728px,#d1d1d1 739px,#d0d0d0 753px,#cecece 771px,#cbcbcb 795px,#c4c4c4 825px,#c3c3c3 826px,#bebebe 841px,#b9b9b9 853px,#b2b2b2 863px,#acacac 871px)"></i><i style="top:332px;height:4px;background:linear-gradient(90deg,#b2b2b2 0px,#b4b4b4 4px,#b6b6b6 9px,#b9b9b9 15px,#bcbcbc 22px,#bfbfbf 31px,#c4c4c4 42px,#c9c9c9 56px,#d0d0d0 74px,#dadada 98px,#e5e5e5 128px,#f7f7f7 175px,#f3f3f3 175px,#f7f7f7 179px,#fbfbfb 184px,#ffffff 190px,#ffffff 197px,#ffffff 206px,#ffffff 217px,#ffffff 231px,#ffffff 249px,#ffffff 273px,#ffffff 303px,#ffffff 350px,#f2f2f2 350px,#f6f6f6 354px,#fafafa 359px,#ffffff 365px,#ffffff 372px,#ffffff 381px,#ffffff 392px,#ffffff 406px,#ffffff 424px,#ffffff 448px,#ffffff 478px,#ffffff 523px,#f6f6f6 523px,#fafafa 527px,#fefefe 532px,#ffffff 538px,#ffffff 545px,#ffffff 554px,#ffffff 565px,#ffffff 579px,#ffffff 597px,#ffffff 621px,#ffffff 651px,#ffffff 697px,#d0d0d0 697px,#d0d0d0 701px,#d1d1d1 706px,#d2d2d2 712px,#d2d2d2 719px,#d2d2d2 728px,#d2d2d2 739px,#d1d1d1 753px,#cfcfcf 771px,#cbcbcb 795px,#c4c4c4 825px,#c4c4c4 826px,#bfbfbf 841px,#b9b9b9 853px,#b3b3b3 863px,#adadad 871px)"></i><i style="top:336px;height:4px;background:linear-gradient(90deg,#b2b2b2 0px,#b4b4b4 4px,#b7b7b7 9px,#b9b9b9 15px,#bcbcbc 22px,#c0c0c0 31px,#c5c5c5 42px,#cacaca 56px,#d2d2d2 74px,#dbdbdb 98px,#e7e7e7 128px,#f9f9f9 175px,#f7f7f7 175px,#fafafa 179px,#fefefe 184px,#ffffff 190px,#ffffff 197px,#ffffff 206px,#ffffff 217px,#ffffff 231px,#ffffff 249px,#ffffff 273px,#ffffff 303px,#ffffff 350px,#f5f5f5 350px,#f9f9f9 354px,#fdfdfd 359px,#ffffff 365px,#ffffff 372px,#ffffff 381px,#ffffff 392px,#ffffff 406px,#ffffff 424px,#ffffff 448px,#ffffff 478px,#ffffff 523px,#f9f9f9 523px,#fdfdfd 527px,#ffffff 532px,#ffffff 538px,#ffffff 545px,#ffffff 554px,#ffffff 565px,#ffffff 579px,#ffffff 597px,#ffffff 621px,#ffffff 651px,#ffffff 697px,#d1d1d1 697px,#d2d2d2 701px,#d3d3d3 706px,#d3d3d3 712px,#d3d3d3 719px,#d3d3d3 728px,#d3d3d3 739px,#d2d2d2 753px,#cfcfcf 771px,#cccccc 795px,#c5c5c5 825px,#c5c5c5 826px,#bfbfbf 841px,#bababa 853px,#b4b4b4 863px,#aeaeae 871px)"></i><i style="top:340px;height:4px;background:linear-gradient(90deg,#b3b3b3 0px,#b5b5b5 4px,#b7b7b7 9px,#bababa 15px,#bdbdbd 22px,#c1c1c1 31px,#c5c5c5 42px,#cbcbcb 56px,#d3d3d3 74px,#dcdcdc 98px,#e8e8e8 128px,#fbfbfb 175px,#fafafa 175px,#fdfdfd 179px,#ffffff 184px,#ffffff 190px,#ffffff 197px,#ffffff 206px,#ffffff 217px,#ffffff 231px,#ffffff 249px,#ffffff 273px,#ffffff 303px,#ffffff 350px,#f9f9f9 350px,#fcfcfc 354px,#ffffff 359px,#ffffff 365px,#ffffff 372px,#ffffff 381px,#ffffff 392px,#ffffff 406px,#ffffff 424px,#ffffff 448px,#ffffff 478px,#ffffff 523px,#fcfcfc 523px,#ffffff 527px,#ffffff 532px,#ffffff 538px,#ffffff 545px,#ffffff 554px,#ffffff 565px,#ffffff 579px,#ffffff 597px,#ffffff 621px,#ffffff 651px,#ffffff 697px,#d3d3d3 697px,#d3d3d3 701px,#d4d4d4 706px,#d4d4d4 712px,#d4d4d4 719px,#d4d4d4 728px,#d3d3d3 739px,#d2d2d2 753px,#d0d0d0 771px,#cccccc 795px,#c6c6c6 825px,#c5c5c5 826px,#c0c0c0 841px,#bbbbbb 853px,#b4b4b4 863px,#aeaeae 871px)"></i><i style="top:344px;height:4px;background:linear-gradient(90deg,#b3b3b3 0px,#b5b5b5 4px,#b8b8b8 9px,#bababa 15px,#bebebe 22px,#c2c2c2 31px,#c6c6c6 42px,#cccccc 56px,#d4d4d4 74px,#dedede 98px,#eaeaea 128px,#fdfdfd 175px,#fdfdfd 175px,#ffffff 179px,#ffffff 184px,#ffffff 190px,#ffffff 197px,#ffffff 206px,#ffffff 217px,#ffffff 231px,#ffffff 249px,#ffffff 273px,#ffffff 303px,#ffffff 350px,#fbfbfb 350px,#fefefe 354px,#ffffff 359px,#ffffff 365px,#ffffff 372px,#ffffff 381px,#ffffff 392px,#ffffff 406px,#ffffff 424px,#ffffff 448px,#ffffff 478px,#ffffff 523px,#ffffff 523px,#ffffff 527px,#ffffff 532px,#ffffff 538px,#ffffff 545px,#ffffff 554px,#ffffff 565px,#ffffff 579px,#ffffff 597px,#ffffff 621px,#ffffff 651px,#ffffff 697px,#d4d4d4 697px,#d5d5d5 701px,#d5d5d5 706px,#d5d5d5 712px,#d5d5d5 719px,#d5d5d5 728px,#d4d4d4 739px,#d3d3d3 753px,#d1d1d1 771px,#cdcdcd 795px,#c6c6c6 825px,#c6c6c6 826px,#c1c1c1 841px,#bbbbbb 853px,#b5b5b5 863px,#afafaf 871px)"></i><i style="top:348px;height:4px;background:linear-gradient(90deg,#b4b4b4 0px,#b6b6b6 4px,#b8b8b8 9px,#bbbbbb 15px,#bebebe 22px,#c2c2c2 31px,#c7c7c7 42px,#cdcdcd 56px,#d5d5d5 74px,#dfdfdf 98px,#ebebeb 128px,#ffffff 175px,#ffffff 175px,#ffffff 179px,#ffffff 184px,#ffffff 190px,#ffffff 197px,#ffffff 206px,#ffffff 217px,#ffffff 231px,#ffffff 249px,#ffffff 273px,#ffffff 303px,#ffffff 350px,#fefefe 350px,#ffffff 354px,#ffffff 359px,#ffffff 365px,#ffffff 372px,#ffffff 381px,#ffffff 392px,#ffffff 406px,#ffffff 424px,#ffffff 448px,#ffffff 478px,#ffffff 523px,#ffffff 523px,#ffffff 527px,#ffffff 532px,#ffffff 538px,#ffffff 545px,#ffffff 554px,#ffffff 565px,#ffffff 579px,#ffffff 597px,#ffffff 621px,#ffffff 651px,#ffffff 697px,#d5d5d5 697px,#d6d6d6 701px,#d6d6d6 706px,#d6d6d6 712px,#d6d6d6 719px,#d6d6d6 728px,#d5d5d5 739px,#d4d4d4 753px,#d1d1d1 771px,#cecece 795px,#c7c7c7 825px,#c6c6c6 826px,#c1c1c1 841px,#bcbcbc 853px,#b6b6b6 863px,#b0b0b0 871px)"></i><i style="top:352px;height:4px;background:linear-gradient(90deg,#b4b4b4 0px,#b6b6b6 4px,#b9b9b9 9px,#bcbcbc 15px,#bfbfbf 22px,#c3c3c3 31px,#c8c8c8 42px,#cecece 56px,#d6d6d6 74px,#e0e0e0 98px,#ededed 128px,#ffffff 175px,#ffffff 175px,#ffffff 179px,#ffffff 184px,#ffffff 190px,#ffffff 197px,#ffffff 206px,#ffffff 217px,#ffffff 231px,#ffffff 249px,#ffffff 273px,#ffffff 303px,#ffffff 350px,#ffffff 350px,#ffffff 354px,#ffffff 359px,#ffffff 365px,#ffffff 372px,#ffffff 381px,#ffffff 392px,#ffffff 406px,#ffffff 424px,#ffffff 448px,#ffffff 478px,#ffffff 523px,#ffffff 523px,#ffffff 527px,#ffffff 532px,#ffffff 538px,#ffffff 545px,#ffffff 554px,#ffffff 565px,#ffffff 579px,#ffffff 597px,#ffffff 621px,#ffffff 651px,#ffffff 697px,#d7d7d7 697px,#d7d7d7 701px,#d7d7d7 706px,#d7d7d7 712px,#d7d7d7 719px,#d6d6d6 728px,#d6d6d6 739px,#d4d4d4 753px,#d2d2d2 771px,#cecece 795px,#c7c7c7 825px,#c7c7c7 826px,#c2c2c2 841px,#bcbcbc 853px,#b6b6b6 863px,#b0b0b0 871px)"></i><i style="top:356px;height:4px;background:linear-gradient(90deg,#b5b5b5 0px,#b7b7b7 4px,#b9b9b9 9px,#bcbcbc 15px,#bfbfbf 22px,#c4c4c4 31px,#c9c9c9 42px,#cfcfcf 56px,#d7d7d7 74px,#e1e1e1 98px,#efefef 128px,#ffffff 175px,#ffffff 175px,#ffffff 179px,#ffffff 184px,#ffffff 190px,#ffffff 197px,#ffffff 206px,#ffffff 217px,#ffffff 231px,#ffffff 249px,#ffffff 273px,#ffffff 303px,#ffffff 350px,#ffffff 350px,#ffffff 354px,#ffffff 359px,#ffffff 365px,#ffffff 372px,#ffffff 381px,#ffffff 392px,#ffffff 406px,#ffffff 424px,#ffffff 448px,#ffffff 478px,#ffffff 523px,#ffffff 523px,#ffffff 527px,#ffffff 532px,#ffffff 538px,#ffffff 545px,#ffffff 554px,#ffffff 565px,#ffffff 579px,#ffffff 597px,#ffffff 621px,#ffffff 651px,#ffffff 697px,#d8d8d8 697px,#d8d8d8 701px,#d8d8d8 706px,#d8d8d8 712px,#d8d8d8 719px,#d7d7d7 728px,#d6d6d6 739px,#d5d5d5 753px,#d3d3d3 771px,#cfcfcf 795px,#c8c8c8 825px,#c8c8c8 826px,#c3c3c3 841px,#bdbdbd 853px,#b7b7b7 863px,#b1b1b1 871px)"></i><i style="top:360px;height:4px;background:linear-gradient(90deg,#b5b5b5 0px,#b7b7b7 4px,#bababa 9px,#bdbdbd 15px,#c0c0c0 22px,#c4c4c4 31px,#c9c9c9 42px,#d0d0d0 56px,#d8d8d8 74px,#e3e3e3 98px,#f0f0f0 128px,#ffffff 175px,#ffffff 175px,#ffffff 179px,#ffffff 184px,#ffffff 190px,#ffffff 197px,#ffffff 206px,#ffffff 217px,#ffffff 231px,#ffffff 249px,#ffffff 273px,#ffffff 303px,#ffffff 350px,#ffffff 350px,#ffffff 354px,#ffffff 359px,#ffffff 365px,#ffffff 372px,#ffffff 381px,#ffffff 392px,#ffffff 406px,#ffffff 424px,#ffffff 448px,#ffffff 478px,#ffffff 523px,#ffffff 523px,#ffffff 527px,#ffffff 532px,#ffffff 538px,#ffffff 545px,#ffffff 554px,#ffffff 565px,#ffffff 579px,#ffffff 597px,#ffffff 621px,#ffffff 651px,#ffffff 697px,#d9d9d9 697px,#d9d9d9 701px,#d9d9d9 706px,#d9d9d9 712px,#d8d8d8 719px,#d8d8d8 728px,#d7d7d7 739px,#d5d5d5 753px,#d3d3d3 771px,#cfcfcf 795px,#c9c9c9 825px,#c8c8c8 826px,#c3c3c3 841px,#bebebe 853px,#b8b8b8 863px,#b2b2b2 871px)"></i><i style="top:364px;height:4px;background:linear-gradient(90deg,#b6b6b6 0px,#b8b8b8 4px,#bababa 9px,#bdbdbd 15px,#c1c1c1 22px,#c5c5c5 31px,#cacaca 42px,#d1d1d1 56px,#d9d9d9 74px,#e4e4e4 98px,#f2f2f2 128px,#ffffff 175px,#ffffff 175px,#ffffff 179px,#ffffff 184px,#ffffff 190px,#ffffff 197px,#ffffff 206px,#ffffff 217px,#ffffff 231px,#ffffff 249px,#ffffff 273px,#ffffff 303px,#ffffff 350px,#ffffff 350px,#ffffff 354px,#ffffff 359px,#ffffff 365px,#ffffff 372px,#ffffff 381px,#ffffff 392px,#ffffff 406px,#ffffff 424px,#ffffff 448px,#ffffff 478px,#ffffff 523px,#ffffff 523px,#ffffff 527px,#ffffff 532px,#ffffff 538px,#ffffff 545px,#ffffff 554px,#ffffff 565px,#ffffff 579px,#ffffff 597px,#ffffff 621px,#ffffff 651px,#ffffff 697px,#dadada 697px,#dadada 701px,#dadada 706px,#d9d9d9 712px,#d9d9d9 719px,#d8d8d8 728px,#d8d8d8 739px,#d6d6d6 753px,#d4d4d4 771px,#d0d0d0 795px,#c9c9c9 825px,#c9c9c9 826px,#c4c4c4 841px,#bebebe 853px,#b8b8b8 863px,#b2b2b2 871px)"></i><i style="top:368px;height:4px;background:linear-gradient(90deg,#b6b6b6 0px,#b8b8b8 4px,#bbbbbb 9px,#bebebe 15px,#c1c1c1 22px,#c5c5c5 31px,#cbcbcb 42px,#d1d1d1 56px,#dadada 74px,#e5e5e5 98px,#f3f3f3 128px,#ffffff 175px,#ffffff 175px,#ffffff 179px,#ffffff 184px,#ffffff 190px,#ffffff 197px,#ffffff 206px,#ffffff 217px,#ffffff 231px,#ffffff 249px,#ffffff 273px,#ffffff 303px,#ffffff 350px,#ffffff 350px,#ffffff 354px,#ffffff 359px,#ffffff 365px,#ffffff 372px,#ffffff 381px,#ffffff 392px,#ffffff 406px,#ffffff 424px,#ffffff 448px,#ffffff 478px,#ffffff 523px,#ffffff 523px,#ffffff 527px,#ffffff 532px,#ffffff 538px,#ffffff 545px,#ffffff 554px,#ffffff 565px,#ffffff 579px,#ffffff 597px,#ffffff 621px,#ffffff 651px,#ffffff 697px,#dbdbdb 697px,#dbdbdb 701px,#dadada 706px,#dadada 712px,#dadada 719px,#d9d9d9 728px,#d8d8d8 739px,#d7d7d7 753px,#d4d4d4 771px,#d0d0d0 795px,#cacaca 825px,#cacaca 826px,#c5c5c5 841px,#bfbfbf 853px,#b9b9b9 863px,#b3b3b3 871px)"></i><i style="top:372px;height:4px;background:linear-gradient(90deg,#b7b7b7 0px,#b9b9b9 4px,#bbbbbb 9px,#bebebe 15px,#c2c2c2 22px,#c6c6c6 31px,#cccccc 42px,#d2d2d2 56px,#dbdbdb 74px,#e7e7e7 98px,#f5f5f5 128px,#ffffff 175px,#ffffff 175px,#ffffff 179px,#ffffff 184px,#ffffff 190px,#ffffff 197px,#ffffff 206px,#ffffff 217px,#ffffff 231px,#ffffff 249px,#ffffff 273px,#ffffff 303px,#ffffff 350px,#ffffff 350px,#ffffff 354px,#ffffff 359px,#ffffff 365px,#ffffff 372px,#ffffff 381px,#ffffff 392px,#ffffff 406px,#ffffff 424px,#ffffff 448px,#ffffff 478px,#ffffff 523px,#ffffff 523px,#ffffff 527px,#ffffff 532px,#ffffff 538px,#ffffff 545px,#ffffff 554px,#ffffff 565px,#ffffff 579px,#ffffff 597px,#ffffff 621px,#ffffff 651px,#ffffff 697px,#dbdbdb 697px,#dbdbdb 701px,#dbdbdb 706px,#dbdbdb 712px,#dadada 719px,#dadada 728px,#d9d9d9 739px,#d7d7d7 753px,#d5d5d5 771px,#d1d1d1 795px,#cacaca 825px,#cacaca 826px,#c5c5c5 841px,#c0c0c0 853px,#bababa 863px,#b4b4b4 871px)"></i><i style="top:376px;height:4px;background:linear-gradient(90deg,#b7b7b7 0px,#b9b9b9 4px,#bcbcbc 9px,#bfbfbf 15px,#c2c2c2 22px,#c7c7c7 31px,#cccccc 42px,#d3d3d3 56px,#dcdcdc 74px,#e8e8e8 98px,#f6f6f6 128px,#ffffff 175px,#ffffff 175px,#ffffff 179px,#ffffff 184px,#ffffff 190px,#ffffff 197px,#ffffff 206px,#ffffff 217px,#ffffff 231px,#ffffff 249px,#ffffff 273px,#ffffff 303px,#ffffff 350px,#ffffff 350px,#ffffff 354px,#ffffff 359px,#ffffff 365px,#ffffff 372px,#ffffff 381px,#ffffff 392px,#ffffff 406px,#ffffff 424px,#ffffff 448px,#ffffff 478px,#ffffff 523px,#ffffff 523px,#ffffff 527px,#ffffff 532px,#ffffff 538px,#ffffff 545px,#ffffff 554px,#ffffff 565px,#ffffff 579px,#ffffff 597px,#ffffff 621px,#ffffff 651px,#ffffff 697px,#dcdcdc 697px,#dcdcdc 701px,#dcdcdc 706px,#dcdcdc 712px,#dbdbdb 719px,#dadada 728px,#d9d9d9 739px,#d8d8d8 753px,#d5d5d5 771px,#d2d2d2 795px,#cbcbcb 825px,#cbcbcb 826px,#c6c6c6 841px,#c0c0c0 853px,#bababa 863px,#b4b4b4 871px)"></i><i style="top:380px;height:4px;background:linear-gradient(90deg,#b7b7b7 0px,#b9b9b9 4px,#bcbcbc 9px,#bfbfbf 15px,#c3c3c3 22px,#c7c7c7 31px,#cdcdcd 42px,#d4d4d4 56px,#dddddd 74px,#e9e9e9 98px,#f8f8f8 128px,#ffffff 175px,#ffffff 175px,#ffffff 179px,#ffffff 184px,#ffffff 190px,#ffffff 197px,#ffffff 206px,#ffffff 217px,#ffffff 231px,#ffffff 249px,#ffffff 273px,#ffffff 303px,#ffffff 350px,#ffffff 350px,#ffffff 354px,#ffffff 359px,#ffffff 365px,#ffffff 372px,#ffffff 381px,#ffffff 392px,#ffffff 406px,#ffffff 424px,#ffffff 448px,#ffffff 478px,#ffffff 523px,#ffffff 523px,#ffffff 527px,#ffffff 532px,#ffffff 538px,#ffffff 545px,#ffffff 554px,#ffffff 565px,#ffffff 579px,#ffffff 597px,#ffffff 621px,#ffffff 651px,#ffffff 697px,#dddddd 697px,#dddddd 701px,#dddddd 706px,#dcdcdc 712px,#dcdcdc 719px,#dbdbdb 728px,#dadada 739px,#d8d8d8 753px,#d6d6d6 771px,#d2d2d2 795px,#cccccc 825px,#cbcbcb 826px,#c6c6c6 841px,#c1c1c1 853px,#bbbbbb 863px,#b5b5b5 871px)"></i><i style="top:384px;height:4px;background:linear-gradient(90deg,#b8b8b8 0px,#bababa 4px,#bdbdbd 9px,#c0c0c0 15px,#c3c3c3 22px,#c8c8c8 31px,#cecece 42px,#d5d5d5 56px,#dedede 74px,#eaeaea 98px,#fafafa 128px,#ffffff 175px,#ffffff 175px,#ffffff 179px,#ffffff 184px,#ffffff 190px,#ffffff 197px,#ffffff 206px,#ffffff 217px,#ffffff 231px,#ffffff 249px,#ffffff 273px,#ffffff 303px,#ffffff 350px,#ffffff 350px,#ffffff 354px,#ffffff 359px,#ffffff 365px,#ffffff 372px,#ffffff 381px,#ffffff 392px,#ffffff 406px,#ffffff 424px,#ffffff 448px,#ffffff 478px,#ffffff 523px,#ffffff 523px,#ffffff 527px,#ffffff 532px,#ffffff 538px,#ffffff 545px,#ffffff 554px,#ffffff 565px,#ffffff 579px,#ffffff 597px,#ffffff 621px,#ffffff 651px,#ffffff 697px,#dedede 697px,#dedede 701px,#dddddd 706px,#dddddd 712px,#dcdcdc 719px,#dcdcdc 728px,#dadada 739px,#d9d9d9 753px,#d7d7d7 771px,#d3d3d3 795px,#cccccc 825px,#cccccc 826px,#c7c7c7 841px,#c2c2c2 853px,#bcbcbc 863px,#b6b6b6 871px)"></i><i style="top:388px;height:4px;background:linear-gradient(90deg,#b8b8b8 0px,#bababa 4px,#bdbdbd 9px,#c0c0c0 15px,#c4c4c4 22px,#c9c9c9 31px,#cecece 42px,#d6d6d6 56px,#dfdfdf 74px,#ececec 98px,#fbfbfb 128px,#ffffff 175px,#ffffff 175px,#ffffff 179px,#ffffff 184px,#ffffff 190px,#ffffff 197px,#ffffff 206px,#ffffff 217px,#ffffff 231px,#ffffff 249px,#ffffff 273px,#ffffff 303px,#ffffff 350px,#ffffff 350px,#ffffff 354px,#ffffff 359px,#ffffff 365px,#ffffff 372px,#ffffff 381px,#ffffff 392px,#ffffff 406px,#ffffff 424px,#ffffff 448px,#ffffff 478px,#ffffff 523px,#ffffff 523px,#ffffff 527px,#ffffff 532px,#ffffff 538px,#ffffff 545px,#ffffff 554px,#ffffff 565px,#ffffff 579px,#ffffff 597px,#ffffff 621px,#ffffff 651px,#ffffff 697px,#dedede 697px,#dedede 701px,#dedede 706px,#dedede 712px,#dddddd 719px,#dcdcdc 728px,#dbdbdb 739px,#d9d9d9 753px,#d7d7d7 771px,#d3d3d3 795px,#cdcdcd 825px,#cdcdcd 826px,#c8c8c8 841px,#c2c2c2 853px,#bcbcbc 863px,#b6b6b6 871px)"></i><i style="top:392px;height:4px;background:linear-gradient(90deg,#b8b8b8 0px,#bbbbbb 4px,#bdbdbd 9px,#c1c1c1 15px,#c4c4c4 22px,#c9c9c9 31px,#cfcfcf 42px,#d7d7d7 56px,#e0e0e0 74px,#ededed 98px,#fdfdfd 128px,#ffffff 175px,#ffffff 175px,#ffffff 179px,#ffffff 184px,#ffffff 190px,#ffffff 197px,#ffffff 206px,#ffffff 217px,#ffffff 231px,#ffffff 249px,#ffffff 273px,#ffffff 303px,#ffffff 350px,#ffffff 350px,#ffffff 354px,#ffffff 359px,#ffffff 365px,#ffffff 372px,#ffffff 381px,#ffffff 392px,#ffffff 406px,#ffffff 424px,#ffffff 448px,#ffffff 478px,#ffffff 523px,#ffffff 523px,#ffffff 527px,#ffffff 532px,#ffffff 538px,#ffffff 545px,#ffffff 554px,#ffffff 565px,#ffffff 579px,#ffffff 597px,#ffffff 621px,#ffffff 651px,#ffffff 697px,#dfdfdf 697px,#dfdfdf 701px,#dfdfdf 706px,#dedede 712px,#dedede 719px,#dddddd 728px,#dcdcdc 739px,#dadada 753px,#d8d8d8 771px,#d4d4d4 795px,#cdcdcd 825px,#cdcdcd 826px,#c8c8c8 841px,#c3c3c3 853px,#bdbdbd 863px,#b7b7b7 871px)"></i><i style="top:396px;height:4px;background:linear-gradient(90deg,#b9b9b9 0px,#bbbbbb 4px,#bebebe 9px,#c1c1c1 15px,#c5c5c5 22px,#cacaca 31px,#d0d0d0 42px,#d7d7d7 56px,#e1e1e1 74px,#eeeeee 98px,#fefefe 128px,#ffffff 175px,#ffffff 175px,#ffffff 179px,#ffffff 184px,#ffffff 190px,#ffffff 197px,#ffffff 206px,#ffffff 217px,#ffffff 231px,#ffffff 249px,#ffffff 273px,#ffffff 303px,#ffffff 350px,#ffffff 350px,#ffffff 354px,#ffffff 359px,#ffffff 365px,#ffffff 372px,#ffffff 381px,#ffffff 392px,#ffffff 406px,#ffffff 424px,#ffffff 448px,#ffffff 478px,#ffffff 523px,#ffffff 523px,#ffffff 527px,#ffffff 532px,#ffffff 538px,#ffffff 545px,#ffffff 554px,#ffffff 565px,#ffffff 579px,#ffffff 597px,#ffffff 621px,#ffffff 651px,#ffffff 697px,#e0e0e0 697px,#e0e0e0 701px,#dfdfdf 706px,#dfdfdf 712px,#dedede 719px,#dddddd 728px,#dcdcdc 739px,#dadada 753px,#d8d8d8 771px,#d5d5d5 795px,#cecece 825px,#cecece 826px,#c9c9c9 841px,#c4c4c4 853px,#bebebe 863px,#b8b8b8 871px)"></i><i style="top:400px;height:4px;background:linear-gradient(90deg,#b9b9b9 0px,#c9c9c9 29px,#d9d9d9 58px,#e9e9e9 87px,#f9f9f9 116px,#ffffff 145px,#ffffff 175px,#ffffff 175px,#ffffff 204px,#ffffff 233px,#ffffff 262px,#ffffff 291px,#ffffff 320px,#ffffff 350px,#ffffff 350px,#ffffff 379px,#ffffff 408px,#ffffff 437px,#ffffff 466px,#ffffff 495px,#ffffff 523px,#ffffff 523px,#ffffff 552px,#ffffff 581px,#ffffff 610px,#ffffff 639px,#ffffff 668px,#ffffff 697px,#e0e0e0 697px,#dedede 726px,#dbdbdb 755px,#d7d7d7 784px,#d2d2d2 813px,#cecece 826px,#cacaca 841px,#c4c4c4 853px,#bebebe 863px,#b8b8b8 871px)"></i><i style="top:404px;height:4px;background:linear-gradient(90deg,#b9b9b9 0px,#cacaca 29px,#dadada 58px,#ebebeb 87px,#fbfbfb 116px,#ffffff 145px,#ffffff 175px,#ffffff 175px,#ffffff 204px,#ffffff 233px,#ffffff 262px,#ffffff 291px,#ffffff 320px,#ffffff 350px,#ffffff 350px,#ffffff 379px,#ffffff 408px,#ffffff 437px,#ffffff 466px,#ffffff 495px,#ffffff 523px,#ffffff 523px,#ffffff 552px,#ffffff 581px,#ffffff 610px,#ffffff 639px,#ffffff 668px,#ffffff 697px,#e1e1e1 697px,#dfdfdf 726px,#dbdbdb 755px,#d7d7d7 784px,#d2d2d2 813px,#cfcfcf 826px,#cacaca 841px,#c5c5c5 853px,#bfbfbf 863px,#b9b9b9 871px)"></i><i style="top:408px;height:4px;background:linear-gradient(90deg,#bababa 0px,#cbcbcb 29px,#dbdbdb 58px,#ececec 87px,#fcfcfc 116px,#ffffff 145px,#ffffff 175px,#ffffff 175px,#ffffff 204px,#ffffff 233px,#ffffff 262px,#ffffff 291px,#ffffff 320px,#ffffff 350px,#ffffff 350px,#ffffff 379px,#ffffff 408px,#ffffff 437px,#ffffff 466px,#ffffff 495px,#ffffff 523px,#ffffff 523px,#ffffff 552px,#ffffff 581px,#ffffff 610px,#ffffff 639px,#ffffff 668px,#ffffff 697px,#e2e2e2 697px,#dfdfdf 726px,#dcdcdc 755px,#d8d8d8 784px,#d3d3d3 813px,#d0d0d0 826px,#cbcbcb 841px,#c5c5c5 853px,#c0c0c0 863px,#bababa 871px)"></i><i style="top:412px;height:4px;background:linear-gradient(90deg,#bababa 0px,#cbcbcb 29px,#dcdcdc 58px,#ededed 87px,#fefefe 116px,#ffffff 145px,#ffffff 175px,#ffffff 175px,#ffffff 204px,#ffffff 233px,#ffffff 262px,#ffffff 291px,#ffffff 320px,#ffffff 350px,#ffffff 350px,#ffffff 379px,#ffffff 408px,#ffffff 437px,#ffffff 466px,#ffffff 495px,#ffffff 523px,#ffffff 523px,#ffffff 552px,#ffffff 581px,#ffffff 610px,#ffffff 639px,#ffffff 668px,#ffffff 697px,#e2e2e2 697px,#e0e0e0 726px,#dcdcdc 755px,#d9d9d9 784px,#d3d3d3 813px,#d0d0d0 826px,#cbcbcb 841px,#c6c6c6 853px,#c0c0c0 863px,#bababa 871px)"></i><i style="top:416px;height:4px;background:linear-gradient(90deg,#bababa 0px,#cccccc 29px,#dddddd 58px,#eeeeee 87px,#ffffff 116px,#ffffff 145px,#ffffff 175px,#ffffff 175px,#ffffff 204px,#ffffff 233px,#ffffff 262px,#ffffff 291px,#ffffff 320px,#ffffff 350px,#ffffff 350px,#ffffff 379px,#ffffff 408px,#ffffff 437px,#ffffff 466px,#ffffff 495px,#ffffff 523px,#ffffff 523px,#ffffff 552px,#ffffff 581px,#ffffff 610px,#ffffff 639px,#ffffff 668px,#ffffff 697px,#e3e3e3 697px,#e0e0e0 726px,#dddddd 755px,#d9d9d9 784px,#d4d4d4 813px,#d1d1d1 826px,#cccccc 841px,#c7c7c7 853px,#c1c1c1 863px,#bbbbbb 871px)"></i><i style="top:420px;height:4px;background:linear-gradient(90deg,#bbbbbb 0px,#cccccc 29px,#dedede 58px,#efefef 87px,#ffffff 116px,#ffffff 145px,#ffffff 175px,#ffffff 175px,#ffffff 204px,#ffffff 233px,#ffffff 262px,#ffffff 291px,#ffffff 320px,#ffffff 350px,#ffffff 350px,#ffffff 379px,#ffffff 408px,#ffffff 437px,#ffffff 466px,#ffffff 495px,#ffffff 523px,#ffffff 523px,#ffffff 552px,#ffffff 581px,#ffffff 610px,#ffffff 639px,#ffffff 668px,#ffffff 697px,#e3e3e3 697px,#e1e1e1 726px,#dddddd 755px,#dadada 784px,#d5d5d5 813px,#d1d1d1 826px,#cdcdcd 841px,#c7c7c7 853px,#c2c2c2 863px,#bcbcbc 871px)"></i><i style="top:424px;height:4px;background:linear-gradient(90deg,#bbbbbb 0px,#cdcdcd 29px,#dfdfdf 58px,#f0f0f0 87px,#ffffff 116px,#ffffff 145px,#ffffff 175px,#ffffff 175px,#ffffff 204px,#ffffff 233px,#ffffff 262px,#ffffff 291px,#ffffff 320px,#ffffff 350px,#ffffff 350px,#ffffff 379px,#ffffff 408px,#ffffff 437px,#ffffff 466px,#ffffff 495px,#ffffff 523px,#ffffff 523px,#ffffff 552px,#ffffff 581px,#ffffff 610px,#ffffff 639px,#ffffff 668px,#ffffff 697px,#e4e4e4 697px,#e1e1e1 726px,#dedede 755px,#dadada 784px,#d5d5d5 813px,#d2d2d2 826px,#cdcdcd 841px,#c8c8c8 853px,#c2c2c2 863px,#bcbcbc 871px)"></i><i style="top:428px;height:4px;background:linear-gradient(90deg,#bbbbbb 0px,#cdcdcd 29px,#e0e0e0 58px,#f2f2f2 87px,#ffffff 116px,#ffffff 145px,#ffffff 175px,#ffffff 175px,#ffffff 204px,#ffffff 233px,#ffffff 262px,#ffffff 291px,#ffffff 320px,#ffffff 350px,#ffffff 350px,#ffffff 379px,#ffffff 408px,#ffffff 437px,#ffffff 466px,#ffffff 495px,#ffffff 523px,#ffffff 523px,#ffffff 552px,#ffffff 581px,#ffffff 610px,#ffffff 639px,#ffffff 668px,#ffffff 697px,#e4e4e4 697px,#e2e2e2 726px,#dfdfdf 755px,#dbdbdb 784px,#d6d6d6 813px,#d3d3d3 826px,#cecece 841px,#c9c9c9 853px,#c3c3c3 863px,#bdbdbd 871px)"></i><i style="top:432px;height:4px;background:linear-gradient(90deg,#bcbcbc 0px,#cecece 29px,#e0e0e0 58px,#f3f3f3 87px,#ffffff 116px,#ffffff 145px,#ffffff 175px,#ffffff 175px,#ffffff 204px,#ffffff 233px,#ffffff 262px,#ffffff 291px,#ffffff 320px,#ffffff 350px,#ffffff 350px,#ffffff 379px,#ffffff 408px,#ffffff 437px,#ffffff 466px,#ffffff 495px,#ffffff 523px,#ffffff 523px,#ffffff 552px,#ffffff 581px,#ffffff 610px,#ffffff 639px,#ffffff 668px,#ffffff 697px,#e5e5e5 697px,#e2e2e2 726px,#dfdfdf 755px,#dbdbdb 784px,#d6d6d6 813px,#d3d3d3 826px,#cfcfcf 841px,#c9c9c9 853px,#c3c3c3 863px,#bebebe 871px)"></i><i style="top:436px;height:1px;background:linear-gradient(90deg,#bcbcbc 0px,#cecece 29px,#e1e1e1 58px,#f4f4f4 87px,#ffffff 116px,#ffffff 145px,#ffffff 175px,#ffffff 175px,#ffffff 204px,#ffffff 233px,#ffffff 262px,#ffffff 291px,#ffffff 320px,#ffffff 350px,#ffffff 350px,#ffffff 379px,#ffffff 408px,#ffffff 437px,#ffffff 466px,#ffffff 495px,#ffffff 523px,#ffffff 523px,#ffffff 552px,#ffffff 581px,#ffffff 610px,#ffffff 639px,#ffffff 668px,#ffffff 697px,#e5e5e5 697px,#e3e3e3 726px,#dfdfdf 755px,#dcdcdc 784px,#d7d7d7 813px,#d4d4d4 826px,#cfcfcf 841px,#cacaca 853px,#c4c4c4 863px,#bebebe 871px)"></i><i style="top:437px;height:4px;background:linear-gradient(90deg,#b1b1b1 0px,#b4b4b4 4px,#b8b8b8 9px,#bcbcbc 15px,#c1c1c1 22px,#c6c6c6 31px,#cdcdcd 42px,#d4d4d4 56px,#dddddd 74px,#e9e9e9 98px,#f8f8f8 128px,#ffffff 175px,#d7d7d7 175px,#e1e1e1 179px,#ebebeb 184px,#f5f5f5 190px,#fefefe 197px,#ffffff 206px,#ffffff 217px,#ffffff 231px,#ffffff 249px,#ffffff 273px,#ffffff 303px,#ffffff 350px,#d9d9d9 350px,#e2e2e2 354px,#ececec 359px,#f6f6f6 365px,#ffffff 372px,#ffffff 381px,#ffffff 392px,#ffffff 406px,#ffffff 424px,#ffffff 448px,#ffffff 478px,#ffffff 523px,#dbdbdb 523px,#e5e5e5 527px,#eeeeee 532px,#f8f8f8 538px,#ffffff 545px,#ffffff 554px,#ffffff 565px,#ffffff 579px,#ffffff 597px,#ffffff 621px,#ffffff 651px,#ffffff 697px,#c2c2c2 697px,#c6c6c6 701px,#cacaca 706px,#cecece 712px,#d1d1d1 719px,#d4d4d4 728px,#d7d7d7 739px,#d8d8d8 753px,#d9d9d9 771px,#d8d8d8 795px,#d4d4d4 825px,#d4d4d4 826px,#d1d1d1 841px,#cdcdcd 853px,#c9c9c9 863px,#c4c4c4 871px)"></i><i style="top:441px;height:4px;background:linear-gradient(90deg,#b3b3b3 0px,#b6b6b6 4px,#b9b9b9 9px,#bebebe 15px,#c2c2c2 22px,#c7c7c7 31px,#cecece 42px,#d5d5d5 56px,#dedede 74px,#eaeaea 98px,#f9f9f9 128px,#ffffff 175px,#dfdfdf 175px,#e8e8e8 179px,#f1f1f1 184px,#fafafa 190px,#ffffff 197px,#ffffff 206px,#ffffff 217px,#ffffff 231px,#ffffff 249px,#ffffff 273px,#ffffff 303px,#ffffff 350px,#e1e1e1 350px,#e9e9e9 354px,#f2f2f2 359px,#fbfbfb 365px,#ffffff 372px,#ffffff 381px,#ffffff 392px,#ffffff 406px,#ffffff 424px,#ffffff 448px,#ffffff 478px,#ffffff 523px,#e3e3e3 523px,#ebebeb 527px,#f4f4f4 532px,#fcfcfc 538px,#ffffff 545px,#ffffff 554px,#ffffff 565px,#ffffff 579px,#ffffff 597px,#ffffff 621px,#ffffff 651px,#ffffff 697px,#c6c6c6 697px,#c9c9c9 701px,#cdcdcd 706px,#d0d0d0 712px,#d3d3d3 719px,#d6d6d6 728px,#d8d8d8 739px,#d9d9d9 753px,#d9d9d9 771px,#d8d8d8 795px,#d4d4d4 825px,#d4d4d4 826px,#d1d1d1 841px,#cdcdcd 853px,#c8c8c8 863px,#c4c4c4 871px)"></i><i style="top:445px;height:4px;background:linear-gradient(90deg,#b4b4b4 0px,#b7b7b7 4px,#bbbbbb 9px,#bfbfbf 15px,#c3c3c3 22px,#c8c8c8 31px,#cecece 42px,#d6d6d6 56px,#dfdfdf 74px,#ebebeb 98px,#f9f9f9 128px,#ffffff 175px,#e7e7e7 175px,#eeeeee 179px,#f6f6f6 184px,#fefefe 190px,#ffffff 197px,#ffffff 206px,#ffffff 217px,#ffffff 231px,#ffffff 249px,#ffffff 273px,#ffffff 303px,#ffffff 350px,#e8e8e8 350px,#efefef 354px,#f7f7f7 359px,#ffffff 365px,#ffffff 372px,#ffffff 381px,#ffffff 392px,#ffffff 406px,#ffffff 424px,#ffffff 448px,#ffffff 478px,#ffffff 523px,#eaeaea 523px,#f1f1f1 527px,#f9f9f9 532px,#ffffff 538px,#ffffff 545px,#ffffff 554px,#ffffff 565px,#ffffff 579px,#ffffff 597px,#ffffff 621px,#ffffff 651px,#ffffff 697px,#c9c9c9 697px,#cccccc 701px,#cfcfcf 706px,#d2d2d2 712px,#d5d5d5 719px,#d7d7d7 728px,#d9d9d9 739px,#d9d9d9 753px,#d9d9d9 771px,#d8d8d8 795px,#d4d4d4 825px,#d4d4d4 826px,#d1d1d1 841px,#cdcdcd 853px,#c8c8c8 863px,#c4c4c4 871px)"></i><i style="top:449px;height:4px;background:linear-gradient(90deg,#b6b6b6 0px,#b8b8b8 4px,#bcbcbc 9px,#c0c0c0 15px,#c4c4c4 22px,#c9c9c9 31px,#cfcfcf 42px,#d6d6d6 56px,#dfdfdf 74px,#ebebeb 98px,#fafafa 128px,#ffffff 175px,#ededed 175px,#f4f4f4 179px,#fbfbfb 184px,#ffffff 190px,#ffffff 197px,#ffffff 206px,#ffffff 217px,#ffffff 231px,#ffffff 249px,#ffffff 273px,#ffffff 303px,#ffffff 350px,#eeeeee 350px,#f5f5f5 354px,#fcfcfc 359px,#ffffff 365px,#ffffff 372px,#ffffff 381px,#ffffff 392px,#ffffff 406px,#ffffff 424px,#ffffff 448px,#ffffff 478px,#ffffff 523px,#f0f0f0 523px,#f6f6f6 527px,#fdfdfd 532px,#ffffff 538px,#ffffff 545px,#ffffff 554px,#ffffff 565px,#ffffff 579px,#ffffff 597px,#ffffff 621px,#ffffff 651px,#ffffff 697px,#cccccc 697px,#cfcfcf 701px,#d2d2d2 706px,#d4d4d4 712px,#d6d6d6 719px,#d8d8d8 728px,#d9d9d9 739px,#dadada 753px,#dadada 771px,#d8d8d8 795px,#d4d4d4 825px,#d4d4d4 826px,#d1d1d1 841px,#cdcdcd 853px,#c8c8c8 863px,#c4c4c4 871px)"></i><i style="top:453px;height:4px;background:linear-gradient(90deg,#b7b7b7 0px,#bababa 4px,#bdbdbd 9px,#c1c1c1 15px,#c5c5c5 22px,#cacaca 31px,#d0d0d0 42px,#d7d7d7 56px,#e0e0e0 74px,#ececec 98px,#fbfbfb 128px,#ffffff 175px,#f3f3f3 175px,#f9f9f9 179px,#ffffff 184px,#ffffff 190px,#ffffff 197px,#ffffff 206px,#ffffff 217px,#ffffff 231px,#ffffff 249px,#ffffff 273px,#ffffff 303px,#ffffff 350px,#f4f4f4 350px,#fafafa 354px,#ffffff 359px,#ffffff 365px,#ffffff 372px,#ffffff 381px,#ffffff 392px,#ffffff 406px,#ffffff 424px,#ffffff 448px,#ffffff 478px,#ffffff 523px,#f6f6f6 523px,#fbfbfb 527px,#ffffff 532px,#ffffff 538px,#ffffff 545px,#ffffff 554px,#ffffff 565px,#ffffff 579px,#ffffff 597px,#ffffff 621px,#ffffff 651px,#ffffff 697px,#cfcfcf 697px,#d1d1d1 701px,#d4d4d4 706px,#d6d6d6 712px,#d8d8d8 719px,#d9d9d9 728px,#dadada 739px,#dadada 753px,#dadada 771px,#d8d8d8 795px,#d4d4d4 825px,#d4d4d4 826px,#d1d1d1 841px,#cdcdcd 853px,#c8c8c8 863px,#c4c4c4 871px)"></i><i style="top:457px;height:4px;background:linear-gradient(90deg,#b8b8b8 0px,#bbbbbb 4px,#bebebe 9px,#c2c2c2 15px,#c6c6c6 22px,#cbcbcb 31px,#d1d1d1 42px,#d8d8d8 56px,#e1e1e1 74px,#ededed 98px,#fbfbfb 128px,#ffffff 175px,#f8f8f8 175px,#fdfdfd 179px,#ffffff 184px,#ffffff 190px,#ffffff 197px,#ffffff 206px,#ffffff 217px,#ffffff 231px,#ffffff 249px,#ffffff 273px,#ffffff 303px,#ffffff 350px,#f9f9f9 350px,#fefefe 354px,#ffffff 359px,#ffffff 365px,#ffffff 372px,#ffffff 381px,#ffffff 392px,#ffffff 406px,#ffffff 424px,#ffffff 448px,#ffffff 478px,#ffffff 523px,#fafafa 523px,#ffffff 527px,#ffffff 532px,#ffffff 538px,#ffffff 545px,#ffffff 554px,#ffffff 565px,#ffffff 579px,#ffffff 597px,#ffffff 621px,#ffffff 651px,#ffffff 697px,#d2d2d2 697px,#d4d4d4 701px,#d5d5d5 706px,#d7d7d7 712px,#d9d9d9 719px,#dadada 728px,#dbdbdb 739px,#dbdbdb 753px,#dadada 771px,#d9d9d9 795px,#d4d4d4 825px,#d4d4d4 826px,#d1d1d1 841px,#cdcdcd 853px,#c8c8c8 863px,#c4c4c4 871px)"></i><i style="top:461px;height:4px;background:linear-gradient(90deg,#b9b9b9 0px,#bcbcbc 4px,#bfbfbf 9px,#c2c2c2 15px,#c6c6c6 22px,#cbcbcb 31px,#d1d1d1 42px,#d8d8d8 56px,#e2e2e2 74px,#ededed 98px,#fcfcfc 128px,#ffffff 175px,#fcfcfc 175px,#ffffff 179px,#ffffff 184px,#ffffff 190px,#ffffff 197px,#ffffff 206px,#ffffff 217px,#ffffff 231px,#ffffff 249px,#ffffff 273px,#ffffff 303px,#ffffff 350px,#fdfdfd 350px,#ffffff 354px,#ffffff 359px,#ffffff 365px,#ffffff 372px,#ffffff 381px,#ffffff 392px,#ffffff 406px,#ffffff 424px,#ffffff 448px,#ffffff 478px,#ffffff 523px,#fefefe 523px,#ffffff 527px,#ffffff 532px,#ffffff 538px,#ffffff 545px,#ffffff 554px,#ffffff 565px,#ffffff 579px,#ffffff 597px,#ffffff 621px,#ffffff 651px,#ffffff 697px,#d4d4d4 697px,#d5d5d5 701px,#d7d7d7 706px,#d9d9d9 712px,#dadada 719px,#dbdbdb 728px,#dbdbdb 739px,#dbdbdb 753px,#dbdbdb 771px,#d9d9d9 795px,#d5d5d5 825px,#d4d4d4 826px,#d1d1d1 841px,#cdcdcd 853px,#c8c8c8 863px,#c4c4c4 871px)"></i><i style="top:465px;height:4px;background:linear-gradient(90deg,#bababa 0px,#bdbdbd 4px,#c0c0c0 9px,#c3c3c3 15px,#c7c7c7 22px,#cccccc 31px,#d2d2d2 42px,#d9d9d9 56px,#e2e2e2 74px,#eeeeee 98px,#fdfdfd 128px,#ffffff 175px,#ffffff 175px,#ffffff 179px,#ffffff 184px,#ffffff 190px,#ffffff 197px,#ffffff 206px,#ffffff 217px,#ffffff 231px,#ffffff 249px,#ffffff 273px,#ffffff 303px,#ffffff 350px,#ffffff 350px,#ffffff 354px,#ffffff 359px,#ffffff 365px,#ffffff 372px,#ffffff 381px,#ffffff 392px,#ffffff 406px,#ffffff 424px,#ffffff 448px,#ffffff 478px,#ffffff 523px,#ffffff 523px,#ffffff 527px,#ffffff 532px,#ffffff 538px,#ffffff 545px,#ffffff 554px,#ffffff 565px,#ffffff 579px,#ffffff 597px,#ffffff 621px,#ffffff 651px,#ffffff 697px,#d6d6d6 697px,#d7d7d7 701px,#d9d9d9 706px,#dadada 712px,#dbdbdb 719px,#dcdcdc 728px,#dcdcdc 739px,#dcdcdc 753px,#dbdbdb 771px,#d9d9d9 795px,#d5d5d5 825px,#d4d4d4 826px,#d1d1d1 841px,#cdcdcd 853px,#c8c8c8 863px,#c4c4c4 871px)"></i><i style="top:469px;height:4px;background:linear-gradient(90deg,#bbbbbb 0px,#bebebe 4px,#c1c1c1 9px,#c4c4c4 15px,#c8c8c8 22px,#cdcdcd 31px,#d3d3d3 42px,#dadada 56px,#e3e3e3 74px,#efefef 98px,#fefefe 128px,#ffffff 175px,#ffffff 175px,#ffffff 179px,#ffffff 184px,#ffffff 190px,#ffffff 197px,#ffffff 206px,#ffffff 217px,#ffffff 231px,#ffffff 249px,#ffffff 273px,#ffffff 303px,#ffffff 350px,#ffffff 350px,#ffffff 354px,#ffffff 359px,#ffffff 365px,#ffffff 372px,#ffffff 381px,#ffffff 392px,#ffffff 406px,#ffffff 424px,#ffffff 448px,#ffffff 478px,#ffffff 523px,#ffffff 523px,#ffffff 527px,#ffffff 532px,#ffffff 538px,#ffffff 545px,#ffffff 554px,#ffffff 565px,#ffffff 579px,#ffffff 597px,#ffffff 621px,#ffffff 651px,#ffffff 697px,#d8d8d8 697px,#d9d9d9 701px,#dadada 706px,#dbdbdb 712px,#dcdcdc 719px,#dcdcdc 728px,#dcdcdc 739px,#dcdcdc 753px,#dbdbdb 771px,#d9d9d9 795px,#d5d5d5 825px,#d4d4d4 826px,#d1d1d1 841px,#cdcdcd 853px,#c8c8c8 863px,#c4c4c4 871px)"></i><i style="top:473px;height:4px;background:linear-gradient(90deg,#bcbcbc 0px,#bfbfbf 4px,#c1c1c1 9px,#c5c5c5 15px,#c9c9c9 22px,#cecece 31px,#d3d3d3 42px,#dadada 56px,#e4e4e4 74px,#f0f0f0 98px,#fefefe 128px,#ffffff 175px,#ffffff 175px,#ffffff 179px,#ffffff 184px,#ffffff 190px,#ffffff 197px,#ffffff 206px,#ffffff 217px,#ffffff 231px,#ffffff 249px,#ffffff 273px,#ffffff 303px,#ffffff 350px,#ffffff 350px,#ffffff 354px,#ffffff 359px,#ffffff 365px,#ffffff 372px,#ffffff 381px,#ffffff 392px,#ffffff 406px,#ffffff 424px,#ffffff 448px,#ffffff 478px,#ffffff 523px,#ffffff 523px,#ffffff 527px,#ffffff 532px,#ffffff 538px,#ffffff 545px,#ffffff 554px,#ffffff 565px,#ffffff 579px,#ffffff 597px,#ffffff 621px,#ffffff 651px,#ffffff 697px,#d9d9d9 697px,#dadada 701px,#dbdbdb 706px,#dcdcdc 712px,#dcdcdc 719px,#dddddd 728px,#dddddd 739px,#dcdcdc 753px,#dbdbdb 771px,#d9d9d9 795px,#d5d5d5 825px,#d5d5d5 826px,#d1d1d1 841px,#cdcdcd 853px,#c8c8c8 863px,#c3c3c3 871px)"></i><i style="top:477px;height:4px;background:linear-gradient(90deg,#bdbdbd 0px,#bfbfbf 4px,#c2c2c2 9px,#c6c6c6 15px,#c9c9c9 22px,#cecece 31px,#d4d4d4 42px,#dbdbdb 56px,#e4e4e4 74px,#f0f0f0 98px,#ffffff 128px,#ffffff 175px,#ffffff 175px,#ffffff 179px,#ffffff 184px,#ffffff 190px,#ffffff 197px,#ffffff 206px,#ffffff 217px,#ffffff 231px,#ffffff 249px,#ffffff 273px,#ffffff 303px,#ffffff 350px,#ffffff 350px,#ffffff 354px,#ffffff 359px,#ffffff 365px,#ffffff 372px,#ffffff 381px,#ffffff 392px,#ffffff 406px,#ffffff 424px,#ffffff 448px,#ffffff 478px,#ffffff 523px,#ffffff 523px,#ffffff 527px,#ffffff 532px,#ffffff 538px,#ffffff 545px,#ffffff 554px,#ffffff 565px,#ffffff 579px,#ffffff 597px,#ffffff 621px,#ffffff 651px,#ffffff 697px,#dbdbdb 697px,#dbdbdb 701px,#dcdcdc 706px,#dddddd 712px,#dddddd 719px,#dddddd 728px,#dddddd 739px,#dddddd 753px,#dcdcdc 771px,#d9d9d9 795px,#d5d5d5 825px,#d5d5d5 826px,#d1d1d1 841px,#cdcdcd 853px,#c8c8c8 863px,#c3c3c3 871px)"></i><i style="top:481px;height:4px;background:linear-gradient(90deg,#bebebe 0px,#c0c0c0 4px,#c3c3c3 9px,#c6c6c6 15px,#cacaca 22px,#cfcfcf 31px,#d5d5d5 42px,#dcdcdc 56px,#e5e5e5 74px,#f1f1f1 98px,#ffffff 128px,#ffffff 175px,#ffffff 175px,#ffffff 179px,#ffffff 184px,#ffffff 190px,#ffffff 197px,#ffffff 206px,#ffffff 217px,#ffffff 231px,#ffffff 249px,#ffffff 273px,#ffffff 303px,#ffffff 350px,#ffffff 350px,#ffffff 354px,#ffffff 359px,#ffffff 365px,#ffffff 372px,#ffffff 381px,#ffffff 392px,#ffffff 406px,#ffffff 424px,#ffffff 448px,#ffffff 478px,#ffffff 523px,#ffffff 523px,#ffffff 527px,#ffffff 532px,#ffffff 538px,#ffffff 545px,#ffffff 554px,#ffffff 565px,#ffffff 579px,#ffffff 597px,#ffffff 621px,#ffffff 651px,#ffffff 697px,#dcdcdc 697px,#dddddd 701px,#dddddd 706px,#dedede 712px,#dedede 719px,#dedede 728px,#dedede 739px,#dddddd 753px,#dcdcdc 771px,#dadada 795px,#d5d5d5 825px,#d5d5d5 826px,#d1d1d1 841px,#cdcdcd 853px,#c8c8c8 863px,#c3c3c3 871px)"></i><i style="top:485px;height:4px;background:linear-gradient(90deg,#bfbfbf 0px,#c1c1c1 4px,#c4c4c4 9px,#c7c7c7 15px,#cbcbcb 22px,#d0d0d0 31px,#d5d5d5 42px,#dcdcdc 56px,#e6e6e6 74px,#f2f2f2 98px,#ffffff 128px,#ffffff 175px,#ffffff 175px,#ffffff 179px,#ffffff 184px,#ffffff 190px,#ffffff 197px,#ffffff 206px,#ffffff 217px,#ffffff 231px,#ffffff 249px,#ffffff 273px,#ffffff 303px,#ffffff 350px,#ffffff 350px,#ffffff 354px,#ffffff 359px,#ffffff 365px,#ffffff 372px,#ffffff 381px,#ffffff 392px,#ffffff 406px,#ffffff 424px,#ffffff 448px,#ffffff 478px,#ffffff 523px,#ffffff 523px,#ffffff 527px,#ffffff 532px,#ffffff 538px,#ffffff 545px,#ffffff 554px,#ffffff 565px,#ffffff 579px,#ffffff 597px,#ffffff 621px,#ffffff 651px,#ffffff 697px,#dddddd 697px,#dedede 701px,#dedede 706px,#dedede 712px,#dfdfdf 719px,#dfdfdf 728px,#dedede 739px,#dedede 753px,#dcdcdc 771px,#dadada 795px,#d5d5d5 825px,#d5d5d5 826px,#d1d1d1 841px,#cdcdcd 853px,#c8c8c8 863px,#c3c3c3 871px)"></i><i style="top:489px;height:4px;background:linear-gradient(90deg,#bfbfbf 0px,#c2c2c2 4px,#c4c4c4 9px,#c8c8c8 15px,#cbcbcb 22px,#d0d0d0 31px,#d6d6d6 42px,#dddddd 56px,#e6e6e6 74px,#f2f2f2 98px,#ffffff 128px,#ffffff 175px,#ffffff 175px,#ffffff 179px,#ffffff 184px,#ffffff 190px,#ffffff 197px,#ffffff 206px,#ffffff 217px,#ffffff 231px,#ffffff 249px,#ffffff 273px,#ffffff 303px,#ffffff 350px,#ffffff 350px,#ffffff 354px,#ffffff 359px,#ffffff 365px,#ffffff 372px,#ffffff 381px,#ffffff 392px,#ffffff 406px,#ffffff 424px,#ffffff 448px,#ffffff 478px,#ffffff 523px,#ffffff 523px,#ffffff 527px,#ffffff 532px,#ffffff 538px,#ffffff 545px,#ffffff 554px,#ffffff 565px,#ffffff 579px,#ffffff 597px,#ffffff 621px,#ffffff 651px,#ffffff 697px,#dedede 697px,#dfdfdf 701px,#dfdfdf 706px,#dfdfdf 712px,#dfdfdf 719px,#dfdfdf 728px,#dfdfdf 739px,#dedede 753px,#dcdcdc 771px,#dadada 795px,#d5d5d5 825px,#d5d5d5 826px,#d1d1d1 841px,#cdcdcd 853px,#c8c8c8 863px,#c3c3c3 871px)"></i><i style="top:493px;height:4px;background:linear-gradient(90deg,#c0c0c0 0px,#c2c2c2 4px,#c5c5c5 9px,#c8c8c8 15px,#cccccc 22px,#d1d1d1 31px,#d6d6d6 42px,#dedede 56px,#e7e7e7 74px,#f3f3f3 98px,#ffffff 128px,#ffffff 175px,#ffffff 175px,#ffffff 179px,#ffffff 184px,#ffffff 190px,#ffffff 197px,#ffffff 206px,#ffffff 217px,#ffffff 231px,#ffffff 249px,#ffffff 273px,#ffffff 303px,#ffffff 350px,#ffffff 350px,#ffffff 354px,#ffffff 359px,#ffffff 365px,#ffffff 372px,#ffffff 381px,#ffffff 392px,#ffffff 406px,#ffffff 424px,#ffffff 448px,#ffffff 478px,#ffffff 523px,#ffffff 523px,#ffffff 527px,#ffffff 532px,#ffffff 538px,#ffffff 545px,#ffffff 554px,#ffffff 565px,#ffffff 579px,#ffffff 597px,#ffffff 621px,#ffffff 651px,#ffffff 697px,#dfdfdf 697px,#dfdfdf 701px,#e0e0e0 706px,#e0e0e0 712px,#e0e0e0 719px,#e0e0e0 728px,#dfdfdf 739px,#dedede 753px,#dddddd 771px,#dadada 795px,#d5d5d5 825px,#d5d5d5 826px,#d1d1d1 841px,#cdcdcd 853px,#c8c8c8 863px,#c3c3c3 871px)"></i><i style="top:497px;height:4px;background:linear-gradient(90deg,#c1c1c1 0px,#c3c3c3 4px,#c6c6c6 9px,#c9c9c9 15px,#cdcdcd 22px,#d1d1d1 31px,#d7d7d7 42px,#dedede 56px,#e7e7e7 74px,#f4f4f4 98px,#ffffff 128px,#ffffff 175px,#ffffff 175px,#ffffff 179px,#ffffff 184px,#ffffff 190px,#ffffff 197px,#ffffff 206px,#ffffff 217px,#ffffff 231px,#ffffff 249px,#ffffff 273px,#ffffff 303px,#ffffff 350px,#ffffff 350px,#ffffff 354px,#ffffff 359px,#ffffff 365px,#ffffff 372px,#ffffff 381px,#ffffff 392px,#ffffff 406px,#ffffff 424px,#ffffff 448px,#ffffff 478px,#ffffff 523px,#ffffff 523px,#ffffff 527px,#ffffff 532px,#ffffff 538px,#ffffff 545px,#ffffff 554px,#ffffff 565px,#ffffff 579px,#ffffff 597px,#ffffff 621px,#ffffff 651px,#ffffff 697px,#e0e0e0 697px,#e0e0e0 701px,#e0e0e0 706px,#e0e0e0 712px,#e0e0e0 719px,#e0e0e0 728px,#dfdfdf 739px,#dedede 753px,#dddddd 771px,#dadada 795px,#d5d5d5 825px,#d5d5d5 826px,#d1d1d1 841px,#cdcdcd 853px,#c8c8c8 863px,#c3c3c3 871px)"></i><i style="top:501px;height:4px;background:linear-gradient(90deg,#c1c1c1 0px,#c4c4c4 4px,#c6c6c6 9px,#cacaca 15px,#cdcdcd 22px,#d2d2d2 31px,#d8d8d8 42px,#dfdfdf 56px,#e8e8e8 74px,#f4f4f4 98px,#ffffff 128px,#ffffff 175px,#ffffff 175px,#ffffff 179px,#ffffff 184px,#ffffff 190px,#ffffff 197px,#ffffff 206px,#ffffff 217px,#ffffff 231px,#ffffff 249px,#ffffff 273px,#ffffff 303px,#ffffff 350px,#ffffff 350px,#ffffff 354px,#ffffff 359px,#ffffff 365px,#ffffff 372px,#ffffff 381px,#ffffff 392px,#ffffff 406px,#ffffff 424px,#ffffff 448px,#ffffff 478px,#ffffff 523px,#ffffff 523px,#ffffff 527px,#ffffff 532px,#ffffff 538px,#ffffff 545px,#ffffff 554px,#ffffff 565px,#ffffff 579px,#ffffff 597px,#ffffff 621px,#ffffff 651px,#ffffff 697px,#e1e1e1 697px,#e1e1e1 701px,#e1e1e1 706px,#e1e1e1 712px,#e1e1e1 719px,#e0e0e0 728px,#e0e0e0 739px,#dfdfdf 753px,#dddddd 771px,#dadada 795px,#d5d5d5 825px,#d5d5d5 826px,#d1d1d1 841px,#cdcdcd 853px,#c8c8c8 863px,#c3c3c3 871px)"></i><i style="top:505px;height:4px;background:linear-gradient(90deg,#c2c2c2 0px,#c4c4c4 4px,#c7c7c7 9px,#cacaca 15px,#cecece 22px,#d3d3d3 31px,#d8d8d8 42px,#e0e0e0 56px,#e9e9e9 74px,#f5f5f5 98px,#ffffff 128px,#ffffff 175px,#ffffff 175px,#ffffff 179px,#ffffff 184px,#ffffff 190px,#ffffff 197px,#ffffff 206px,#ffffff 217px,#ffffff 231px,#ffffff 249px,#ffffff 273px,#ffffff 303px,#ffffff 350px,#ffffff 350px,#ffffff 354px,#ffffff 359px,#ffffff 365px,#ffffff 372px,#ffffff 381px,#ffffff 392px,#ffffff 406px,#ffffff 424px,#ffffff 448px,#ffffff 478px,#ffffff 523px,#ffffff 523px,#ffffff 527px,#ffffff 532px,#ffffff 538px,#ffffff 545px,#ffffff 554px,#ffffff 565px,#ffffff 579px,#ffffff 597px,#ffffff 621px,#ffffff 651px,#ffffff 697px,#e2e2e2 697px,#e2e2e2 701px,#e2e2e2 706px,#e2e2e2 712px,#e1e1e1 719px,#e1e1e1 728px,#e0e0e0 739px,#dfdfdf 753px,#dddddd 771px,#dadada 795px,#d5d5d5 825px,#d5d5d5 826px,#d1d1d1 841px,#cdcdcd 853px,#c8c8c8 863px,#c3c3c3 871px)"></i><i style="top:509px;height:4px;background:linear-gradient(90deg,#c3c3c3 0px,#c5c5c5 4px,#c8c8c8 9px,#cbcbcb 15px,#cfcfcf 22px,#d3d3d3 31px,#d9d9d9 42px,#e0e0e0 56px,#e9e9e9 74px,#f6f6f6 98px,#ffffff 128px,#ffffff 175px,#ffffff 175px,#ffffff 179px,#ffffff 184px,#ffffff 190px,#ffffff 197px,#ffffff 206px,#ffffff 217px,#ffffff 231px,#ffffff 249px,#ffffff 273px,#ffffff 303px,#ffffff 350px,#ffffff 350px,#ffffff 354px,#ffffff 359px,#ffffff 365px,#ffffff 372px,#ffffff 381px,#ffffff 392px,#ffffff 406px,#ffffff 424px,#ffffff 448px,#ffffff 478px,#ffffff 523px,#ffffff 523px,#ffffff 527px,#ffffff 532px,#ffffff 538px,#ffffff 545px,#ffffff 554px,#ffffff 565px,#ffffff 579px,#ffffff 597px,#ffffff 621px,#ffffff 651px,#ffffff 697px,#e2e2e2 697px,#e2e2e2 701px,#e2e2e2 706px,#e2e2e2 712px,#e2e2e2 719px,#e1e1e1 728px,#e1e1e1 739px,#dfdfdf 753px,#dddddd 771px,#dbdbdb 795px,#d5d5d5 825px,#d5d5d5 826px,#d1d1d1 841px,#cdcdcd 853px,#c8c8c8 863px,#c3c3c3 871px)"></i><i style="top:513px;height:4px;background:linear-gradient(90deg,#c3c3c3 0px,#c6c6c6 4px,#c8c8c8 9px,#cbcbcb 15px,#cfcfcf 22px,#d4d4d4 31px,#dadada 42px,#e1e1e1 56px,#eaeaea 74px,#f6f6f6 98px,#ffffff 128px,#ffffff 175px,#ffffff 175px,#ffffff 179px,#ffffff 184px,#ffffff 190px,#ffffff 197px,#ffffff 206px,#ffffff 217px,#ffffff 231px,#ffffff 249px,#ffffff 273px,#ffffff 303px,#ffffff 350px,#ffffff 350px,#ffffff 354px,#ffffff 359px,#ffffff 365px,#ffffff 372px,#ffffff 381px,#ffffff 392px,#ffffff 406px,#ffffff 424px,#ffffff 448px,#ffffff 478px,#ffffff 523px,#ffffff 523px,#ffffff 527px,#ffffff 532px,#ffffff 538px,#ffffff 545px,#ffffff 554px,#ffffff 565px,#ffffff 579px,#ffffff 597px,#ffffff 621px,#ffffff 651px,#ffffff 697px,#e3e3e3 697px,#e3e3e3 701px,#e3e3e3 706px,#e3e3e3 712px,#e2e2e2 719px,#e2e2e2 728px,#e1e1e1 739px,#e0e0e0 753px,#dedede 771px,#dbdbdb 795px,#d5d5d5 825px,#d5d5d5 826px,#d1d1d1 841px,#cdcdcd 853px,#c8c8c8 863px,#c3c3c3 871px)"></i><i style="top:517px;height:4px;background:linear-gradient(90deg,#c4c4c4 0px,#c6c6c6 4px,#c9c9c9 9px,#cccccc 15px,#d0d0d0 22px,#d4d4d4 31px,#dadada 42px,#e1e1e1 56px,#ebebeb 74px,#f7f7f7 98px,#ffffff 128px,#ffffff 175px,#ffffff 175px,#ffffff 179px,#ffffff 184px,#ffffff 190px,#ffffff 197px,#ffffff 206px,#ffffff 217px,#ffffff 231px,#ffffff 249px,#ffffff 273px,#ffffff 303px,#ffffff 350px,#ffffff 350px,#ffffff 354px,#ffffff 359px,#ffffff 365px,#ffffff 372px,#ffffff 381px,#ffffff 392px,#ffffff 406px,#ffffff 424px,#ffffff 448px,#ffffff 478px,#ffffff 523px,#ffffff 523px,#ffffff 527px,#ffffff 532px,#ffffff 538px,#ffffff 545px,#ffffff 554px,#ffffff 565px,#ffffff 579px,#ffffff 597px,#ffffff 621px,#ffffff 651px,#ffffff 697px,#e4e4e4 697px,#e4e4e4 701px,#e4e4e4 706px,#e3e3e3 712px,#e3e3e3 719px,#e2e2e2 728px,#e1e1e1 739px,#e0e0e0 753px,#dedede 771px,#dbdbdb 795px,#d5d5d5 825px,#d5d5d5 826px,#d1d1d1 841px,#cdcdcd 853px,#c8c8c8 863px,#c3c3c3 871px)"></i><i style="top:521px;height:4px;background:linear-gradient(90deg,#c5c5c5 0px,#c7c7c7 4px,#c9c9c9 9px,#cdcdcd 15px,#d0d0d0 22px,#d5d5d5 31px,#dbdbdb 42px,#e2e2e2 56px,#ebebeb 74px,#f8f8f8 98px,#ffffff 128px,#ffffff 175px,#ffffff 175px,#ffffff 179px,#ffffff 184px,#ffffff 190px,#ffffff 197px,#ffffff 206px,#ffffff 217px,#ffffff 231px,#ffffff 249px,#ffffff 273px,#ffffff 303px,#ffffff 350px,#ffffff 350px,#ffffff 354px,#ffffff 359px,#ffffff 365px,#ffffff 372px,#ffffff 381px,#ffffff 392px,#ffffff 406px,#ffffff 424px,#ffffff 448px,#ffffff 478px,#ffffff 523px,#ffffff 523px,#ffffff 527px,#ffffff 532px,#ffffff 538px,#ffffff 545px,#ffffff 554px,#ffffff 565px,#ffffff 579px,#ffffff 597px,#ffffff 621px,#ffffff 651px,#ffffff 697px,#e4e4e4 697px,#e4e4e4 701px,#e4e4e4 706px,#e4e4e4 712px,#e3e3e3 719px,#e2e2e2 728px,#e2e2e2 739px,#e0e0e0 753px,#dedede 771px,#dbdbdb 795px,#d6d6d6 825px,#d5d5d5 826px,#d1d1d1 841px,#cdcdcd 853px,#c8c8c8 863px,#c3c3c3 871px)"></i><i style="top:525px;height:4px;background:linear-gradient(90deg,#c5c5c5 0px,#c7c7c7 4px,#cacaca 9px,#cdcdcd 15px,#d1d1d1 22px,#d6d6d6 31px,#dbdbdb 42px,#e3e3e3 56px,#ececec 74px,#f9f9f9 98px,#ffffff 128px,#ffffff 175px,#ffffff 175px,#ffffff 179px,#ffffff 184px,#ffffff 190px,#ffffff 197px,#ffffff 206px,#ffffff 217px,#ffffff 231px,#ffffff 249px,#ffffff 273px,#ffffff 303px,#ffffff 350px,#ffffff 350px,#ffffff 354px,#ffffff 359px,#ffffff 365px,#ffffff 372px,#ffffff 381px,#ffffff 392px,#ffffff 406px,#ffffff 424px,#ffffff 448px,#ffffff 478px,#ffffff 523px,#ffffff 523px,#ffffff 527px,#ffffff 532px,#ffffff 538px,#ffffff 545px,#ffffff 554px,#ffffff 565px,#ffffff 579px,#ffffff 597px,#ffffff 621px,#ffffff 651px,#ffffff 697px,#e5e5e5 697px,#e5e5e5 701px,#e5e5e5 706px,#e4e4e4 712px,#e4e4e4 719px,#e3e3e3 728px,#e2e2e2 739px,#e0e0e0 753px,#dedede 771px,#dbdbdb 795px,#d6d6d6 825px,#d5d5d5 826px,#d1d1d1 841px,#cdcdcd 853px,#c8c8c8 863px,#c3c3c3 871px)"></i><i style="top:529px;height:4px;background:linear-gradient(90deg,#c6c6c6 0px,#c8c8c8 4px,#cbcbcb 9px,#cecece 15px,#d2d2d2 22px,#d6d6d6 31px,#dcdcdc 42px,#e3e3e3 56px,#ededed 74px,#f9f9f9 98px,#ffffff 128px,#ffffff 175px,#ffffff 175px,#ffffff 179px,#ffffff 184px,#ffffff 190px,#ffffff 197px,#ffffff 206px,#ffffff 217px,#ffffff 231px,#ffffff 249px,#ffffff 273px,#ffffff 303px,#ffffff 350px,#ffffff 350px,#ffffff 354px,#ffffff 359px,#ffffff 365px,#ffffff 372px,#ffffff 381px,#ffffff 392px,#ffffff 406px,#ffffff 424px,#ffffff 448px,#ffffff 478px,#ffffff 523px,#ffffff 523px,#ffffff 527px,#ffffff 532px,#ffffff 538px,#ffffff 545px,#ffffff 554px,#ffffff 565px,#ffffff 579px,#ffffff 597px,#ffffff 621px,#ffffff 651px,#ffffff 697px,#e6e6e6 697px,#e5e5e5 701px,#e5e5e5 706px,#e5e5e5 712px,#e4e4e4 719px,#e3e3e3 728px,#e2e2e2 739px,#e1e1e1 753px,#dfdfdf 771px,#dbdbdb 795px,#d6d6d6 825px,#d5d5d5 826px,#d1d1d1 841px,#cdcdcd 853px,#c8c8c8 863px,#c3c3c3 871px)"></i><i style="top:533px;height:4px;background:linear-gradient(90deg,#c6c6c6 0px,#c9c9c9 4px,#cbcbcb 9px,#cecece 15px,#d2d2d2 22px,#d7d7d7 31px,#dddddd 42px,#e4e4e4 56px,#ededed 74px,#fafafa 98px,#ffffff 128px,#ffffff 175px,#ffffff 175px,#ffffff 179px,#ffffff 184px,#ffffff 190px,#ffffff 197px,#ffffff 206px,#ffffff 217px,#ffffff 231px,#ffffff 249px,#ffffff 273px,#ffffff 303px,#ffffff 350px,#ffffff 350px,#ffffff 354px,#ffffff 359px,#ffffff 365px,#ffffff 372px,#ffffff 381px,#ffffff 392px,#ffffff 406px,#ffffff 424px,#ffffff 448px,#ffffff 478px,#ffffff 523px,#ffffff 523px,#ffffff 527px,#ffffff 532px,#ffffff 538px,#ffffff 545px,#ffffff 554px,#ffffff 565px,#ffffff 579px,#ffffff 597px,#ffffff 621px,#ffffff 651px,#ffffff 697px,#e6e6e6 697px,#e6e6e6 701px,#e6e6e6 706px,#e5e5e5 712px,#e4e4e4 719px,#e4e4e4 728px,#e2e2e2 739px,#e1e1e1 753px,#dfdfdf 771px,#dbdbdb 795px,#d6d6d6 825px,#d5d5d5 826px,#d1d1d1 841px,#cdcdcd 853px,#c8c8c8 863px,#c3c3c3 871px)"></i><i style="top:537px;height:4px;background:linear-gradient(90deg,#c7c7c7 0px,#c9c9c9 4px,#cccccc 9px,#cfcfcf 15px,#d3d3d3 22px,#d7d7d7 31px,#dddddd 42px,#e5e5e5 56px,#eeeeee 74px,#fbfbfb 98px,#ffffff 128px,#ffffff 175px,#ffffff 175px,#ffffff 179px,#ffffff 184px,#ffffff 190px,#ffffff 197px,#ffffff 206px,#ffffff 217px,#ffffff 231px,#ffffff 249px,#ffffff 273px,#ffffff 303px,#ffffff 350px,#ffffff 350px,#ffffff 354px,#ffffff 359px,#ffffff 365px,#ffffff 372px,#ffffff 381px,#ffffff 392px,#ffffff 406px,#ffffff 424px,#ffffff 448px,#ffffff 478px,#ffffff 523px,#ffffff 523px,#ffffff 527px,#ffffff 532px,#ffffff 538px,#ffffff 545px,#ffffff 554px,#ffffff 565px,#ffffff 579px,#ffffff 597px,#ffffff 621px,#ffffff 651px,#ffffff 697px,#e7e7e7 697px,#e6e6e6 701px,#e6e6e6 706px,#e5e5e5 712px,#e5e5e5 719px,#e4e4e4 728px,#e3e3e3 739px,#e1e1e1 753px,#dfdfdf 771px,#dcdcdc 795px,#d6d6d6 825px,#d6d6d6 826px,#d1d1d1 841px,#cdcdcd 853px,#c8c8c8 863px,#c3c3c3 871px)"></i><i style="top:541px;height:4px;background:linear-gradient(90deg,#c8c8c8 0px,#cacaca 4px,#cccccc 9px,#d0d0d0 15px,#d3d3d3 22px,#d8d8d8 31px,#dedede 42px,#e5e5e5 56px,#efefef 74px,#fbfbfb 98px,#ffffff 128px,#ffffff 175px,#ffffff 175px,#ffffff 179px,#ffffff 184px,#ffffff 190px,#ffffff 197px,#ffffff 206px,#ffffff 217px,#ffffff 231px,#ffffff 249px,#ffffff 273px,#ffffff 303px,#ffffff 350px,#ffffff 350px,#ffffff 354px,#ffffff 359px,#ffffff 365px,#ffffff 372px,#ffffff 381px,#ffffff 392px,#ffffff 406px,#ffffff 424px,#ffffff 448px,#ffffff 478px,#ffffff 523px,#ffffff 523px,#ffffff 527px,#ffffff 532px,#ffffff 538px,#ffffff 545px,#ffffff 554px,#ffffff 565px,#ffffff 579px,#ffffff 597px,#ffffff 621px,#ffffff 651px,#ffffff 697px,#e7e7e7 697px,#e7e7e7 701px,#e6e6e6 706px,#e6e6e6 712px,#e5e5e5 719px,#e4e4e4 728px,#e3e3e3 739px,#e1e1e1 753px,#dfdfdf 771px,#dcdcdc 795px,#d6d6d6 825px,#d6d6d6 826px,#d1d1d1 841px,#cdcdcd 853px,#c8c8c8 863px,#c3c3c3 871px)"></i><i style="top:545px;height:4px;background:linear-gradient(90deg,#c8c8c8 0px,#d8d8d8 29px,#e7e7e7 58px,#f6f6f6 87px,#ffffff 116px,#ffffff 145px,#ffffff 175px,#ffffff 175px,#ffffff 204px,#ffffff 233px,#ffffff 262px,#ffffff 291px,#ffffff 320px,#ffffff 350px,#ffffff 350px,#ffffff 379px,#ffffff 408px,#ffffff 437px,#ffffff 466px,#ffffff 495px,#ffffff 523px,#ffffff 523px,#ffffff 552px,#ffffff 581px,#ffffff 610px,#ffffff 639px,#ffffff 668px,#ffffff 697px,#e8e8e8 697px,#e5e5e5 726px,#e1e1e1 755px,#dedede 784px,#d9d9d9 813px,#d6d6d6 826px,#d1d1d1 841px,#cdcdcd 853px,#c8c8c8 863px,#c2c2c2 871px)"></i><i style="top:549px;height:4px;background:linear-gradient(90deg,#c9c9c9 0px,#d8d8d8 29px,#e8e8e8 58px,#f7f7f7 87px,#ffffff 116px,#ffffff 145px,#ffffff 175px,#ffffff 175px,#ffffff 204px,#ffffff 233px,#ffffff 262px,#ffffff 291px,#ffffff 320px,#ffffff 350px,#ffffff 350px,#ffffff 379px,#ffffff 408px,#ffffff 437px,#ffffff 466px,#ffffff 495px,#ffffff 523px,#ffffff 523px,#ffffff 552px,#ffffff 581px,#ffffff 610px,#ffffff 639px,#ffffff 668px,#ffffff 697px,#e8e8e8 697px,#e5e5e5 726px,#e2e2e2 755px,#dedede 784px,#d9d9d9 813px,#d6d6d6 826px,#d1d1d1 841px,#cdcdcd 853px,#c8c8c8 863px,#c2c2c2 871px)"></i><i style="top:553px;height:4px;background:linear-gradient(90deg,#c9c9c9 0px,#d9d9d9 29px,#e8e8e8 58px,#f8f8f8 87px,#ffffff 116px,#ffffff 145px,#ffffff 175px,#ffffff 175px,#ffffff 204px,#ffffff 233px,#ffffff 262px,#ffffff 291px,#ffffff 320px,#ffffff 350px,#ffffff 350px,#ffffff 379px,#ffffff 408px,#ffffff 437px,#ffffff 466px,#ffffff 495px,#ffffff 523px,#ffffff 523px,#ffffff 552px,#ffffff 581px,#ffffff 610px,#ffffff 639px,#ffffff 668px,#ffffff 697px,#e9e9e9 697px,#e5e5e5 726px,#e2e2e2 755px,#dedede 784px,#d9d9d9 813px,#d6d6d6 826px,#d1d1d1 841px,#cdcdcd 853px,#c8c8c8 863px,#c2c2c2 871px)"></i><i style="top:557px;height:4px;background:linear-gradient(90deg,#cacaca 0px,#d9d9d9 29px,#e9e9e9 58px,#f8f8f8 87px,#ffffff 116px,#ffffff 145px,#ffffff 175px,#ffffff 175px,#ffffff 204px,#ffffff 233px,#ffffff 262px,#ffffff 291px,#ffffff 320px,#ffffff 350px,#ffffff 350px,#ffffff 379px,#ffffff 408px,#ffffff 437px,#ffffff 466px,#ffffff 495px,#ffffff 523px,#ffffff 523px,#ffffff 552px,#ffffff 581px,#ffffff 610px,#ffffff 639px,#ffffff 668px,#ffffff 697px,#e9e9e9 697px,#e6e6e6 726px,#e2e2e2 755px,#dedede 784px,#d9d9d9 813px,#d6d6d6 826px,#d1d1d1 841px,#cdcdcd 853px,#c8c8c8 863px,#c2c2c2 871px)"></i><i style="top:561px;height:4px;background:linear-gradient(90deg,#cacaca 0px,#dadada 29px,#e9e9e9 58px,#f9f9f9 87px,#ffffff 116px,#ffffff 145px,#ffffff 175px,#ffffff 175px,#ffffff 204px,#ffffff 233px,#ffffff 262px,#ffffff 291px,#ffffff 320px,#ffffff 350px,#ffffff 350px,#ffffff 379px,#ffffff 408px,#ffffff 437px,#ffffff 466px,#ffffff 495px,#ffffff 523px,#ffffff 523px,#ffffff 552px,#ffffff 581px,#ffffff 610px,#ffffff 639px,#ffffff 668px,#ffffff 697px,#eaeaea 697px,#e6e6e6 726px,#e2e2e2 755px,#dedede 784px,#d9d9d9 813px,#d6d6d6 826px,#d1d1d1 841px,#cdcdcd 853px,#c7c7c7 863px,#c2c2c2 871px)"></i><i style="top:565px;height:4px;background:linear-gradient(90deg,#cbcbcb 0px,#dadada 29px,#eaeaea 58px,#fafafa 87px,#ffffff 116px,#ffffff 145px,#ffffff 175px,#ffffff 175px,#ffffff 204px,#ffffff 233px,#ffffff 262px,#ffffff 291px,#ffffff 320px,#ffffff 350px,#ffffff 350px,#ffffff 379px,#ffffff 408px,#ffffff 437px,#ffffff 466px,#ffffff 495px,#ffffff 523px,#ffffff 523px,#ffffff 552px,#ffffff 581px,#ffffff 610px,#ffffff 639px,#ffffff 668px,#ffffff 697px,#eaeaea 697px,#e6e6e6 726px,#e3e3e3 755px,#dedede 784px,#d9d9d9 813px,#d6d6d6 826px,#d1d1d1 841px,#cdcdcd 853px,#c7c7c7 863px,#c2c2c2 871px)"></i><i style="top:569px;height:4px;background:linear-gradient(90deg,#cbcbcb 0px,#dbdbdb 29px,#ebebeb 58px,#fafafa 87px,#ffffff 116px,#ffffff 145px,#ffffff 175px,#ffffff 175px,#ffffff 204px,#ffffff 233px,#ffffff 262px,#ffffff 291px,#ffffff 320px,#ffffff 350px,#ffffff 350px,#ffffff 379px,#ffffff 408px,#ffffff 437px,#ffffff 466px,#ffffff 495px,#ffffff 523px,#ffffff 523px,#ffffff 552px,#ffffff 581px,#ffffff 610px,#ffffff 639px,#ffffff 668px,#ffffff 697px,#eaeaea 697px,#e7e7e7 726px,#e3e3e3 755px,#dfdfdf 784px,#d9d9d9 813px,#d6d6d6 826px,#d1d1d1 841px,#cdcdcd 853px,#c7c7c7 863px,#c2c2c2 871px)"></i><i style="top:573px;height:4px;background:linear-gradient(90deg,#cccccc 0px,#dcdcdc 29px,#ebebeb 58px,#fbfbfb 87px,#ffffff 116px,#ffffff 145px,#ffffff 175px,#ffffff 175px,#ffffff 204px,#ffffff 233px,#ffffff 262px,#ffffff 291px,#ffffff 320px,#ffffff 350px,#ffffff 350px,#ffffff 379px,#ffffff 408px,#ffffff 437px,#ffffff 466px,#ffffff 495px,#ffffff 523px,#ffffff 523px,#ffffff 552px,#ffffff 581px,#ffffff 610px,#ffffff 639px,#ffffff 668px,#ffffff 697px,#ebebeb 697px,#e7e7e7 726px,#e3e3e3 755px,#dfdfdf 784px,#d9d9d9 813px,#d6d6d6 826px,#d1d1d1 841px,#cdcdcd 853px,#c7c7c7 863px,#c2c2c2 871px)"></i><i style="top:577px;height:4px;background:linear-gradient(90deg,#cccccc 0px,#dcdcdc 29px,#ececec 58px,#fcfcfc 87px,#ffffff 116px,#ffffff 145px,#ffffff 175px,#ffffff 175px,#ffffff 204px,#ffffff 233px,#ffffff 262px,#ffffff 291px,#ffffff 320px,#ffffff 350px,#ffffff 350px,#ffffff 379px,#ffffff 408px,#ffffff 437px,#ffffff 466px,#ffffff 495px,#ffffff 523px,#ffffff 523px,#ffffff 552px,#ffffff 581px,#ffffff 610px,#ffffff 639px,#ffffff 668px,#ffffff 697px,#ebebeb 697px,#e7e7e7 726px,#e3e3e3 755px,#dfdfdf 784px,#d9d9d9 813px,#d6d6d6 826px,#d1d1d1 841px,#cdcdcd 853px,#c7c7c7 863px,#c2c2c2 871px)"></i><i style="top:581px;height:2px;background:linear-gradient(90deg,#cdcdcd 0px,#dddddd 29px,#ececec 58px,#fcfcfc 87px,#ffffff 116px,#ffffff 145px,#ffffff 175px,#ffffff 175px,#ffffff 204px,#ffffff 233px,#ffffff 262px,#ffffff 291px,#ffffff 320px,#ffffff 350px,#ffffff 350px,#ffffff 379px,#ffffff 408px,#ffffff 437px,#ffffff 466px,#ffffff 495px,#ffffff 523px,#ffffff 523px,#ffffff 552px,#ffffff 581px,#ffffff 610px,#ffffff 639px,#ffffff 668px,#ffffff 697px,#ececec 697px,#e8e8e8 726px,#e4e4e4 755px,#dfdfdf 784px,#d9d9d9 813px,#d6d6d6 826px,#d2d2d2 841px,#cdcdcd 853px,#c7c7c7 863px,#c2c2c2 871px)"></i><i style="top:583px;height:4px;background:linear-gradient(90deg,#bbbbbb 0px,#bebebe 4px,#c2c2c2 9px,#c6c6c6 15px,#cbcbcb 22px,#d1d1d1 31px,#d7d7d7 42px,#dfdfdf 56px,#e8e8e8 74px,#f5f5f5 98px,#ffffff 128px,#ffffff 175px,#efefef 175px,#f7f7f7 179px,#ffffff 184px,#ffffff 190px,#ffffff 197px,#ffffff 206px,#ffffff 217px,#ffffff 231px,#ffffff 249px,#ffffff 273px,#ffffff 303px,#ffffff 350px,#efefef 350px,#f7f7f7 354px,#ffffff 359px,#ffffff 365px,#ffffff 372px,#ffffff 381px,#ffffff 392px,#ffffff 406px,#ffffff 424px,#ffffff 448px,#ffffff 478px,#ffffff 523px,#efefef 523px,#f7f7f7 527px,#ffffff 532px,#ffffff 538px,#ffffff 545px,#ffffff 554px,#ffffff 565px,#ffffff 579px,#ffffff 597px,#ffffff 621px,#ffffff 651px,#ffffff 697px,#cacaca 697px,#cecece 701px,#d2d2d2 706px,#d6d6d6 712px,#d9d9d9 719px,#dcdcdc 728px,#dedede 739px,#dedede 753px,#dddddd 771px,#dbdbdb 795px,#d5d5d5 825px,#d5d5d5 826px,#d0d0d0 841px,#cacaca 853px,#c4c4c4 863px,#bebebe 871px)"></i><i style="top:587px;height:4px;background:linear-gradient(90deg,#bcbcbc 0px,#bfbfbf 4px,#c3c3c3 9px,#c7c7c7 15px,#cccccc 22px,#d1d1d1 31px,#d8d8d8 42px,#dfdfdf 56px,#e9e9e9 74px,#f6f6f6 98px,#ffffff 128px,#ffffff 175px,#f5f5f5 175px,#fcfcfc 179px,#ffffff 184px,#ffffff 190px,#ffffff 197px,#ffffff 206px,#ffffff 217px,#ffffff 231px,#ffffff 249px,#ffffff 273px,#ffffff 303px,#ffffff 350px,#f5f5f5 350px,#fcfcfc 354px,#ffffff 359px,#ffffff 365px,#ffffff 372px,#ffffff 381px,#ffffff 392px,#ffffff 406px,#ffffff 424px,#ffffff 448px,#ffffff 478px,#ffffff 523px,#f5f5f5 523px,#fcfcfc 527px,#ffffff 532px,#ffffff 538px,#ffffff 545px,#ffffff 554px,#ffffff 565px,#ffffff 579px,#ffffff 597px,#ffffff 621px,#ffffff 651px,#ffffff 697px,#cecece 697px,#d1d1d1 701px,#d5d5d5 706px,#d8d8d8 712px,#dbdbdb 719px,#dddddd 728px,#dedede 739px,#dedede 753px,#dddddd 771px,#dadada 795px,#d4d4d4 825px,#d4d4d4 826px,#cfcfcf 841px,#cacaca 853px,#c4c4c4 863px,#bdbdbd 871px)"></i><i style="top:591px;height:4px;background:linear-gradient(90deg,#bebebe 0px,#c1c1c1 4px,#c4c4c4 9px,#c8c8c8 15px,#cccccc 22px,#d2d2d2 31px,#d8d8d8 42px,#e0e0e0 56px,#e9e9e9 74px,#f6f6f6 98px,#ffffff 128px,#ffffff 175px,#fbfbfb 175px,#ffffff 179px,#ffffff 184px,#ffffff 190px,#ffffff 197px,#ffffff 206px,#ffffff 217px,#ffffff 231px,#ffffff 249px,#ffffff 273px,#ffffff 303px,#ffffff 350px,#fbfbfb 350px,#ffffff 354px,#ffffff 359px,#ffffff 365px,#ffffff 372px,#ffffff 381px,#ffffff 392px,#ffffff 406px,#ffffff 424px,#ffffff 448px,#ffffff 478px,#ffffff 523px,#fbfbfb 523px,#ffffff 527px,#ffffff 532px,#ffffff 538px,#ffffff 545px,#ffffff 554px,#ffffff 565px,#ffffff 579px,#ffffff 597px,#ffffff 621px,#ffffff 651px,#ffffff 697px,#d1d1d1 697px,#d4d4d4 701px,#d7d7d7 706px,#dadada 712px,#dcdcdc 719px,#dddddd 728px,#dedede 739px,#dedede 753px,#dddddd 771px,#dadada 795px,#d4d4d4 825px,#d4d4d4 826px,#cfcfcf 841px,#c9c9c9 853px,#c3c3c3 863px,#bdbdbd 871px)"></i><i style="top:595px;height:4px;background:linear-gradient(90deg,#bfbfbf 0px,#c2c2c2 4px,#c5c5c5 9px,#c9c9c9 15px,#cdcdcd 22px,#d2d2d2 31px,#d9d9d9 42px,#e0e0e0 56px,#eaeaea 74px,#f6f6f6 98px,#ffffff 128px,#ffffff 175px,#ffffff 175px,#ffffff 179px,#ffffff 184px,#ffffff 190px,#ffffff 197px,#ffffff 206px,#ffffff 217px,#ffffff 231px,#ffffff 249px,#ffffff 273px,#ffffff 303px,#ffffff 350px,#ffffff 350px,#ffffff 354px,#ffffff 359px,#ffffff 365px,#ffffff 372px,#ffffff 381px,#ffffff 392px,#ffffff 406px,#ffffff 424px,#ffffff 448px,#ffffff 478px,#ffffff 523px,#ffffff 523px,#ffffff 527px,#ffffff 532px,#ffffff 538px,#ffffff 545px,#ffffff 554px,#ffffff 565px,#ffffff 579px,#ffffff 597px,#ffffff 621px,#ffffff 651px,#ffffff 697px,#d4d4d4 697px,#d6d6d6 701px,#d9d9d9 706px,#dbdbdb 712px,#dddddd 719px,#dedede 728px,#dfdfdf 739px,#dedede 753px,#dddddd 771px,#dadada 795px,#d4d4d4 825px,#d3d3d3 826px,#cecece 841px,#c9c9c9 853px,#c3c3c3 863px,#bcbcbc 871px)"></i><i style="top:599px;height:4px;background:linear-gradient(90deg,#c0c0c0 0px,#c3c3c3 4px,#c6c6c6 9px,#cacaca 15px,#cecece 22px,#d3d3d3 31px,#d9d9d9 42px,#e1e1e1 56px,#eaeaea 74px,#f7f7f7 98px,#ffffff 128px,#ffffff 175px,#ffffff 175px,#ffffff 179px,#ffffff 184px,#ffffff 190px,#ffffff 197px,#ffffff 206px,#ffffff 217px,#ffffff 231px,#ffffff 249px,#ffffff 273px,#ffffff 303px,#ffffff 350px,#ffffff 350px,#ffffff 354px,#ffffff 359px,#ffffff 365px,#ffffff 372px,#ffffff 381px,#ffffff 392px,#ffffff 406px,#ffffff 424px,#ffffff 448px,#ffffff 478px,#ffffff 523px,#ffffff 523px,#ffffff 527px,#ffffff 532px,#ffffff 538px,#ffffff 545px,#ffffff 554px,#ffffff 565px,#ffffff 579px,#ffffff 597px,#ffffff 621px,#ffffff 651px,#ffffff 697px,#d6d6d6 697px,#d8d8d8 701px,#dadada 706px,#dcdcdc 712px,#dedede 719px,#dedede 728px,#dfdfdf 739px,#dedede 753px,#dddddd 771px,#dadada 795px,#d3d3d3 825px,#d3d3d3 826px,#cecece 841px,#c8c8c8 853px,#c2c2c2 863px,#bcbcbc 871px)"></i><i style="top:603px;height:4px;background:linear-gradient(90deg,#c1c1c1 0px,#c3c3c3 4px,#c7c7c7 9px,#cacaca 15px,#cfcfcf 22px,#d4d4d4 31px,#dadada 42px,#e1e1e1 56px,#ebebeb 74px,#f7f7f7 98px,#ffffff 128px,#ffffff 175px,#ffffff 175px,#ffffff 179px,#ffffff 184px,#ffffff 190px,#ffffff 197px,#ffffff 206px,#ffffff 217px,#ffffff 231px,#ffffff 249px,#ffffff 273px,#ffffff 303px,#ffffff 350px,#ffffff 350px,#ffffff 354px,#ffffff 359px,#ffffff 365px,#ffffff 372px,#ffffff 381px,#ffffff 392px,#ffffff 406px,#ffffff 424px,#ffffff 448px,#ffffff 478px,#ffffff 523px,#ffffff 523px,#ffffff 527px,#ffffff 532px,#ffffff 538px,#ffffff 545px,#ffffff 554px,#ffffff 565px,#ffffff 579px,#ffffff 597px,#ffffff 621px,#ffffff 651px,#ffffff 697px,#d8d8d8 697px,#dadada 701px,#dcdcdc 706px,#dddddd 712px,#dedede 719px,#dfdfdf 728px,#dfdfdf 739px,#dedede 753px,#dddddd 771px,#d9d9d9 795px,#d3d3d3 825px,#d3d3d3 826px,#cecece 841px,#c8c8c8 853px,#c2c2c2 863px,#bbbbbb 871px)"></i><i style="top:607px;height:4px;background:linear-gradient(90deg,#c2c2c2 0px,#c4c4c4 4px,#c7c7c7 9px,#cbcbcb 15px,#cfcfcf 22px,#d4d4d4 31px,#dadada 42px,#e2e2e2 56px,#ebebeb 74px,#f8f8f8 98px,#ffffff 128px,#ffffff 175px,#ffffff 175px,#ffffff 179px,#ffffff 184px,#ffffff 190px,#ffffff 197px,#ffffff 206px,#ffffff 217px,#ffffff 231px,#ffffff 249px,#ffffff 273px,#ffffff 303px,#ffffff 350px,#ffffff 350px,#ffffff 354px,#ffffff 359px,#ffffff 365px,#ffffff 372px,#ffffff 381px,#ffffff 392px,#ffffff 406px,#ffffff 424px,#ffffff 448px,#ffffff 478px,#ffffff 523px,#ffffff 523px,#ffffff 527px,#ffffff 532px,#ffffff 538px,#ffffff 545px,#ffffff 554px,#ffffff 565px,#ffffff 579px,#ffffff 597px,#ffffff 621px,#ffffff 651px,#ffffff 697px,#dadada 697px,#dbdbdb 701px,#dddddd 706px,#dedede 712px,#dfdfdf 719px,#dfdfdf 728px,#dfdfdf 739px,#dedede 753px,#dcdcdc 771px,#d9d9d9 795px,#d3d3d3 825px,#d2d2d2 826px,#cdcdcd 841px,#c8c8c8 853px,#c1c1c1 863px,#bbbbbb 871px)"></i><i style="top:611px;height:4px;background:linear-gradient(90deg,#c3c3c3 0px,#c5c5c5 4px,#c8c8c8 9px,#cccccc 15px,#d0d0d0 22px,#d5d5d5 31px,#dbdbdb 42px,#e2e2e2 56px,#ececec 74px,#f8f8f8 98px,#ffffff 128px,#ffffff 175px,#ffffff 175px,#ffffff 179px,#ffffff 184px,#ffffff 190px,#ffffff 197px,#ffffff 206px,#ffffff 217px,#ffffff 231px,#ffffff 249px,#ffffff 273px,#ffffff 303px,#ffffff 350px,#ffffff 350px,#ffffff 354px,#ffffff 359px,#ffffff 365px,#ffffff 372px,#ffffff 381px,#ffffff 392px,#ffffff 406px,#ffffff 424px,#ffffff 448px,#ffffff 478px,#ffffff 523px,#ffffff 523px,#ffffff 527px,#ffffff 532px,#ffffff 538px,#ffffff 545px,#ffffff 554px,#ffffff 565px,#ffffff 579px,#ffffff 597px,#ffffff 621px,#ffffff 651px,#ffffff 697px,#dbdbdb 697px,#dcdcdc 701px,#dedede 706px,#dfdfdf 712px,#dfdfdf 719px,#dfdfdf 728px,#dfdfdf 739px,#dedede 753px,#dcdcdc 771px,#d9d9d9 795px,#d2d2d2 825px,#d2d2d2 826px,#cdcdcd 841px,#c7c7c7 853px,#c1c1c1 863px,#bababa 871px)"></i><i style="top:615px;height:4px;background:linear-gradient(90deg,#c3c3c3 0px,#c6c6c6 4px,#c9c9c9 9px,#cccccc 15px,#d0d0d0 22px,#d5d5d5 31px,#dbdbdb 42px,#e3e3e3 56px,#ececec 74px,#f9f9f9 98px,#ffffff 128px,#ffffff 175px,#ffffff 175px,#ffffff 179px,#ffffff 184px,#ffffff 190px,#ffffff 197px,#ffffff 206px,#ffffff 217px,#ffffff 231px,#ffffff 249px,#ffffff 273px,#ffffff 303px,#ffffff 350px,#ffffff 350px,#ffffff 354px,#ffffff 359px,#ffffff 365px,#ffffff 372px,#ffffff 381px,#ffffff 392px,#ffffff 406px,#ffffff 424px,#ffffff 448px,#ffffff 478px,#ffffff 523px,#ffffff 523px,#ffffff 527px,#ffffff 532px,#ffffff 538px,#ffffff 545px,#ffffff 554px,#ffffff 565px,#ffffff 579px,#ffffff 597px,#ffffff 621px,#ffffff 651px,#ffffff 697px,#dddddd 697px,#dedede 701px,#dedede 706px,#dfdfdf 712px,#e0e0e0 719px,#e0e0e0 728px,#dfdfdf 739px,#dedede 753px,#dcdcdc 771px,#d8d8d8 795px,#d2d2d2 825px,#d2d2d2 826px,#cccccc 841px,#c7c7c7 853px,#c0c0c0 863px,#bababa 871px)"></i><i style="top:619px;height:4px;background:linear-gradient(90deg,#c4c4c4 0px,#c7c7c7 4px,#c9c9c9 9px,#cdcdcd 15px,#d1d1d1 22px,#d6d6d6 31px,#dcdcdc 42px,#e3e3e3 56px,#ececec 74px,#f9f9f9 98px,#ffffff 128px,#ffffff 175px,#ffffff 175px,#ffffff 179px,#ffffff 184px,#ffffff 190px,#ffffff 197px,#ffffff 206px,#ffffff 217px,#ffffff 231px,#ffffff 249px,#ffffff 273px,#ffffff 303px,#ffffff 350px,#ffffff 350px,#ffffff 354px,#ffffff 359px,#ffffff 365px,#ffffff 372px,#ffffff 381px,#ffffff 392px,#ffffff 406px,#ffffff 424px,#ffffff 448px,#ffffff 478px,#ffffff 523px,#ffffff 523px,#ffffff 527px,#ffffff 532px,#ffffff 538px,#ffffff 545px,#ffffff 554px,#ffffff 565px,#ffffff 579px,#ffffff 597px,#ffffff 621px,#ffffff 651px,#ffffff 697px,#dedede 697px,#dedede 701px,#dfdfdf 706px,#e0e0e0 712px,#e0e0e0 719px,#e0e0e0 728px,#dfdfdf 739px,#dedede 753px,#dcdcdc 771px,#d8d8d8 795px,#d1d1d1 825px,#d1d1d1 826px,#cccccc 841px,#c6c6c6 853px,#c0c0c0 863px,#b9b9b9 871px)"></i><i style="top:623px;height:4px;background:linear-gradient(90deg,#c5c5c5 0px,#c7c7c7 4px,#cacaca 9px,#cecece 15px,#d1d1d1 22px,#d6d6d6 31px,#dcdcdc 42px,#e4e4e4 56px,#ededed 74px,#f9f9f9 98px,#ffffff 128px,#ffffff 175px,#ffffff 175px,#ffffff 179px,#ffffff 184px,#ffffff 190px,#ffffff 197px,#ffffff 206px,#ffffff 217px,#ffffff 231px,#ffffff 249px,#ffffff 273px,#ffffff 303px,#ffffff 350px,#ffffff 350px,#ffffff 354px,#ffffff 359px,#ffffff 365px,#ffffff 372px,#ffffff 381px,#ffffff 392px,#ffffff 406px,#ffffff 424px,#ffffff 448px,#ffffff 478px,#ffffff 523px,#ffffff 523px,#ffffff 527px,#ffffff 532px,#ffffff 538px,#ffffff 545px,#ffffff 554px,#ffffff 565px,#ffffff 579px,#ffffff 597px,#ffffff 621px,#ffffff 651px,#ffffff 697px,#dfdfdf 697px,#dfdfdf 701px,#e0e0e0 706px,#e0e0e0 712px,#e0e0e0 719px,#e0e0e0 728px,#dfdfdf 739px,#dedede 753px,#dcdcdc 771px,#d8d8d8 795px,#d1d1d1 825px,#d1d1d1 826px,#cccccc 841px,#c6c6c6 853px,#bfbfbf 863px,#b9b9b9 871px)"></i><i style="top:627px;height:4px;background:linear-gradient(90deg,#c6c6c6 0px,#c8c8c8 4px,#cbcbcb 9px,#cecece 15px,#d2d2d2 22px,#d7d7d7 31px,#dddddd 42px,#e4e4e4 56px,#ededed 74px,#fafafa 98px,#ffffff 128px,#ffffff 175px,#ffffff 175px,#ffffff 179px,#ffffff 184px,#ffffff 190px,#ffffff 197px,#ffffff 206px,#ffffff 217px,#ffffff 231px,#ffffff 249px,#ffffff 273px,#ffffff 303px,#ffffff 350px,#ffffff 350px,#ffffff 354px,#ffffff 359px,#ffffff 365px,#ffffff 372px,#ffffff 381px,#ffffff 392px,#ffffff 406px,#ffffff 424px,#ffffff 448px,#ffffff 478px,#ffffff 523px,#ffffff 523px,#ffffff 527px,#ffffff 532px,#ffffff 538px,#ffffff 545px,#ffffff 554px,#ffffff 565px,#ffffff 579px,#ffffff 597px,#ffffff 621px,#ffffff 651px,#ffffff 697px,#dfdfdf 697px,#e0e0e0 701px,#e0e0e0 706px,#e0e0e0 712px,#e0e0e0 719px,#e0e0e0 728px,#dfdfdf 739px,#dedede 753px,#dbdbdb 771px,#d8d8d8 795px,#d1d1d1 825px,#d0d0d0 826px,#cbcbcb 841px,#c5c5c5 853px,#bfbfbf 863px,#b8b8b8 871px)"></i><i style="top:631px;height:4px;background:linear-gradient(90deg,#c6c6c6 0px,#c8c8c8 4px,#cbcbcb 9px,#cfcfcf 15px,#d2d2d2 22px,#d7d7d7 31px,#dddddd 42px,#e4e4e4 56px,#eeeeee 74px,#fafafa 98px,#ffffff 128px,#ffffff 175px,#ffffff 175px,#ffffff 179px,#ffffff 184px,#ffffff 190px,#ffffff 197px,#ffffff 206px,#ffffff 217px,#ffffff 231px,#ffffff 249px,#ffffff 273px,#ffffff 303px,#ffffff 350px,#ffffff 350px,#ffffff 354px,#ffffff 359px,#ffffff 365px,#ffffff 372px,#ffffff 381px,#ffffff 392px,#ffffff 406px,#ffffff 424px,#ffffff 448px,#ffffff 478px,#ffffff 523px,#ffffff 523px,#ffffff 527px,#ffffff 532px,#ffffff 538px,#ffffff 545px,#ffffff 554px,#ffffff 565px,#ffffff 579px,#ffffff 597px,#ffffff 621px,#ffffff 651px,#ffffff 697px,#e0e0e0 697px,#e1e1e1 701px,#e1e1e1 706px,#e1e1e1 712px,#e1e1e1 719px,#e0e0e0 728px,#dfdfdf 739px,#dedede 753px,#dbdbdb 771px,#d7d7d7 795px,#d0d0d0 825px,#d0d0d0 826px,#cbcbcb 841px,#c5c5c5 853px,#bebebe 863px,#b8b8b8 871px)"></i><i style="top:635px;height:4px;background:linear-gradient(90deg,#c7c7c7 0px,#c9c9c9 4px,#cccccc 9px,#cfcfcf 15px,#d3d3d3 22px,#d8d8d8 31px,#dedede 42px,#e5e5e5 56px,#eeeeee 74px,#fbfbfb 98px,#ffffff 128px,#ffffff 175px,#ffffff 175px,#ffffff 179px,#ffffff 184px,#ffffff 190px,#ffffff 197px,#ffffff 206px,#ffffff 217px,#ffffff 231px,#ffffff 249px,#ffffff 273px,#ffffff 303px,#ffffff 350px,#ffffff 350px,#ffffff 354px,#ffffff 359px,#ffffff 365px,#ffffff 372px,#ffffff 381px,#ffffff 392px,#ffffff 406px,#ffffff 424px,#ffffff 448px,#ffffff 478px,#ffffff 523px,#ffffff 523px,#ffffff 527px,#ffffff 532px,#ffffff 538px,#ffffff 545px,#ffffff 554px,#ffffff 565px,#ffffff 579px,#ffffff 597px,#ffffff 621px,#ffffff 651px,#ffffff 697px,#e1e1e1 697px,#e1e1e1 701px,#e1e1e1 706px,#e1e1e1 712px,#e1e1e1 719px,#e0e0e0 728px,#dfdfdf 739px,#dddddd 753px,#dbdbdb 771px,#d7d7d7 795px,#d0d0d0 825px,#d0d0d0 826px,#cacaca 841px,#c4c4c4 853px,#bebebe 863px,#b7b7b7 871px)"></i><i style="top:639px;height:4px;background:linear-gradient(90deg,#c7c7c7 0px,#cacaca 4px,#cccccc 9px,#d0d0d0 15px,#d3d3d3 22px,#d8d8d8 31px,#dedede 42px,#e5e5e5 56px,#efefef 74px,#fbfbfb 98px,#ffffff 128px,#ffffff 175px,#ffffff 175px,#ffffff 179px,#ffffff 184px,#ffffff 190px,#ffffff 197px,#ffffff 206px,#ffffff 217px,#ffffff 231px,#ffffff 249px,#ffffff 273px,#ffffff 303px,#ffffff 350px,#ffffff 350px,#ffffff 354px,#ffffff 359px,#ffffff 365px,#ffffff 372px,#ffffff 381px,#ffffff 392px,#ffffff 406px,#ffffff 424px,#ffffff 448px,#ffffff 478px,#ffffff 523px,#ffffff 523px,#ffffff 527px,#ffffff 532px,#ffffff 538px,#ffffff 545px,#ffffff 554px,#ffffff 565px,#ffffff 579px,#ffffff 597px,#ffffff 621px,#ffffff 651px,#ffffff 697px,#e1e1e1 697px,#e1e1e1 701px,#e1e1e1 706px,#e1e1e1 712px,#e1e1e1 719px,#e0e0e0 728px,#dfdfdf 739px,#dddddd 753px,#dbdbdb 771px,#d7d7d7 795px,#d0d0d0 825px,#cfcfcf 826px,#cacaca 841px,#c4c4c4 853px,#bdbdbd 863px,#b7b7b7 871px)"></i><i style="top:643px;height:4px;background:linear-gradient(90deg,#c8c8c8 0px,#cacaca 4px,#cdcdcd 9px,#d0d0d0 15px,#d4d4d4 22px,#d9d9d9 31px,#dedede 42px,#e6e6e6 56px,#efefef 74px,#fcfcfc 98px,#ffffff 128px,#ffffff 175px,#ffffff 175px,#ffffff 179px,#ffffff 184px,#ffffff 190px,#ffffff 197px,#ffffff 206px,#ffffff 217px,#ffffff 231px,#ffffff 249px,#ffffff 273px,#ffffff 303px,#ffffff 350px,#ffffff 350px,#ffffff 354px,#ffffff 359px,#ffffff 365px,#ffffff 372px,#ffffff 381px,#ffffff 392px,#ffffff 406px,#ffffff 424px,#ffffff 448px,#ffffff 478px,#ffffff 523px,#ffffff 523px,#ffffff 527px,#ffffff 532px,#ffffff 538px,#ffffff 545px,#ffffff 554px,#ffffff 565px,#ffffff 579px,#ffffff 597px,#ffffff 621px,#ffffff 651px,#ffffff 697px,#e2e2e2 697px,#e2e2e2 701px,#e2e2e2 706px,#e1e1e1 712px,#e1e1e1 719px,#e0e0e0 728px,#dfdfdf 739px,#dddddd 753px,#dadada 771px,#d6d6d6 795px,#cfcfcf 825px,#cfcfcf 826px,#c9c9c9 841px,#c3c3c3 853px,#bdbdbd 863px,#b6b6b6 871px)"></i><i style="top:647px;height:4px;background:linear-gradient(90deg,#c9c9c9 0px,#cbcbcb 4px,#cdcdcd 9px,#d1d1d1 15px,#d4d4d4 22px,#d9d9d9 31px,#dfdfdf 42px,#e6e6e6 56px,#f0f0f0 74px,#fcfcfc 98px,#ffffff 128px,#ffffff 175px,#ffffff 175px,#ffffff 179px,#ffffff 184px,#ffffff 190px,#ffffff 197px,#ffffff 206px,#ffffff 217px,#ffffff 231px,#ffffff 249px,#ffffff 273px,#ffffff 303px,#ffffff 350px,#ffffff 350px,#ffffff 354px,#ffffff 359px,#ffffff 365px,#ffffff 372px,#ffffff 381px,#ffffff 392px,#ffffff 406px,#ffffff 424px,#ffffff 448px,#ffffff 478px,#ffffff 523px,#ffffff 523px,#ffffff 527px,#ffffff 532px,#ffffff 538px,#ffffff 545px,#ffffff 554px,#ffffff 565px,#ffffff 579px,#ffffff 597px,#ffffff 621px,#ffffff 651px,#ffffff 697px,#e2e2e2 697px,#e2e2e2 701px,#e2e2e2 706px,#e2e2e2 712px,#e1e1e1 719px,#e0e0e0 728px,#dfdfdf 739px,#dddddd 753px,#dadada 771px,#d6d6d6 795px,#cfcfcf 825px,#cecece 826px,#c9c9c9 841px,#c3c3c3 853px,#bcbcbc 863px,#b6b6b6 871px)"></i><i style="top:651px;height:4px;background:linear-gradient(90deg,#c9c9c9 0px,#cbcbcb 4px,#cecece 9px,#d1d1d1 15px,#d5d5d5 22px,#dadada 31px,#dfdfdf 42px,#e7e7e7 56px,#f0f0f0 74px,#fcfcfc 98px,#ffffff 128px,#ffffff 175px,#ffffff 175px,#ffffff 179px,#ffffff 184px,#ffffff 190px,#ffffff 197px,#ffffff 206px,#ffffff 217px,#ffffff 231px,#ffffff 249px,#ffffff 273px,#ffffff 303px,#ffffff 350px,#ffffff 350px,#ffffff 354px,#ffffff 359px,#ffffff 365px,#ffffff 372px,#ffffff 381px,#ffffff 392px,#ffffff 406px,#ffffff 424px,#ffffff 448px,#ffffff 478px,#ffffff 523px,#ffffff 523px,#ffffff 527px,#ffffff 532px,#ffffff 538px,#ffffff 545px,#ffffff 554px,#ffffff 565px,#ffffff 579px,#ffffff 597px,#ffffff 621px,#ffffff 651px,#ffffff 697px,#e2e2e2 697px,#e2e2e2 701px,#e2e2e2 706px,#e2e2e2 712px,#e1e1e1 719px,#e0e0e0 728px,#dfdfdf 739px,#dddddd 753px,#dadada 771px,#d6d6d6 795px,#cecece 825px,#cecece 826px,#c9c9c9 841px,#c3c3c3 853px,#bcbcbc 863px,#b5b5b5 871px)"></i><i style="top:655px;height:4px;background:linear-gradient(90deg,#cacaca 0px,#cccccc 4px,#cecece 9px,#d2d2d2 15px,#d5d5d5 22px,#dadada 31px,#e0e0e0 42px,#e7e7e7 56px,#f0f0f0 74px,#fdfdfd 98px,#ffffff 128px,#ffffff 175px,#ffffff 175px,#ffffff 179px,#ffffff 184px,#ffffff 190px,#ffffff 197px,#ffffff 206px,#ffffff 217px,#ffffff 231px,#ffffff 249px,#ffffff 273px,#ffffff 303px,#ffffff 350px,#ffffff 350px,#ffffff 354px,#ffffff 359px,#ffffff 365px,#ffffff 372px,#ffffff 381px,#ffffff 392px,#ffffff 406px,#ffffff 424px,#ffffff 448px,#ffffff 478px,#ffffff 523px,#ffffff 523px,#ffffff 527px,#ffffff 532px,#ffffff 538px,#ffffff 545px,#ffffff 554px,#ffffff 565px,#ffffff 579px,#ffffff 597px,#ffffff 621px,#ffffff 651px,#ffffff 697px,#e3e3e3 697px,#e3e3e3 701px,#e2e2e2 706px,#e2e2e2 712px,#e1e1e1 719px,#e0e0e0 728px,#dfdfdf 739px,#dddddd 753px,#dadada 771px,#d5d5d5 795px,#cecece 825px,#cecece 826px,#c8c8c8 841px,#c2c2c2 853px,#bcbcbc 863px,#b5b5b5 871px)"></i><i style="top:659px;height:4px;background:linear-gradient(90deg,#cacaca 0px,#cccccc 4px,#cfcfcf 9px,#d2d2d2 15px,#d6d6d6 22px,#dbdbdb 31px,#e0e0e0 42px,#e8e8e8 56px,#f1f1f1 74px,#fdfdfd 98px,#ffffff 128px,#ffffff 175px,#ffffff 175px,#ffffff 179px,#ffffff 184px,#ffffff 190px,#ffffff 197px,#ffffff 206px,#ffffff 217px,#ffffff 231px,#ffffff 249px,#ffffff 273px,#ffffff 303px,#ffffff 350px,#ffffff 350px,#ffffff 354px,#ffffff 359px,#ffffff 365px,#ffffff 372px,#ffffff 381px,#ffffff 392px,#ffffff 406px,#ffffff 424px,#ffffff 448px,#ffffff 478px,#ffffff 523px,#ffffff 523px,#ffffff 527px,#ffffff 532px,#ffffff 538px,#ffffff 545px,#ffffff 554px,#ffffff 565px,#ffffff 579px,#ffffff 597px,#ffffff 621px,#ffffff 651px,#ffffff 697px,#e3e3e3 697px,#e3e3e3 701px,#e2e2e2 706px,#e2e2e2 712px,#e1e1e1 719px,#e0e0e0 728px,#dedede 739px,#dcdcdc 753px,#dadada 771px,#d5d5d5 795px,#cecece 825px,#cdcdcd 826px,#c8c8c8 841px,#c2c2c2 853px,#bbbbbb 863px,#b4b4b4 871px)"></i><i style="top:663px;height:4px;background:linear-gradient(90deg,#cbcbcb 0px,#cdcdcd 4px,#cfcfcf 9px,#d3d3d3 15px,#d6d6d6 22px,#dbdbdb 31px,#e1e1e1 42px,#e8e8e8 56px,#f1f1f1 74px,#fefefe 98px,#ffffff 128px,#ffffff 175px,#ffffff 175px,#ffffff 179px,#ffffff 184px,#ffffff 190px,#ffffff 197px,#ffffff 206px,#ffffff 217px,#ffffff 231px,#ffffff 249px,#ffffff 273px,#ffffff 303px,#ffffff 350px,#ffffff 350px,#ffffff 354px,#ffffff 359px,#ffffff 365px,#ffffff 372px,#ffffff 381px,#ffffff 392px,#ffffff 406px,#ffffff 424px,#ffffff 448px,#ffffff 478px,#ffffff 523px,#ffffff 523px,#ffffff 527px,#ffffff 532px,#ffffff 538px,#ffffff 545px,#ffffff 554px,#ffffff 565px,#ffffff 579px,#ffffff 597px,#ffffff 621px,#ffffff 651px,#ffffff 697px,#e3e3e3 697px,#e3e3e3 701px,#e2e2e2 706px,#e2e2e2 712px,#e1e1e1 719px,#e0e0e0 728px,#dedede 739px,#dcdcdc 753px,#d9d9d9 771px,#d5d5d5 795px,#cdcdcd 825px,#cdcdcd 826px,#c7c7c7 841px,#c1c1c1 853px,#bbbbbb 863px,#b4b4b4 871px)"></i><i style="top:667px;height:4px;background:linear-gradient(90deg,#cbcbcb 0px,#cdcdcd 4px,#d0d0d0 9px,#d3d3d3 15px,#d7d7d7 22px,#dbdbdb 31px,#e1e1e1 42px,#e8e8e8 56px,#f2f2f2 74px,#fefefe 98px,#ffffff 128px,#ffffff 175px,#ffffff 175px,#ffffff 179px,#ffffff 184px,#ffffff 190px,#ffffff 197px,#ffffff 206px,#ffffff 217px,#ffffff 231px,#ffffff 249px,#ffffff 273px,#ffffff 303px,#ffffff 350px,#ffffff 350px,#ffffff 354px,#ffffff 359px,#ffffff 365px,#ffffff 372px,#ffffff 381px,#ffffff 392px,#ffffff 406px,#ffffff 424px,#ffffff 448px,#ffffff 478px,#ffffff 523px,#ffffff 523px,#ffffff 527px,#ffffff 532px,#ffffff 538px,#ffffff 545px,#ffffff 554px,#ffffff 565px,#ffffff 579px,#ffffff 597px,#ffffff 621px,#ffffff 651px,#ffffff 697px,#e3e3e3 697px,#e3e3e3 701px,#e2e2e2 706px,#e2e2e2 712px,#e1e1e1 719px,#e0e0e0 728px,#dedede 739px,#dcdcdc 753px,#d9d9d9 771px,#d5d5d5 795px,#cdcdcd 825px,#cdcdcd 826px,#c7c7c7 841px,#c1c1c1 853px,#bababa 863px,#b3b3b3 871px)"></i><i style="top:671px;height:4px;background:linear-gradient(90deg,#cccccc 0px,#cecece 4px,#d0d0d0 9px,#d4d4d4 15px,#d7d7d7 22px,#dcdcdc 31px,#e2e2e2 42px,#e9e9e9 56px,#f2f2f2 74px,#ffffff 98px,#ffffff 128px,#ffffff 175px,#ffffff 175px,#ffffff 179px,#ffffff 184px,#ffffff 190px,#ffffff 197px,#ffffff 206px,#ffffff 217px,#ffffff 231px,#ffffff 249px,#ffffff 273px,#ffffff 303px,#ffffff 350px,#ffffff 350px,#ffffff 354px,#ffffff 359px,#ffffff 365px,#ffffff 372px,#ffffff 381px,#ffffff 392px,#ffffff 406px,#ffffff 424px,#ffffff 448px,#ffffff 478px,#ffffff 523px,#ffffff 523px,#ffffff 527px,#ffffff 532px,#ffffff 538px,#ffffff 545px,#ffffff 554px,#ffffff 565px,#ffffff 579px,#ffffff 597px,#ffffff 621px,#ffffff 651px,#ffffff 697px,#e3e3e3 697px,#e3e3e3 701px,#e3e3e3 706px,#e2e2e2 712px,#e1e1e1 719px,#e0e0e0 728px,#dedede 739px,#dcdcdc 753px,#d9d9d9 771px,#d4d4d4 795px,#cccccc 825px,#cccccc 826px,#c6c6c6 841px,#c0c0c0 853px,#bababa 863px,#b3b3b3 871px)"></i><i style="top:675px;height:4px;background:linear-gradient(90deg,#cccccc 0px,#cecece 4px,#d1d1d1 9px,#d4d4d4 15px,#d8d8d8 22px,#dcdcdc 31px,#e2e2e2 42px,#e9e9e9 56px,#f3f3f3 74px,#ffffff 98px,#ffffff 128px,#ffffff 175px,#ffffff 175px,#ffffff 179px,#ffffff 184px,#ffffff 190px,#ffffff 197px,#ffffff 206px,#ffffff 217px,#ffffff 231px,#ffffff 249px,#ffffff 273px,#ffffff 303px,#ffffff 350px,#ffffff 350px,#ffffff 354px,#ffffff 359px,#ffffff 365px,#ffffff 372px,#ffffff 381px,#ffffff 392px,#ffffff 406px,#ffffff 424px,#ffffff 448px,#ffffff 478px,#ffffff 523px,#ffffff 523px,#ffffff 527px,#ffffff 532px,#ffffff 538px,#ffffff 545px,#ffffff 554px,#ffffff 565px,#ffffff 579px,#ffffff 597px,#ffffff 621px,#ffffff 651px,#ffffff 697px,#e4e4e4 697px,#e3e3e3 701px,#e3e3e3 706px,#e2e2e2 712px,#e1e1e1 719px,#e0e0e0 728px,#dedede 739px,#dcdcdc 753px,#d9d9d9 771px,#d4d4d4 795px,#cccccc 825px,#cccccc 826px,#c6c6c6 841px,#c0c0c0 853px,#b9b9b9 863px,#b2b2b2 871px)"></i><i style="top:679px;height:4px;background:linear-gradient(90deg,#cdcdcd 0px,#cfcfcf 4px,#d1d1d1 9px,#d4d4d4 15px,#d8d8d8 22px,#dddddd 31px,#e2e2e2 42px,#eaeaea 56px,#f3f3f3 74px,#ffffff 98px,#ffffff 128px,#ffffff 175px,#ffffff 175px,#ffffff 179px,#ffffff 184px,#ffffff 190px,#ffffff 197px,#ffffff 206px,#ffffff 217px,#ffffff 231px,#ffffff 249px,#ffffff 273px,#ffffff 303px,#ffffff 350px,#ffffff 350px,#ffffff 354px,#ffffff 359px,#ffffff 365px,#ffffff 372px,#ffffff 381px,#ffffff 392px,#ffffff 406px,#ffffff 424px,#ffffff 448px,#ffffff 478px,#ffffff 523px,#ffffff 523px,#ffffff 527px,#ffffff 532px,#ffffff 538px,#ffffff 545px,#ffffff 554px,#ffffff 565px,#ffffff 579px,#ffffff 597px,#ffffff 621px,#ffffff 651px,#ffffff 697px,#e4e4e4 697px,#e3e3e3 701px,#e3e3e3 706px,#e2e2e2 712px,#e1e1e1 719px,#dfdfdf 728px,#dedede 739px,#dbdbdb 753px,#d8d8d8 771px,#d4d4d4 795px,#cccccc 825px,#cbcbcb 826px,#c6c6c6 841px,#bfbfbf 853px,#b9b9b9 863px,#b2b2b2 871px)"></i><i style="top:683px;height:4px;background:linear-gradient(90deg,#cdcdcd 0px,#cfcfcf 4px,#d2d2d2 9px,#d5d5d5 15px,#d9d9d9 22px,#dddddd 31px,#e3e3e3 42px,#eaeaea 56px,#f3f3f3 74px,#ffffff 98px,#ffffff 128px,#ffffff 175px,#ffffff 175px,#ffffff 179px,#ffffff 184px,#ffffff 190px,#ffffff 197px,#ffffff 206px,#ffffff 217px,#ffffff 231px,#ffffff 249px,#ffffff 273px,#ffffff 303px,#ffffff 350px,#ffffff 350px,#ffffff 354px,#ffffff 359px,#ffffff 365px,#ffffff 372px,#ffffff 381px,#ffffff 392px,#ffffff 406px,#ffffff 424px,#ffffff 448px,#ffffff 478px,#ffffff 523px,#ffffff 523px,#ffffff 527px,#ffffff 532px,#ffffff 538px,#ffffff 545px,#ffffff 554px,#ffffff 565px,#ffffff 579px,#ffffff 597px,#ffffff 621px,#ffffff 651px,#ffffff 697px,#e4e4e4 697px,#e3e3e3 701px,#e3e3e3 706px,#e2e2e2 712px,#e1e1e1 719px,#dfdfdf 728px,#dedede 739px,#dbdbdb 753px,#d8d8d8 771px,#d3d3d3 795px,#cbcbcb 825px,#cbcbcb 826px,#c5c5c5 841px,#bfbfbf 853px,#b8b8b8 863px,#b1b1b1 871px)"></i><i style="top:687px;height:4px;background:linear-gradient(90deg,#cecece 0px,#d0d0d0 4px,#d2d2d2 9px,#d5d5d5 15px,#d9d9d9 22px,#dedede 31px,#e3e3e3 42px,#ebebeb 56px,#f4f4f4 74px,#ffffff 98px,#ffffff 128px,#ffffff 175px,#ffffff 175px,#ffffff 179px,#ffffff 184px,#ffffff 190px,#ffffff 197px,#ffffff 206px,#ffffff 217px,#ffffff 231px,#ffffff 249px,#ffffff 273px,#ffffff 303px,#ffffff 350px,#ffffff 350px,#ffffff 354px,#ffffff 359px,#ffffff 365px,#ffffff 372px,#ffffff 381px,#ffffff 392px,#ffffff 406px,#ffffff 424px,#ffffff 448px,#ffffff 478px,#ffffff 523px,#ffffff 523px,#ffffff 527px,#ffffff 532px,#ffffff 538px,#ffffff 545px,#ffffff 554px,#ffffff 565px,#ffffff 579px,#ffffff 597px,#ffffff 621px,#ffffff 651px,#ffffff 697px,#e4e4e4 697px,#e3e3e3 701px,#e3e3e3 706px,#e2e2e2 712px,#e1e1e1 719px,#dfdfdf 728px,#dddddd 739px,#dbdbdb 753px,#d8d8d8 771px,#d3d3d3 795px,#cbcbcb 825px,#cbcbcb 826px,#c5c5c5 841px,#bfbfbf 853px,#b8b8b8 863px,#b1b1b1 871px)"></i><i style="top:691px;height:4px;background:linear-gradient(90deg,#cecece 0px,#dddddd 29px,#ececec 58px,#fbfbfb 87px,#ffffff 116px,#ffffff 145px,#ffffff 175px,#ffffff 175px,#ffffff 204px,#ffffff 233px,#ffffff 262px,#ffffff 291px,#ffffff 320px,#ffffff 350px,#ffffff 350px,#ffffff 379px,#ffffff 408px,#ffffff 437px,#ffffff 466px,#ffffff 495px,#ffffff 523px,#ffffff 523px,#ffffff 552px,#ffffff 581px,#ffffff 610px,#ffffff 639px,#ffffff 668px,#ffffff 697px,#e4e4e4 697px,#dfdfdf 726px,#dbdbdb 755px,#d5d5d5 784px,#cecece 813px,#cacaca 826px,#c4c4c4 841px,#bebebe 853px,#b7b7b7 863px,#b0b0b0 871px)"></i><i style="top:695px;height:4px;background:linear-gradient(90deg,#cecece 0px,#dddddd 29px,#ececec 58px,#fbfbfb 87px,#ffffff 116px,#ffffff 145px,#ffffff 175px,#ffffff 175px,#ffffff 204px,#ffffff 233px,#ffffff 262px,#ffffff 291px,#ffffff 320px,#ffffff 350px,#ffffff 350px,#ffffff 379px,#ffffff 408px,#ffffff 437px,#ffffff 466px,#ffffff 495px,#ffffff 523px,#ffffff 523px,#ffffff 552px,#ffffff 581px,#ffffff 610px,#ffffff 639px,#ffffff 668px,#ffffff 697px,#e4e4e4 697px,#dfdfdf 726px,#dadada 755px,#d5d5d5 784px,#cecece 813px,#cacaca 826px,#c4c4c4 841px,#bebebe 853px,#b7b7b7 863px,#b0b0b0 871px)"></i><i style="top:699px;height:4px;background:linear-gradient(90deg,#cfcfcf 0px,#dedede 29px,#ededed 58px,#fcfcfc 87px,#ffffff 116px,#ffffff 145px,#ffffff 175px,#ffffff 175px,#ffffff 204px,#ffffff 233px,#ffffff 262px,#ffffff 291px,#ffffff 320px,#ffffff 350px,#ffffff 350px,#ffffff 379px,#ffffff 408px,#ffffff 437px,#ffffff 466px,#ffffff 495px,#ffffff 523px,#ffffff 523px,#ffffff 552px,#ffffff 581px,#ffffff 610px,#ffffff 639px,#ffffff 668px,#ffffff 697px,#e4e4e4 697px,#dfdfdf 726px,#dadada 755px,#d5d5d5 784px,#cecece 813px,#cacaca 826px,#c4c4c4 841px,#bdbdbd 853px,#b6b6b6 863px,#afafaf 871px)"></i><i style="top:703px;height:4px;background:linear-gradient(90deg,#cfcfcf 0px,#dedede 29px,#ededed 58px,#fcfcfc 87px,#ffffff 116px,#ffffff 145px,#ffffff 175px,#ffffff 175px,#ffffff 204px,#ffffff 233px,#ffffff 262px,#ffffff 291px,#ffffff 320px,#ffffff 350px,#ffffff 350px,#ffffff 379px,#ffffff 408px,#ffffff 437px,#ffffff 466px,#ffffff 495px,#ffffff 523px,#ffffff 523px,#ffffff 552px,#ffffff 581px,#ffffff 610px,#ffffff 639px,#ffffff 668px,#ffffff 697px,#e4e4e4 697px,#dfdfdf 726px,#dadada 755px,#d4d4d4 784px,#cdcdcd 813px,#c9c9c9 826px,#c3c3c3 841px,#bdbdbd 853px,#b6b6b6 863px,#afafaf 871px)"></i><i style="top:707px;height:4px;background:linear-gradient(90deg,#d0d0d0 0px,#dfdfdf 29px,#eeeeee 58px,#fdfdfd 87px,#ffffff 116px,#ffffff 145px,#ffffff 175px,#ffffff 175px,#ffffff 204px,#ffffff 233px,#ffffff 262px,#ffffff 291px,#ffffff 320px,#ffffff 350px,#ffffff 350px,#ffffff 379px,#ffffff 408px,#ffffff 437px,#ffffff 466px,#ffffff 495px,#ffffff 523px,#ffffff 523px,#ffffff 552px,#ffffff 581px,#ffffff 610px,#ffffff 639px,#ffffff 668px,#ffffff 697px,#e4e4e4 697px,#dfdfdf 726px,#dadada 755px,#d4d4d4 784px,#cdcdcd 813px,#c9c9c9 826px,#c3c3c3 841px,#bcbcbc 853px,#b5b5b5 863px,#aeaeae 871px)"></i><i style="top:711px;height:4px;background:linear-gradient(90deg,#d0d0d0 0px,#dfdfdf 29px,#eeeeee 58px,#fdfdfd 87px,#ffffff 116px,#ffffff 145px,#ffffff 175px,#ffffff 175px,#ffffff 204px,#ffffff 233px,#ffffff 262px,#ffffff 291px,#ffffff 320px,#ffffff 350px,#ffffff 350px,#ffffff 379px,#ffffff 408px,#ffffff 437px,#ffffff 466px,#ffffff 495px,#ffffff 523px,#ffffff 523px,#ffffff 552px,#ffffff 581px,#ffffff 610px,#ffffff 639px,#ffffff 668px,#ffffff 697px,#e4e4e4 697px,#dfdfdf 726px,#dadada 755px,#d4d4d4 784px,#cdcdcd 813px,#c8c8c8 826px,#c2c2c2 841px,#bcbcbc 853px,#b5b5b5 863px,#aeaeae 871px)"></i><i style="top:715px;height:4px;background:linear-gradient(90deg,#d1d1d1 0px,#e0e0e0 29px,#efefef 58px,#fefefe 87px,#ffffff 116px,#ffffff 145px,#ffffff 175px,#ffffff 175px,#ffffff 204px,#ffffff 233px,#ffffff 262px,#ffffff 291px,#ffffff 320px,#ffffff 350px,#ffffff 350px,#ffffff 379px,#ffffff 408px,#ffffff 437px,#ffffff 466px,#ffffff 495px,#ffffff 523px,#ffffff 523px,#ffffff 552px,#ffffff 581px,#ffffff 610px,#ffffff 639px,#ffffff 668px,#ffffff 697px,#e4e4e4 697px,#dfdfdf 726px,#d9d9d9 755px,#d3d3d3 784px,#cccccc 813px,#c8c8c8 826px,#c2c2c2 841px,#bbbbbb 853px,#b4b4b4 863px,#adadad 871px)"></i><i style="top:719px;height:4px;background:linear-gradient(90deg,#d1d1d1 0px,#e0e0e0 29px,#efefef 58px,#fefefe 87px,#ffffff 116px,#ffffff 145px,#ffffff 175px,#ffffff 175px,#ffffff 204px,#ffffff 233px,#ffffff 262px,#ffffff 291px,#ffffff 320px,#ffffff 350px,#ffffff 350px,#ffffff 379px,#ffffff 408px,#ffffff 437px,#ffffff 466px,#ffffff 495px,#ffffff 523px,#ffffff 523px,#ffffff 552px,#ffffff 581px,#ffffff 610px,#ffffff 639px,#ffffff 668px,#ffffff 697px,#e4e4e4 697px,#dfdfdf 726px,#d9d9d9 755px,#d3d3d3 784px,#cccccc 813px,#c8c8c8 826px,#c1c1c1 841px,#bbbbbb 853px,#b4b4b4 863px,#adadad 871px)"></i><i style="top:723px;height:4px;background:linear-gradient(90deg,#d2d2d2 0px,#e1e1e1 29px,#f0f0f0 58px,#fefefe 87px,#ffffff 116px,#ffffff 145px,#ffffff 175px,#ffffff 175px,#ffffff 204px,#ffffff 233px,#ffffff 262px,#ffffff 291px,#ffffff 320px,#ffffff 350px,#ffffff 350px,#ffffff 379px,#ffffff 408px,#ffffff 437px,#ffffff 466px,#ffffff 495px,#ffffff 523px,#ffffff 523px,#ffffff 552px,#ffffff 581px,#ffffff 610px,#ffffff 639px,#ffffff 668px,#ffffff 697px,#e4e4e4 697px,#dfdfdf 726px,#d9d9d9 755px,#d3d3d3 784px,#cbcbcb 813px,#c7c7c7 826px,#c1c1c1 841px,#bababa 853px,#b3b3b3 863px,#acacac 871px)"></i><i style="top:727px;height:1px;background:linear-gradient(90deg,#d2d2d2 0px,#e1e1e1 29px,#f0f0f0 58px,#ffffff 87px,#ffffff 116px,#ffffff 145px,#ffffff 175px,#ffffff 175px,#ffffff 204px,#ffffff 233px,#ffffff 262px,#ffffff 291px,#ffffff 320px,#ffffff 350px,#ffffff 350px,#ffffff 379px,#ffffff 408px,#ffffff 437px,#ffffff 466px,#ffffff 495px,#ffffff 523px,#ffffff 523px,#ffffff 552px,#ffffff 581px,#ffffff 610px,#ffffff 639px,#ffffff 668px,#ffffff 697px,#e4e4e4 697px,#dedede 726px,#d9d9d9 755px,#d3d3d3 784px,#cbcbcb 813px,#c7c7c7 826px,#c1c1c1 841px,#bababa 853px,#b3b3b3 863px,#acacac 871px)"></i></div>
</div>
<div class="abs" style="left:0;top:0;width:1367px;height:1077px;overflow:hidden"><svg class="ov" width="1799" height="1119" viewBox="0 0 1799 1119"><g fill="#333"><g transform="translate(574.0 366.0)"><rect x="-4" y="-4" width="3" height="3"/><rect x="1" y="-4" width="3" height="3"/><rect x="-4" y="1" width="3" height="3"/><rect x="1" y="1" width="3" height="3"/></g><g transform="translate(722.0 366.0)"><rect x="-4" y="-4" width="3" height="3"/><rect x="1" y="-4" width="3" height="3"/><rect x="-4" y="1" width="3" height="3"/><rect x="1" y="1" width="3" height="3"/></g><g transform="translate(869.6 367.0)"><rect x="-4" y="-4" width="3" height="3"/><rect x="1" y="-4" width="3" height="3"/><rect x="-4" y="1" width="3" height="3"/><rect x="1" y="1" width="3" height="3"/></g><g transform="translate(1017.8 367.7)"><rect x="-4" y="-4" width="3" height="3"/><rect x="1" y="-4" width="3" height="3"/><rect x="-4" y="1" width="3" height="3"/><rect x="1" y="1" width="3" height="3"/></g><g transform="translate(1167.6 369.3)"><rect x="-4" y="-4" width="3" height="3"/><rect x="1" y="-4" width="3" height="3"/><rect x="-4" y="1" width="3" height="3"/><rect x="1" y="1" width="3" height="3"/></g><g transform="translate(573.0 512.0)"><rect x="-4" y="-4" width="3" height="3"/><rect x="1" y="-4" width="3" height="3"/><rect x="-4" y="1" width="3" height="3"/><rect x="1" y="1" width="3" height="3"/></g><g transform="translate(718.0 512.0)"><rect x="-4" y="-4" width="3" height="3"/><rect x="1" y="-4" width="3" height="3"/><rect x="-4" y="1" width="3" height="3"/><rect x="1" y="1" width="3" height="3"/></g><g transform="translate(866.0 513.0)"><rect x="-4" y="-4" width="3" height="3"/><rect x="1" y="-4" width="3" height="3"/><rect x="-4" y="1" width="3" height="3"/><rect x="1" y="1" width="3" height="3"/></g><g transform="translate(1013.0 514.0)"><rect x="-4" y="-4" width="3" height="3"/><rect x="1" y="-4" width="3" height="3"/><rect x="-4" y="1" width="3" height="3"/><rect x="1" y="1" width="3" height="3"/></g><g transform="translate(1163.0 516.0)"><rect x="-4" y="-4" width="3" height="3"/><rect x="1" y="-4" width="3" height="3"/><rect x="-4" y="1" width="3" height="3"/><rect x="1" y="1" width="3" height="3"/></g><g transform="translate(570.6 656.0)"><rect x="-4" y="-4" width="3" height="3"/><rect x="1" y="-4" width="3" height="3"/><rect x="-4" y="1" width="3" height="3"/><rect x="1" y="1" width="3" height="3"/></g><g transform="translate(716.0 658.0)"><rect x="-4" y="-4" width="3" height="3"/><rect x="1" y="-4" width="3" height="3"/><rect x="-4" y="1" width="3" height="3"/><rect x="1" y="1" width="3" height="3"/></g><g transform="translate(861.0 660.0)"><rect x="-4" y="-4" width="3" height="3"/><rect x="1" y="-4" width="3" height="3"/><rect x="-4" y="1" width="3" height="3"/><rect x="1" y="1" width="3" height="3"/></g><g transform="translate(1010.0 662.0)"><rect x="-4" y="-4" width="3" height="3"/><rect x="1" y="-4" width="3" height="3"/><rect x="-4" y="1" width="3" height="3"/><rect x="1" y="1" width="3" height="3"/></g><g transform="translate(1158.0 663.0)"><rect x="-4" y="-4" width="3" height="3"/><rect x="1" y="-4" width="3" height="3"/><rect x="-4" y="1" width="3" height="3"/><rect x="1" y="1" width="3" height="3"/></g><g transform="translate(567.0 799.0)"><rect x="-4" y="-4" width="3" height="3"/><rect x="1" y="-4" width="3" height="3"/><rect x="-4" y="1" width="3" height="3"/><rect x="1" y="1" width="3" height="3"/></g><g transform="translate(713.0 802.0)"><rect x="-4" y="-4" width="3" height="3"/><rect x="1" y="-4" width="3" height="3"/><rect x="-4" y="1" width="3" height="3"/><rect x="1" y="1" width="3" height="3"/></g><g transform="translate(858.0 804.0)"><rect x="-4" y="-4" width="3" height="3"/><rect x="1" y="-4" width="3" height="3"/><rect x="-4" y="1" width="3" height="3"/><rect x="1" y="1" width="3" height="3"/></g><g transform="translate(1006.0 806.0)"><rect x="-4" y="-4" width="3" height="3"/><rect x="1" y="-4" width="3" height="3"/><rect x="-4" y="1" width="3" height="3"/><rect x="1" y="1" width="3" height="3"/></g><g transform="translate(1155.0 808.0)"><rect x="-4" y="-4" width="3" height="3"/><rect x="1" y="-4" width="3" height="3"/><rect x="-4" y="1" width="3" height="3"/><rect x="1" y="1" width="3" height="3"/></g><g transform="translate(563.0 943.0)"><rect x="-4" y="-4" width="3" height="3"/><rect x="1" y="-4" width="3" height="3"/><rect x="-4" y="1" width="3" height="3"/><rect x="1" y="1" width="3" height="3"/></g><g transform="translate(710.0 946.0)"><rect x="-4" y="-4" width="3" height="3"/><rect x="1" y="-4" width="3" height="3"/><rect x="-4" y="1" width="3" height="3"/><rect x="1" y="1" width="3" height="3"/></g><g transform="translate(856.0 948.0)"><rect x="-4" y="-4" width="3" height="3"/><rect x="1" y="-4" width="3" height="3"/><rect x="-4" y="1" width="3" height="3"/><rect x="1" y="1" width="3" height="3"/></g><g transform="translate(1003.0 950.0)"><rect x="-4" y="-4" width="3" height="3"/><rect x="1" y="-4" width="3" height="3"/><rect x="-4" y="1" width="3" height="3"/><rect x="1" y="1" width="3" height="3"/></g><g transform="translate(1153.0 952.0)"><rect x="-4" y="-4" width="3" height="3"/><rect x="1" y="-4" width="3" height="3"/><rect x="-4" y="1" width="3" height="3"/><rect x="1" y="1" width="3" height="3"/></g></g><g fill="none" stroke="#00ff00" stroke-width="1.5"><g transform="translate(574.0 366.0) rotate(0.00)"><rect x="-6" y="-6.5" width="12.5" height="13"/><path d="M-12.5 0H31.5M23 -6.5L31.5 0L23 6.5M0 -13V30.5M-6.8 22L0 30.5L6.8 22"/><path d="M42 -15L54 -1.5M54 -15L42 -1.5M-5.5 37.5L1 44.5L7.5 37.5M1 44.5V50.5" stroke-width="1.5"/></g><g transform="translate(722.0 366.0) rotate(0.00)"><rect x="-6" y="-6.5" width="12.5" height="13"/><path d="M-12.5 0H31.5M23 -6.5L31.5 0L23 6.5M0 -13V30.5M-6.8 22L0 30.5L6.8 22"/><path d="M42 -15L54 -1.5M54 -15L42 -1.5M-5.5 37.5L1 44.5L7.5 37.5M1 44.5V50.5" stroke-width="1.5"/></g><g transform="translate(869.6 367.0) rotate(0.00)"><rect x="-6" y="-6.5" width="12.5" height="13"/><path d="M-12.5 0H31.5M23 -6.5L31.5 0L23 6.5M0 -13V30.5M-6.8 22L0 30.5L6.8 22"/><path d="M42 -15L54 -1.5M54 -15L42 -1.5M-5.5 37.5L1 44.5L7.5 37.5M1 44.5V50.5" stroke-width="1.5"/></g><g transform="translate(1017.8 367.7) rotate(0.00)"><rect x="-6" y="-6.5" width="12.5" height="13"/><path d="M-12.5 0H31.5M23 -6.5L31.5 0L23 6.5M0 -13V30.5M-6.8 22L0 30.5L6.8 22"/><path d="M42 -15L54 -1.5M54 -15L42 -1.5M-5.5 37.5L1 44.5L7.5 37.5M1 44.5V50.5" stroke-width="1.5"/></g><g transform="translate(1167.6 369.3) rotate(0.00)"><rect x="-6" y="-6.5" width="12.5" height="13"/><path d="M-12.5 0H31.5M23 -6.5L31.5 0L23 6.5M0 -13V30.5M-6.8 22L0 30.5L6.8 22"/><path d="M42 -15L54 -1.5M54 -15L42 -1.5M-5.5 37.5L1 44.5L7.5 37.5M1 44.5V50.5" stroke-width="1.5"/></g><g transform="translate(573.0 512.0) rotate(0.00)"><rect x="-6" y="-6.5" width="12.5" height="13"/><path d="M-12.5 0H31.5M23 -6.5L31.5 0L23 6.5M0 -13V30.5M-6.8 22L0 30.5L6.8 22"/><path d="M42 -15L54 -1.5M54 -15L42 -1.5M-5.5 37.5L1 44.5L7.5 37.5M1 44.5V50.5" stroke-width="1.5"/></g><g transform="translate(718.0 512.0) rotate(0.00)"><rect x="-6" y="-6.5" width="12.5" height="13"/><path d="M-12.5 0H31.5M23 -6.5L31.5 0L23 6.5M0 -13V30.5M-6.8 22L0 30.5L6.8 22"/><path d="M42 -15L54 -1.5M54 -15L42 -1.5M-5.5 37.5L1 44.5L7.5 37.5M1 44.5V50.5" stroke-width="1.5"/></g><g transform="translate(866.0 513.0) rotate(0.00)"><rect x="-6" y="-6.5" width="12.5" height="13"/><path d="M-12.5 0H31.5M23 -6.5L31.5 0L23 6.5M0 -13V30.5M-6.8 22L0 30.5L6.8 22"/><path d="M42 -15L54 -1.5M54 -15L42 -1.5M-5.5 37.5L1 44.5L7.5 37.5M1 44.5V50.5" stroke-width="1.5"/></g><g transform="translate(1013.0 514.0) rotate(0.00)"><rect x="-6" y="-6.5" width="12.5" height="13"/><path d="M-12.5 0H31.5M23 -6.5L31.5 0L23 6.5M0 -13V30.5M-6.8 22L0 30.5L6.8 22"/><path d="M42 -15L54 -1.5M54 -15L42 -1.5M-5.5 37.5L1 44.5L7.5 37.5M1 44.5V50.5" stroke-width="1.5"/></g><g transform="translate(1163.0 516.0) rotate(0.00)"><rect x="-6" y="-6.5" width="12.5" height="13"/><path d="M-12.5 0H31.5M23 -6.5L31.5 0L23 6.5M0 -13V30.5M-6.8 22L0 30.5L6.8 22"/><path d="M42 -15L54 -1.5M54 -15L42 -1.5M-5.5 37.5L1 44.5L7.5 37.5M1 44.5V50.5" stroke-width="1.5"/></g><g transform="translate(570.6 656.0) rotate(0.00)"><rect x="-6" y="-6.5" width="12.5" height="13"/><path d="M-12.5 0H31.5M23 -6.5L31.5 0L23 6.5M0 -13V30.5M-6.8 22L0 30.5L6.8 22"/><path d="M42 -15L54 -1.5M54 -15L42 -1.5M-5.5 37.5L1 44.5L7.5 37.5M1 44.5V50.5" stroke-width="1.5"/></g><g transform="translate(716.0 658.0) rotate(0.00)"><rect x="-6" y="-6.5" width="12.5" height="13"/><path d="M-12.5 0H31.5M23 -6.5L31.5 0L23 6.5M0 -13V30.5M-6.8 22L0 30.5L6.8 22"/><path d="M42 -15L54 -1.5M54 -15L42 -1.5M-5.5 37.5L1 44.5L7.5 37.5M1 44.5V50.5" stroke-width="1.5"/></g><g transform="translate(861.0 660.0) rotate(0.00)"><rect x="-6" y="-6.5" width="12.5" height="13"/><path d="M-12.5 0H31.5M23 -6.5L31.5 0L23 6.5M0 -13V30.5M-6.8 22L0 30.5L6.8 22"/><path d="M42 -15L54 -1.5M54 -15L42 -1.5M-5.5 37.5L1 44.5L7.5 37.5M1 44.5V50.5" stroke-width="1.5"/></g><g transform="translate(1010.0 662.0) rotate(0.00)"><rect x="-6" y="-6.5" width="12.5" height="13"/><path d="M-12.5 0H31.5M23 -6.5L31.5 0L23 6.5M0 -13V30.5M-6.8 22L0 30.5L6.8 22"/><path d="M42 -15L54 -1.5M54 -15L42 -1.5M-5.5 37.5L1 44.5L7.5 37.5M1 44.5V50.5" stroke-width="1.5"/></g><g transform="translate(1158.0 663.0) rotate(0.00)"><rect x="-6" y="-6.5" width="12.5" height="13"/><path d="M-12.5 0H31.5M23 -6.5L31.5 0L23 6.5M0 -13V30.5M-6.8 22L0 30.5L6.8 22"/><path d="M42 -15L54 -1.5M54 -15L42 -1.5M-5.5 37.5L1 44.5L7.5 37.5M1 44.5V50.5" stroke-width="1.5"/></g><g transform="translate(567.0 799.0) rotate(0.00)"><rect x="-6" y="-6.5" width="12.5" height="13"/><path d="M-12.5 0H31.5M23 -6.5L31.5 0L23 6.5M0 -13V30.5M-6.8 22L0 30.5L6.8 22"/><path d="M42 -15L54 -1.5M54 -15L42 -1.5M-5.5 37.5L1 44.5L7.5 37.5M1 44.5V50.5" stroke-width="1.5"/></g><g transform="translate(713.0 802.0) rotate(0.00)"><rect x="-6" y="-6.5" width="12.5" height="13"/><path d="M-12.5 0H31.5M23 -6.5L31.5 0L23 6.5M0 -13V30.5M-6.8 22L0 30.5L6.8 22"/><path d="M42 -15L54 -1.5M54 -15L42 -1.5M-5.5 37.5L1 44.5L7.5 37.5M1 44.5V50.5" stroke-width="1.5"/></g><g transform="translate(858.0 804.0) rotate(0.00)"><rect x="-6" y="-6.5" width="12.5" height="13"/><path d="M-12.5 0H31.5M23 -6.5L31.5 0L23 6.5M0 -13V30.5M-6.8 22L0 30.5L6.8 22"/><path d="M42 -15L54 -1.5M54 -15L42 -1.5M-5.5 37.5L1 44.5L7.5 37.5M1 44.5V50.5" stroke-width="1.5"/></g><g transform="translate(1006.0 806.0) rotate(0.00)"><rect x="-6" y="-6.5" width="12.5" height="13"/><path d="M-12.5 0H31.5M23 -6.5L31.5 0L23 6.5M0 -13V30.5M-6.8 22L0 30.5L6.8 22"/><path d="M42 -15L54 -1.5M54 -15L42 -1.5M-5.5 37.5L1 44.5L7.5 37.5M1 44.5V50.5" stroke-width="1.5"/></g><g transform="translate(1155.0 808.0) rotate(0.00)"><rect x="-6" y="-6.5" width="12.5" height="13"/><path d="M-12.5 0H31.5M23 -6.5L31.5 0L23 6.5M0 -13V30.5M-6.8 22L0 30.5L6.8 22"/><path d="M42 -15L54 -1.5M54 -15L42 -1.5M-5.5 37.5L1 44.5L7.5 37.5M1 44.5V50.5" stroke-width="1.5"/></g><g transform="translate(563.0 943.0) rotate(0.00)"><rect x="-6" y="-6.5" width="12.5" height="13"/><path d="M-12.5 0H31.5M23 -6.5L31.5 0L23 6.5M0 -13V30.5M-6.8 22L0 30.5L6.8 22"/><path d="M42 -15L54 -1.5M54 -15L42 -1.5M-5.5 37.5L1 44.5L7.5 37.5M1 44.5V50.5" stroke-width="1.5"/></g><g transform="translate(710.0 946.0) rotate(0.00)"><rect x="-6" y="-6.5" width="12.5" height="13"/><path d="M-12.5 0H31.5M23 -6.5L31.5 0L23 6.5M0 -13V30.5M-6.8 22L0 30.5L6.8 22"/><path d="M42 -15L54 -1.5M54 -15L42 -1.5M-5.5 37.5L1 44.5L7.5 37.5M1 44.5V50.5" stroke-width="1.5"/></g><g transform="translate(856.0 948.0) rotate(0.00)"><rect x="-6" y="-6.5" width="12.5" height="13"/><path d="M-12.5 0H31.5M23 -6.5L31.5 0L23 6.5M0 -13V30.5M-6.8 22L0 30.5L6.8 22"/><path d="M42 -15L54 -1.5M54 -15L42 -1.5M-5.5 37.5L1 44.5L7.5 37.5M1 44.5V50.5" stroke-width="1.5"/></g><g transform="translate(1003.0 950.0) rotate(0.00)"><rect x="-6" y="-6.5" width="12.5" height="13"/><path d="M-12.5 0H31.5M23 -6.5L31.5 0L23 6.5M0 -13V30.5M-6.8 22L0 30.5L6.8 22"/><path d="M42 -15L54 -1.5M54 -15L42 -1.5M-5.5 37.5L1 44.5L7.5 37.5M1 44.5V50.5" stroke-width="1.5"/></g><g transform="translate(1153.0 952.0) rotate(0.00)"><rect x="-6" y="-6.5" width="12.5" height="13"/><path d="M-12.5 0H31.5M23 -6.5L31.5 0L23 6.5M0 -13V30.5M-6.8 22L0 30.5L6.8 22"/><path d="M42 -15L54 -1.5M54 -15L42 -1.5M-5.5 37.5L1 44.5L7.5 37.5M1 44.5V50.5" stroke-width="1.5"/></g></g></svg> <div class="gl" style="top:63px">Pattern result[0], Score= 1.000, User dXYΘ= -0.052, -0.013 mm, -0.074°</div><div class="gl" style="top:84px">Pattern result[1], Score= 0.984, User dXYΘ= -17.061, 0.202 mm, -1.956°</div><div class="gl" style="top:105px">Pattern result[2], Score= 0.980, User dXYΘ= 8.709, 17.703 mm, -1.610°</div><div class="gl" style="top:126px">Pattern result[3], Score= 0.974, User dXYΘ= 0.115, 8.918 mm, -0.086°</div><div class="gl" style="top:147px">Pattern result[4], Score= 0.972, User dXYΘ= -8.183, 17.932 mm, -7.592°</div><div class="gl" style="top:168px">Pattern result[5], Score= 0.963, User dXYΘ= -8.719, -8.961 mm, 1.860°</div><div class="gl" style="top:189px">Pattern result[6], Score= 0.956, User dXYΘ= 16.729, -0.185 mm, -4.833°</div><div class="gl" style="top:210px">Pattern result[7], Score= 0.954, User dXYΘ= 0.292, 17.822 mm, 1.698°</div><div class="gl" style="top:231px">Pattern result[8], Score= 0.953, User dXYΘ= 16.603, -9.195 mm, -2.623°</div><div class="gl" style="top:252px">Pattern result[9], Score= 0.950, User dXYΘ= -0.245, -9.050 mm, -3.744°</div><div class="gl" style="top:273px">Pattern result[10], Score= 0.949, User dXYΘ= 8.514, 8.801 mm, -2.682°</div><div class="gl" style="top:294px">Pattern result[11], Score= 0.940, User dXYΘ= -8.517, 0.097 mm, 0.288°</div><div class="gl" style="top:315px">Pattern result[12], Score= 0.927, User dXYΘ= -0.426, -18.119 mm, -0.951°</div><div class="gl" style="top:336px">Pattern result[13], Score= 0.926, User dXYΘ= -16.875, 9.136 mm, -5.762°</div><div class="gl" style="top:357px">Pattern result[14], Score= 0.923, User dXYΘ= 16.512, -18.201 mm, -6.602°</div><div class="gl" style="top:378px">Pattern result[15], Score= 0.922, User dXYΘ= 8.027, -18.167 mm, -5.651°</div><div class="gl" style="top:399px">Pattern result[16], Score= 0.919, User dXYΘ= 16.921, 8.652 mm, -3.779°</div><div class="gl" style="top:420px">Pattern result[17], Score= 0.919, User dXYΘ= -17.294, -8.863 mm, -3.394°</div><div class="gl" style="top:441px">Pattern result[18], Score= 0.913, User dXYΘ= 17.131, 17.534 mm, -2.817°</div><div class="gl" style="top:462px">Pattern result[19], Score= 0.908, User dXYΘ= -8.962, -18.061 mm, -0.106°</div><div class="gl" style="top:483px">Pattern result[20], Score= 0.901, User dXYΘ= -8.335, 9.023 mm, -1.782°</div><div class="gl" style="top:504px">Pattern result[21], Score= 0.888, User dXYΘ= 8.327, -0.106 mm, -6.781°</div><div class="gl" style="top:525px">Pattern result[22], Score= 0.885, User dXYΘ= -16.737, 18.073 mm, -2.415°</div><div class="gl" style="top:546px">Pattern result[23], Score= 0.876, User dXYΘ= -17.593, -17.951 mm, 3.465°</div><div class="gl" style="top:567px">Pattern result[24], Score= 0.806, User dXYΘ= 8.174, -9.129 mm, 1.143°</div></div>
<div id="rp"></div>
<svg class="abs" style="left:1385px;top:58px" width="22" height="34"><path d="M5.2 4H18M5.2 4V31.2H18" fill="none" stroke="#999" stroke-width="1.4" stroke-dasharray="1.5 1.5"/></svg>
<div class="tree" style="left:1406.5px;top:49px">Circle</div>
<div class="tree" style="left:1406.5px;top:76px">Pattern</div>
<div id="ph"><svg class="abs" style="left:0;top:0" width="428" height="39" viewBox="1371 328 428 39">
<ellipse cx="1391.2" cy="349" rx="13.6" ry="11.6" fill="#c9c9c9" stroke="#6e6e6e" stroke-width="2.6"/>
<path d="M1391.2 342V351" stroke="#555" stroke-width="2.6"/><circle cx="1391.2" cy="354.8" r="1.5" fill="#555"/>
<path d="M1502 345V339H1508M1514 339H1516M1522 339H1528V345M1528 353V359H1522M1516 359H1514M1508 359H1502V353" fill="none" stroke="#ff1a1a" stroke-width="2.6"/>
<path d="M1502 348V350M1528 348V350" stroke="#ff1a1a" stroke-width="2.6"/>
<path d="M1512.5 343.5L1520.5 349.3L1512.5 355.3Z" fill="#ff0000"/>
<rect x="1551.5" y="340.5" width="22.5" height="18.5" rx="2" fill="none" stroke="#333" stroke-width="2.8"/>
<path d="M1582.7 348H1590.7L1586.7 352.5Z" fill="#000"/>
</svg><div style="position:absolute;left:43px;top:9px;font-size:20px;font-weight:bold;color:#111;line-height:23px">Pattern</div></div>
<div id="ptb"><svg class="abs" style="left:0;top:0" width="428" height="38" viewBox="1371 374 428 38">
<rect x="1375.2" y="377.2" width="33" height="30" rx="3.5" fill="#cce8ff" stroke="#99d1ff" stroke-width="1.4"/>
<rect x="1379.5" y="381.5" width="8.5" height="9" rx="1.5" fill="#f4f4f4" stroke="#5b8fd0" stroke-width="1.3"/>
<rect x="1379.5" y="395.5" width="8.5" height="9" rx="1.5" fill="#f4f4f4" stroke="#5b8fd0" stroke-width="1.3"/>
<path d="M1381 386H1386.5M1383.7 383.3V388.8M1381 400H1386.5M1383.7 397.3V402.8" stroke="#000" stroke-width="1.8"/>
<path d="M1391 384.6H1397M1391 401.2H1397" stroke="#666" stroke-width="1.3"/>
<path d="M1391 387.5H1397M1398.5 387.5H1403M1391 390.5H1397M1398.5 390.5H1403M1391 393.5H1397M1398.5 393.5H1403M1391 396.5H1397M1398.5 396.5H1403M1391 404.3H1397M1398.5 404.3H1403" stroke="#8aa" stroke-width="1" stroke-dasharray="1 0.5"/>
<text x="1413.3" y="391.5" font-family="Liberation Serif" font-weight="bold" font-size="14" fill="#3a5fc8">A</text>
<text x="1414.2" y="403.6" font-family="Liberation Serif" font-weight="bold" font-size="14" fill="#b03030">Z</text>
<path d="M1432.2 381V399" stroke="#000" stroke-width="1.8"/><path d="M1428.4 397.5H1436L1432.2 404Z" fill="#000"/>
<path d="M1447.2 378V409" stroke="#888" stroke-width="1.2"/>
<rect x="1458" y="382" width="23" height="21" fill="#e2e2e2" stroke="#bdbdbd" stroke-width="1.6"/>
<rect x="1461" y="388" width="17" height="12" fill="none" stroke="#c8c8c8" stroke-width="1.2"/>
</svg></div>
<div id="grid"><div id="gin"><div class="pr cat" style="top:0px"><svg class="chev" width="14" height="9" viewBox="0 0 14 9"><path d="M1 1L7 7L13 1" fill="none" stroke="#333" stroke-width="2"/></svg><span class="cn">Basic</span></div><div class="pr" style="top:27px"><div class="pl ro">Name</div><div class="pv ro">Pattern</div></div><div class="pr" style="top:54px"><div class="pl">Description</div><div class="pv"></div></div><div class="pr" style="top:81px"><div class="pl ro">Time</div><div class="pv ro">433</div></div><div class="pr cat" style="top:108px"><svg class="chev" width="14" height="9" viewBox="0 0 14 9"><path d="M1 1L7 7L13 1" fill="none" stroke="#333" stroke-width="2"/></svg><span class="cn">Parameter</span></div><div class="pr" style="top:135px"><svg class="chevr" width="9" height="14" viewBox="0 0 9 14"><path d="M1.5 1L7.5 7L1.5 13" fill="none" stroke="#888" stroke-width="1.6"/></svg><div class="pl">Intensity</div><div class="pv">Double[] Array</div></div><div class="pr" style="top:162px"><div class="pl">Skip SubProcess</div><div class="pv">False</div></div><div class="pr" style="top:189px"><div class="pl">Matching Score</div><div class="pv">0.80</div></div><div class="pr" style="top:216px"><div class="pl">Judgement Score</div><div class="pv">0.80</div></div><div class="pr" style="top:243px"><div class="pl sel">Find Counts</div><div class="pv">25</div></div><div class="pr" style="top:270px"><div class="pl">Min. Angle</div><div class="pv">-5.73</div></div><div class="pr" style="top:297px"><div class="pl">Max. Angle</div><div class="pv">5.73</div></div><div class="pr" style="top:324px"><div class="pl">Min. Scale</div><div class="pv">0.95</div></div><div class="pr" style="top:351px"><div class="pl">Max. Scale</div><div class="pv">1.05</div></div><div class="pr" style="top:378px"><div class="pl">Overlay Level</div><div class="pv">Max</div></div><div class="pr cat" style="top:405px"><svg class="chev" width="14" height="9" viewBox="0 0 14 9"><path d="M1 1L7 7L13 1" fill="none" stroke="#333" stroke-width="2"/></svg><span class="cn">Result</span></div><div class="pr" style="top:432px"><svg class="chevr" width="9" height="14" viewBox="0 0 9 14"><path d="M1.5 1L7.5 7L1.5 13" fill="none" stroke="#888" stroke-width="1.6"/></svg><div class="pl">Data</div><div class="pv">PatternResult[] Array</div></div><div class="pr cat" style="top:459px"><svg class="chev" width="14" height="9" viewBox="0 0 14 9"><path d="M1 1L7 7L13 1" fill="none" stroke="#333" stroke-width="2"/></svg><span class="cn">Train</span></div><div class="pr" style="top:486px"><div class="pl">Type</div><div class="pv">Single</div></div><div class="pr" style="top:513px"><svg class="chevr" width="9" height="14" viewBox="0 0 9 14"><path d="M1.5 1L7.5 7L1.5 13" fill="none" stroke="#888" stroke-width="1.6"/></svg><div class="pl">Single Data</div><div class="pv">Trained</div></div><div class="pr cat" style="top:540px"><svg class="chev" width="14" height="9" viewBox="0 0 14 9"><path d="M1 1L7 7L13 1" fill="none" stroke="#333" stroke-width="2"/></svg><span class="cn">기타</span></div></div><div id="sbt0"></div></div>
<div id="sbt"></div>
<div id="desc"><div style="position:absolute;left:8px;top:5px;font-size:20px;font-weight:bold;color:#111">Find Counts</div><div style="position:absolute;left:8px;top:30px;font-size:19px;color:#111">검색 개수 (0 = Don't Care)</div></div>
<div id="status">
<div class="sp" style="left:1px;width:1401px"><b style="position:absolute;left:11px;top:2px;transform:scaleX(0.96);transform-origin:0 0">NoName</b><span style="position:absolute;left:120px;top:2px">433 ms</span><span style="position:absolute;right:4px;top:1px"># 공간: (9675.44, -1981.46)</span></div>
<div class="sp" style="left:1403px;width:176px;padding-left:3px">확대/축소: 4.74%</div>
<div class="sp" style="left:1583px;width:192px;padding-left:3px">값: --</div>
</div>
</body></html>
